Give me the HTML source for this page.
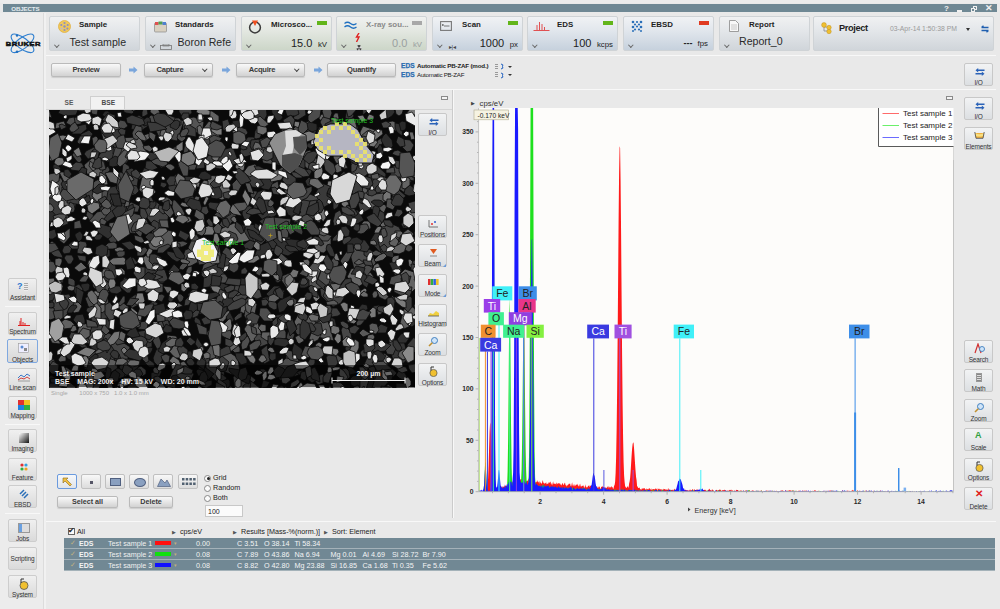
<!DOCTYPE html><html><head><meta charset="utf-8"><style>
*{margin:0;padding:0;box-sizing:border-box}
html,body{width:1000px;height:609px;overflow:hidden;background:#e9e9e9;font-family:"Liberation Sans",sans-serif;color:#222}
.a{position:absolute}
.t{position:absolute;white-space:nowrap;line-height:1}
.w{position:absolute;top:16px;height:35px;width:91px;border:1px solid #cfd3d6;border-radius:2px}
.wg{background:linear-gradient(#f0f1f2,#e4e7ea 40%,#d0d5da)}
.wgr{background:linear-gradient(#f0f1f0,#e4e8e2 40%,#ccd6c8)}
.wbl{background:linear-gradient(#f0f2f4,#e2e7ed 40%,#c6d1dd)}
.wl{position:absolute;left:35px;top:5px;font-size:9px;font-weight:bold;color:#1a1a1a}
.wv{position:absolute;right:6px;top:19px;font-size:12.5px;color:#222}
.wu{font-size:9px;color:#333}
.chev{position:absolute;left:4.5px;top:25.5px;width:3.6px;height:3.6px;border-right:1.3px solid #6a6a6a;border-bottom:1.3px solid #6a6a6a;transform:rotate(45deg)}
.btn{position:absolute;height:14px;border:1px solid #bababa;border-radius:2px;background:linear-gradient(#f9f9f9,#e6e6e6 50%,#d2d2d2);box-shadow:0 1px 1px rgba(0,0,0,0.12);font-size:8.5px;font-weight:bold;color:#3a3a3a;text-align:center;line-height:12px}
.sb{position:absolute;left:8px;width:29px;height:23px;border:1px solid #cdcdcd;border-radius:2px;background:linear-gradient(#f0f0f0,#dadada);font-size:6.5px;color:#333;text-align:center}
.sb span{position:absolute;left:-3px;right:-3px;bottom:-1px;white-space:nowrap;letter-spacing:-0.15px}
.tb{position:absolute;width:29px;height:23px;border:1px solid #c8c8c8;border-radius:2px;background:linear-gradient(#f2f3f4,#dcdfe2);font-size:6.5px;color:#333;text-align:center}
.tb span{position:absolute;left:-3px;right:-3px;bottom:-0.5px;white-space:nowrap;letter-spacing:-0.15px}
.hl{position:absolute;height:1px;background:#c4c4c4;border-bottom:1px solid #f8f8f8}
</style></head><body>
<div class="a" style="left:0;top:0;width:1000px;height:3px;background:#ececec"></div>
<div class="a" style="left:3px;top:3.8px;width:994px;height:8.6px;background:#6f8894"></div>
<div class="t" style="left:11.3px;top:5.9px;font-size:6.2px;font-weight:bold;color:#e4ecef;letter-spacing:-0.15px">OBJECTS</div>
<div class="t" style="left:944px;top:4.5px;font-size:8px;font-weight:bold;color:#f0f0f0">?</div>
<div class="a" style="left:957px;top:10px;width:5px;height:1.5px;background:#f0f0f0"></div>
<div class="a" style="left:972.5px;top:6px;width:4px;height:4px;border:1px solid #f0f0f0;border-top-width:1.5px"></div><div class="a" style="left:971px;top:7.5px;width:4px;height:4px;border:1px solid #f0f0f0;background:#6f8894"></div>
<div class="t" style="left:985px;top:4px;font-size:9px;font-weight:bold;color:#f0f0f0">&#x2715;</div>
<div class="a" style="left:0;top:13px;width:43px;height:596px;background:#ececec"></div>
<div class="a" style="left:43px;top:13px;width:3px;height:596px;background:#f1f1f1;border-left:1px solid #dcdcdc"></div>
<div class="hl" style="left:46px;top:55px;width:950px"></div>
<div class="w wg" style="left:49px;width:91px"><div class="chev"></div><svg class="a" style="left:8px;top:3px" width="13" height="13" viewBox="0 0 13 13"><circle cx="6.5" cy="6.5" r="6" fill="#f0c85a" stroke="#e0b040" stroke-width="0.8"/><circle cx="6.5" cy="6.5" r="1.2" fill="#8d8fc0"/><circle cx="6.5" cy="3" r="1.1" fill="#8d8fc0"/><circle cx="6.5" cy="10" r="1.1" fill="#8d8fc0"/><circle cx="3.3" cy="5" r="1.1" fill="#8d8fc0"/><circle cx="9.7" cy="5" r="1.1" fill="#8d8fc0"/><circle cx="3.6" cy="8.6" r="1.1" fill="#b8b8d0"/><circle cx="9.4" cy="8.6" r="1.1" fill="#8d8fc0"/></svg><div class="t" style="left:29px;top:4.3px;font-size:7.9px;font-weight:bold;color:#1e1e1e">Sample</div><div class="t" style="left:19.5px;top:20px;font-size:10.6px;color:#2a2a2a">Test sample</div></div>
<div class="w wg" style="left:145px;width:91px"><div class="chev"></div><svg class="a" style="left:8px;top:4px" width="13" height="12" viewBox="0 0 13 12"><rect x="0.5" y="2" width="12" height="9" rx="1" fill="#d8d0c0" stroke="#8a8a8a" stroke-width="0.7"/><rect x="1" y="1" width="3.5" height="3" fill="#e05050"/><rect x="4.5" y="0.5" width="4" height="3" fill="#50a050"/><rect x="8.5" y="1" width="3.5" height="3" fill="#5080d0"/></svg><svg class="a" style="left:13.5px;top:26.5px" width="12" height="6" viewBox="0 0 12 6"><rect x="0.5" y="1.5" width="11" height="4" fill="none" stroke="#777" stroke-width="0.8"/><rect x="3" y="0" width="6" height="2" fill="none" stroke="#777" stroke-width="0.7"/></svg><div class="t" style="left:29px;top:4.3px;font-size:7.9px;font-weight:bold;color:#1e1e1e">Standards</div><div class="t" style="left:31.5px;top:20px;font-size:10.6px;color:#2a2a2a;width:56px;overflow:hidden">Boron Refe</div></div>
<div class="w wgr" style="left:241px;width:91px"><div class="chev"></div><svg class="a" style="left:5.5px;top:1.5px" width="14" height="15" viewBox="0 0 14 15"><circle cx="7" cy="8.5" r="5.4" fill="none" stroke="#3a3a3a" stroke-width="1.5"/><path d="M4 1.5 L10 1.5 L7 7 Z" fill="#f05020"/></svg><div class="t" style="left:29px;top:4.3px;font-size:7.9px;font-weight:bold;color:#1e1e1e">Microsco...</div><div class="a" style="left:75px;top:4px;width:9.5px;height:3.6px;background:#62b51a"></div><div class="t" style="right:4px;top:20.5px;font-size:11px;color:#222">15.0 <span style="font-size:7.8px;margin-left:2.5px">kV</span></div></div>
<div class="w wgr" style="left:336px;width:91px"><div class="chev"></div><svg class="a" style="left:7px;top:4px" width="13" height="8" viewBox="0 0 13 8"><path d="M0.5 2.5 Q3.5 0 6.5 2.5 T12.5 2.5" fill="none" stroke="#2070c0" stroke-width="1.3"/><path d="M0.5 6 Q3.5 3.5 6.5 6 T12.5 6" fill="none" stroke="#2070c0" stroke-width="1.3"/></svg><svg class="a" style="left:18px;top:16px" width="6" height="9" viewBox="0 0 6 9"><path d="M4 0 L1.5 4 L4 4 L1.5 9" fill="none" stroke="#e02020" stroke-width="1.4"/></svg><svg class="a" style="left:19px;top:28px" width="6" height="6" viewBox="0 0 6 6"><circle cx="3" cy="3" r="2.6" fill="#ddd"/><path d="M3 3 L1.2 0.8 A2.6 2.6 0 0 1 4.8 0.8Z M3 3 L0.4 3.6 A2.6 2.6 0 0 0 2 5.6Z M3 3 L4 5.6 A2.6 2.6 0 0 0 5.6 3.6Z" fill="#444"/></svg><div class="t" style="left:29px;top:4.3px;font-size:7.9px;font-weight:bold;color:#8a8a8a">X-ray sou...</div><div class="a" style="left:75px;top:4px;width:9.5px;height:3.6px;background:#a8a8a8"></div><div class="t" style="right:4px;top:20.5px;font-size:11px;color:#9aa0a0">0.0 <span style="font-size:7.8px;margin-left:2.5px">kV</span></div></div>
<div class="w wbl" style="left:432px;width:91px"><div class="chev"></div><svg class="a" style="left:7px;top:4px" width="12" height="10" viewBox="0 0 12 10"><rect x="0.6" y="0.6" width="10.8" height="8.8" fill="none" stroke="#777" stroke-width="1.1"/><path d="M2.5 4 L4 4 M3 3 L2.3 4 L3 5 M4 5 L9.5 5" stroke="#555" stroke-width="0.8" fill="none"/></svg><div class="t" style="left:16px;top:27px;font-size:6px;color:#444;letter-spacing:-0.5px">&#9656;|&#9666;</div><div class="t" style="left:29px;top:4.3px;font-size:7.9px;font-weight:bold;color:#1e1e1e">Scan</div><div class="a" style="left:75px;top:4px;width:9.5px;height:3.6px;background:#62b51a"></div><div class="t" style="right:4px;top:20.5px;font-size:11px;color:#222">1000 <span style="font-size:7.8px;margin-left:2.5px">px</span></div></div>
<div class="w wbl" style="left:527px;width:91px"><div class="chev"></div><svg class="a" style="left:5px;top:3px" width="17" height="11" viewBox="0 0 17 11"><path d="M0.5 10.5 L16.5 10.5 M4 10 L4 5 M6.5 10 L6.5 2 M9 10 L9 4 M11.5 10 L11.5 7" stroke="#e02a2a" stroke-width="0.8" fill="none"/></svg><div class="t" style="left:29px;top:4.3px;font-size:7.9px;font-weight:bold;color:#1e1e1e">EDS</div><div class="a" style="left:75px;top:4px;width:9.5px;height:3.6px;background:#62b51a"></div><div class="t" style="right:4px;top:20.5px;font-size:11px;color:#222">100 <span style="font-size:7.8px;margin-left:2.5px">kcps</span></div></div>
<div class="w wbl" style="left:623px;width:91px"><div class="chev"></div><svg class="a" style="left:7px;top:3px" width="12" height="12" viewBox="0 0 12 12"><g fill="#2a6fb8"><circle cx="2" cy="2" r="1.3"/><circle cx="6" cy="2" r="1.1"/><circle cx="10" cy="2" r="1.3"/><circle cx="4" cy="4.5" r="1.1"/><circle cx="8" cy="4.5" r="1.1"/><circle cx="2" cy="7" r="1.3"/><circle cx="6" cy="6.5" r="1.1"/><circle cx="10" cy="7" r="1.3"/><circle cx="4" cy="9.5" r="1.1"/><circle cx="8" cy="9.5" r="1.1"/><circle cx="2" cy="11" r="1"/><circle cx="10" cy="11" r="1"/></g></svg><div class="t" style="left:27px;top:4.3px;font-size:7.9px;font-weight:bold;color:#1e1e1e">EBSD</div><div class="a" style="left:75px;top:4px;width:9.5px;height:3.6px;background:#e03a20"></div><div class="t" style="right:5px;top:22px;font-size:9px;color:#222"><b>---</b> <span style="font-size:7.8px;margin-left:2.5px">fps</span></div></div>
<div class="w wg" style="left:719px;width:91px"><div class="chev"></div><svg class="a" style="left:9px;top:3px" width="10" height="12" viewBox="0 0 10 12"><path d="M0.5 0.5 L6.5 0.5 L9.5 3.5 L9.5 11.5 L0.5 11.5 Z" fill="#f8f8f8" stroke="#888" stroke-width="0.8"/><path d="M2 5 L8 5 M2 7 L8 7 M2 9 L8 9" stroke="#aaa" stroke-width="0.6"/></svg><div class="t" style="left:29px;top:4.3px;font-size:7.9px;font-weight:bold;color:#1e1e1e">Report</div><div class="t" style="left:19px;top:19px;font-size:10.6px;color:#2a2a2a">Report_0</div></div>
<div class="w wg" style="left:813px;width:181px"><svg class="a" style="left:7px;top:5px" width="11" height="13" viewBox="0 0 11 13"><path d="M3 3 L3 9 L8 9 M3 5 L8 5" stroke="#888" stroke-width="0.8" fill="none"/><circle cx="3" cy="3" r="2.4" fill="#f0c030" stroke="#c09020" stroke-width="0.5"/><circle cx="8" cy="5.5" r="2.2" fill="#f0c030" stroke="#c09020" stroke-width="0.5"/><circle cx="8" cy="9.5" r="2.2" fill="#f0c030" stroke="#c09020" stroke-width="0.5"/></svg><div class="t" style="left:25px;top:6.5px;font-size:9.2px;font-weight:bold;color:#1e1e1e;letter-spacing:-0.35px">Project</div><div class="t" style="left:76px;top:9px;font-size:6.8px;color:#9a9a9a">03-Apr-14 1:50:38 PM</div><div class="a" style="left:152px;top:11px;width:0;height:0;border-left:2.5px solid transparent;border-right:2.5px solid transparent;border-top:3px solid #333"></div><svg class="a" style="left:167px;top:8px" width="8" height="8" viewBox="0 0 8 8"><path d="M0.5 2.5 L7.5 2.5 M0.5 2.5 L2.5 0.8 M7.5 5.5 L0.5 5.5 M7.5 5.5 L5.5 7.2" stroke="#2060b0" stroke-width="1.3" fill="none"/></svg></div>
<div class="btn" style="left:51px;top:63px;width:70px;height:14px;line-height:12.5px;font-size:7.6px;letter-spacing:-0.25px;">Preview</div>
<div class="btn" style="left:144px;top:63px;width:69px;height:14px;line-height:12.5px;font-size:7.6px;letter-spacing:-0.25px;padding-right:17px;">Capture<div class="a" style="right:6px;top:3px;width:3.5px;height:3.5px;border-right:1.3px solid #444;border-bottom:1.3px solid #444;transform:rotate(45deg)"></div></div>
<div class="btn" style="left:236px;top:63px;width:69px;height:14px;line-height:12.5px;font-size:7.6px;letter-spacing:-0.25px;padding-right:17px;">Acquire<div class="a" style="right:6px;top:3px;width:3.5px;height:3.5px;border-right:1.3px solid #444;border-bottom:1.3px solid #444;transform:rotate(45deg)"></div></div>
<div class="btn" style="left:327px;top:63px;width:69px;height:14px;line-height:12.5px;font-size:7.6px;letter-spacing:-0.25px;">Quantify</div>
<svg class="a" style="left:129px;top:66px" width="9" height="8" viewBox="0 0 9 8"><path d="M0 2.5 L4.5 2.5 L4.5 0.5 L8.5 4 L4.5 7.5 L4.5 5.5 L0 5.5 Z" fill="#7aa6dc"/></svg>
<svg class="a" style="left:221.5px;top:66px" width="9" height="8" viewBox="0 0 9 8"><path d="M0 2.5 L4.5 2.5 L4.5 0.5 L8.5 4 L4.5 7.5 L4.5 5.5 L0 5.5 Z" fill="#7aa6dc"/></svg>
<svg class="a" style="left:313.5px;top:66px" width="9" height="8" viewBox="0 0 9 8"><path d="M0 2.5 L4.5 2.5 L4.5 0.5 L8.5 4 L4.5 7.5 L4.5 5.5 L0 5.5 Z" fill="#7aa6dc"/></svg>
<div class="t" style="left:401px;top:63px;font-size:6.6px;font-weight:bold;color:#2a6cb0;-webkit-text-stroke:0.25px #2a6cb0">EDS</div>
<div class="t" style="left:417px;top:63px;font-size:6.2px;font-weight:bold;color:#222;letter-spacing:-0.17px">Automatic PB-ZAF (mod.)</div>
<div class="t" style="left:401px;top:71.5px;font-size:6.6px;font-weight:bold;color:#2a6cb0;-webkit-text-stroke:0.25px #2a6cb0">EDS</div>
<div class="t" style="left:417px;top:71.5px;font-size:6.2px;color:#222;letter-spacing:-0.25px">Automatic PB-ZAF</div>
<div class="a" style="left:495px;top:63.5px;width:3px;height:5px;background:repeating-linear-gradient(#999 0 1px,transparent 1px 2px)"></div>
<svg class="a" style="left:500px;top:63px" width="5" height="7" viewBox="0 0 5 7"><path d="M1 1 Q4 1.5 2.5 3.5 Q4 5.5 1 6" stroke="#2060c0" stroke-width="1" fill="none"/></svg>
<div class="a" style="left:508px;top:65.5px;width:0;height:0;border-left:2px solid transparent;border-right:2px solid transparent;border-top:2.5px solid #333"></div>
<div class="a" style="left:495px;top:72.0px;width:3px;height:5px;background:repeating-linear-gradient(#999 0 1px,transparent 1px 2px)"></div>
<svg class="a" style="left:500px;top:71.5px" width="5" height="7" viewBox="0 0 5 7"><path d="M1 1 Q4 1.5 2.5 3.5 Q4 5.5 1 6" stroke="#2060c0" stroke-width="1" fill="none"/></svg>
<div class="a" style="left:508px;top:74.0px;width:0;height:0;border-left:2px solid transparent;border-right:2px solid transparent;border-top:2.5px solid #333"></div>
<div class="tb" style="left:964px;top:63px;height:23px"><svg class="a" style="left:9.5px;top:4px" width="10" height="8" viewBox="0 0 10 8"><path d="M0.5 2.2 L3.2 0 L3.2 1.4 L9.5 1.4 L9.5 3 L3.2 3 L3.2 4.4 Z M9.5 5.8 L6.8 3.6 L6.8 5 L0.5 5 L0.5 6.6 L6.8 6.6 L6.8 8 Z" fill="#2a62b8"/></svg><span>I/O</span></div>
<div class="hl" style="left:46px;top:89px;width:950px"></div>
<svg class="a" style="left:4px;top:31px" width="38" height="25" viewBox="0 0 38 25"><ellipse cx="18.5" cy="12.3" rx="13.6" ry="5.4" transform="rotate(37 18.5 12.3)" fill="none" stroke="#2f7fcf" stroke-width="1.15"/><ellipse cx="18.5" cy="12.3" rx="13.6" ry="5.4" transform="rotate(-37 18.5 12.3)" fill="none" stroke="#2f7fcf" stroke-width="1.15"/><circle cx="13" cy="4.6" r="1.2" fill="#1f6fc0"/><circle cx="13" cy="20.8" r="1.2" fill="#1f6fc0"/><text x="0" y="0" transform="translate(19.4 15) scale(1.36 1)" text-anchor="middle" font-family="Liberation Sans" font-weight="bold" font-size="5.6" fill="#111" letter-spacing="0.35" stroke="#111" stroke-width="0.45">BRUKER</text></svg>
<div class="sb" style="top:278px;"><div class="t" style="left:8px;top:3px;font-size:9px;font-weight:bold;color:#2878d0">?</div><div class="a" style="left:15px;top:4px;width:4px;height:8px;background:repeating-linear-gradient(#aaa 0 1px,#eee 1px 2px)"></div><span>Assistant</span></div>
<div class="hl" style="left:5px;top:306px;width:35px"></div>
<div class="sb" style="top:312px;"><svg class="a" style="left:8px;top:3px" width="14" height="10" viewBox="0 0 14 10"><path d="M1 9.5 L13 9.5 M3 9 L3 5 M4 9 L4 2 M6 9 L6 6 M8 9 L8 7" stroke="#e02020" stroke-width="1" fill="none"/></svg><span>Spectrum</span></div>
<div class="sb" style="top:339px;border:1.5px solid #7fa8e0;background:linear-gradient(#ececec,#d8d8d8);left:7px;width:31px;height:24px"><svg class="a" style="left:10px;top:3px" width="11" height="10" viewBox="0 0 11 10"><rect x="0.5" y="0.5" width="10" height="9" fill="#eef" stroke="#999" stroke-width="0.6"/><circle cx="4" cy="4" r="1.5" fill="#5a8ad0"/><rect x="6" y="5" width="3" height="3" fill="#888"/></svg><span>Objects</span></div>
<div class="sb" style="top:368px;"><svg class="a" style="left:8px;top:3px" width="14" height="10" viewBox="0 0 14 10"><path d="M1 9 L13 9" stroke="#888" stroke-width="0.8"/><path d="M1 6 L4 3 L7 5 L10 2 L13 4" stroke="#3a78c8" stroke-width="1" fill="none"/><path d="M1 8 L4 6 L7 7 L10 5 L13 7" stroke="#d04040" stroke-width="1" fill="none"/></svg><span>Line scan</span></div>
<div class="sb" style="top:396px;"><svg class="a" style="left:9px;top:3px" width="12" height="10" viewBox="0 0 12 10"><rect x="0" y="0" width="6" height="5" fill="#e03030"/><rect x="6" y="0" width="6" height="5" fill="#f0c020"/><rect x="0" y="5" width="6" height="5" fill="#2080e0"/><rect x="6" y="5" width="6" height="5" fill="#30b040"/></svg><span>Mapping</span></div>
<div class="hl" style="left:5px;top:424px;width:35px"></div>
<div class="sb" style="top:429px;"><div class="a" style="left:10px;top:3px;width:10px;height:10px;background:linear-gradient(135deg,#fff,#111)"></div><span>Imaging</span></div>
<div class="sb" style="top:458px;"><svg class="a" style="left:10px;top:3px" width="10" height="10" viewBox="0 0 10 10"><circle cx="3" cy="3" r="1.6" fill="#e03030"/><circle cx="7" cy="3" r="1.6" fill="#30a0e0"/><circle cx="3" cy="7" r="1.6" fill="#30b040"/><circle cx="7" cy="7" r="1.6" fill="#f0a020"/></svg><span>Feature</span></div>
<div class="sb" style="top:485px;"><svg class="a" style="left:10px;top:3px" width="10" height="10" viewBox="0 0 10 10"><path d="M1 5 L5 1 M3 7 L7 3 M5 9 L9 5" stroke="#2a6fb8" stroke-width="1.5"/></svg><span>EBSD</span></div>
<div class="hl" style="left:5px;top:513px;width:35px"></div>
<div class="sb" style="top:519px;"><div class="a" style="left:9px;top:3px;width:12px;height:10px;border:1px solid #999;background:linear-gradient(90deg,#6aa0e0 0 3px,#ddd 3px)"></div><span>Jobs</span></div>
<div class="sb" style="top:547px"><span style="bottom:7.5px">Scripting</span></div>
<div class="sb" style="top:575px;"><svg class="a" style="left:9px;top:2px" width="12" height="12" viewBox="0 0 12 12"><circle cx="6" cy="7.5" r="4" fill="#f0c030" stroke="#555" stroke-width="0.8"/><path d="M3 1 L3 5 M3 1 L6 1" stroke="#333" stroke-width="1"/></svg><span>System</span></div>
<div class="t" style="left:64.5px;top:100px;font-size:6.6px;font-weight:bold;color:#5a5a5a">SE</div>
<div class="a" style="left:90px;top:96px;width:35px;height:15px;border:1px solid #cfcfcf;border-bottom:none;background:#f2f2f2"></div>
<div class="t" style="left:101.5px;top:100px;font-size:6.6px;font-weight:bold;color:#4a4a4a">BSE</div>
<div class="a" style="left:441px;top:95.5px;width:6.5px;height:4.5px;border:1px solid #8a8a8a;border-top:1.6px solid #8a8a8a;background:#f4f4f4"></div>
<div class="a" style="left:946px;top:95.5px;width:6.5px;height:4.5px;border:1px solid #8a8a8a;border-top:1.6px solid #8a8a8a;background:#f4f4f4"></div>
<div class="a" style="left:46px;top:109px;width:406px;height:1px;background:#d4d4d4"></div>
<svg class="a" style="left:49px;top:110px" width="366" height="278" viewBox="0 0 366 278"><rect width="366" height="278" fill="#0a0a0a"/><g stroke="#0a0a0a" stroke-width="0.8" stroke-linejoin="round"><polygon points="272,99 265,86 272,73 287,78 289,89" fill="#3a3a3a"/><polygon points="6,194 -5,189 -5,182 0,174 9,175 13,180 11,191" fill="#313131"/><polygon points="239,180 230,167 243,162 248,175" fill="#4e4e4e"/><polygon points="66,96 70,90 83,96 90,111 78,119 69,111" fill="#393939"/><polygon points="187,143 187,157 178,161 168,156 176,140" fill="#3e3e3e"/><polygon points="363,70 356,83 339,72 344,56 359,56" fill="#474747"/><polygon points="28,269 45,272 38,290 27,284" fill="#3c3c3c"/><polygon points="1,191 16,187 25,195 18,204 8,204 0,200" fill="#303030"/><polygon points="189,170 196,168 207,175 201,187 191,187 184,180" fill="#393939"/><polygon points="98,157 106,169 102,177 89,169 92,159" fill="#5f5f5f"/><polygon points="325,167 309,177 298,167 302,159 315,154" fill="#666666"/><polygon points="338,80 335,91 312,104 308,90 314,79" fill="#414141"/><polygon points="363,182 350,175 346,169 356,159 365,162 369,176" fill="#636363"/><polygon points="324,59 313,69 302,64 302,52 328,45" fill="#474747"/><polygon points="36,248 46,239 67,248 69,262 41,263" fill="#5c5c5c"/><polygon points="188,104 178,120 170,115 181,98" fill="#424242"/><polygon points="308,28 314,16 326,20 328,32 318,38" fill="#696969"/><polygon points="75,30 66,41 56,37 51,18 57,8 70,14" fill="#5d5d5d"/><polygon points="76,74 78,90 67,106 55,114 51,102 51,88 62,77" fill="#363636"/><polygon points="173,192 182,203 173,213 162,202" fill="#676767"/><polygon points="153,42 153,53 144,53 134,44 136,33 149,34" fill="#424242"/><polygon points="86,168 98,156 110,155 116,172 107,178 95,176" fill="#353535"/><polygon points="46,228 60,223 81,237 78,254 59,248" fill="#454545"/><polygon points="186,281 184,267 191,261 204,274 203,288 198,292" fill="#686868"/><polygon points="167,177 167,170 183,177 186,189 180,191 168,184" fill="#2e2e2e"/><polygon points="53,185 44,177 43,169 57,167 63,173 62,181" fill="#4b4b4b"/><polygon points="213,226 202,232 195,219 206,203" fill="#606060"/><polygon points="19,80 11,92 4,93 -10,82 -9,72 3,68 12,68" fill="#4c4c4c"/><polygon points="40,201 50,194 63,198 65,211 58,223 43,212" fill="#3b3b3b"/><polygon points="277,167 283,173 285,188 279,193 272,186 270,173" fill="#3e3e3e"/><polygon points="228,104 217,114 204,99 206,83 216,79" fill="#343434"/><polygon points="86,241 86,222 103,219 103,237" fill="#383838"/><polygon points="105,90 120,102 118,117 107,119 98,108 93,94" fill="#424242"/><polygon points="341,241 343,229 355,230 359,249 350,257 346,256" fill="#363636"/><polygon points="262,180 255,164 267,149 277,159 275,178" fill="#525252"/><polygon points="160,32 152,21 160,11 168,17 172,32" fill="#5a5a5a"/><polygon points="219,140 217,132 230,124 241,127 246,142 239,146" fill="#313131"/><polygon points="69,85 70,62 90,64 87,85" fill="#3f3f3f"/><polygon points="66,152 68,166 64,174 55,170 54,161 56,152" fill="#373737"/><polygon points="105,116 114,119 123,121 125,133 116,140 101,140 99,134" fill="#585858"/><polygon points="274,101 263,106 245,102 235,80 249,79 268,87" fill="#4a4a4a"/><polygon points="96,106 101,117 91,124 72,122 63,114 73,105 79,102" fill="#494949"/><polygon points="316,33 316,40 303,39 294,34 294,29 305,24" fill="#636363"/><polygon points="342,122 345,148 333,145 321,131 330,116" fill="#313131"/><polygon points="203,130 180,135 167,121 185,113 203,117" fill="#676767"/><polygon points="326,265 312,261 318,248 331,240 339,248 339,262" fill="#3f3f3f"/><polygon points="239,128 223,127 223,107 242,109" fill="#4a4a4a"/><polygon points="232,220 224,214 227,205 240,203 243,211 241,218" fill="#2f2f2f"/><polygon points="303,117 293,113 288,107 298,100 309,100 315,110" fill="#2d2d2d"/><polygon points="301,144 307,135 323,144 327,153 316,165 305,159" fill="#4c4c4c"/><polygon points="-5,113 -8,102 -5,98 9,100 13,106 7,113" fill="#4f4f4f"/><polygon points="152,163 157,145 170,134 175,161 162,179" fill="#4d4d4d"/><polygon points="43,48 55,50 57,58 56,65 46,67 38,64 35,55" fill="#595959"/><polygon points="50,69 59,81 57,92 51,91 40,77 46,71" fill="#4d4d4d"/><polygon points="282,186 267,173 272,160 284,158 293,175" fill="#393939"/><polygon points="254,213 263,202 279,210 285,231 265,226" fill="#565656"/><polygon points="37,249 42,238 57,228 65,240 56,261 42,267" fill="#363636"/><polygon points="329,73 338,90 325,101 313,91 316,74" fill="#585858"/><polygon points="319,85 314,79 319,73 331,73 330,81" fill="#4f4f4f"/><polygon points="95,84 90,80 94,62 102,61 105,66 103,80" fill="#686868"/><polygon points="126,255 135,251 145,264 141,273 130,274 120,269" fill="#5b5b5b"/><polygon points="82,19 84,9 90,5 102,14 92,21" fill="#353535"/><polygon points="263,10 268,26 251,34 240,23 248,15" fill="#4d4d4d"/><polygon points="5,203 2,194 6,186 20,184 26,194 15,208" fill="#424242"/><polygon points="29,86 26,98 12,95 13,77" fill="#5b5b5b"/><polygon points="127,226 134,237 132,248 126,248 118,239 118,225" fill="#606060"/><polygon points="362,196 372,203 370,212 355,219 351,213 355,199" fill="#5e5e5e"/><polygon points="172,238 173,243 165,256 154,254 154,247 163,233" fill="#535353"/><polygon points="247,247 250,258 246,264 240,264 236,259 237,246 240,242" fill="#434343"/><polygon points="307,67 314,72 319,81 309,89 300,87 296,78" fill="#5d5d5d"/><polygon points="31,84 17,84 12,74 18,64 32,73" fill="#333333"/><polygon points="-5,105 -9,97 -1,88 7,88 15,99 15,105 4,111" fill="#3b3b3b"/><polygon points="236,37 216,48 198,41 202,32 230,23" fill="#434343"/><polygon points="200,187 208,194 206,204 191,203 192,194" fill="#606060"/><polygon points="60,193 58,197 43,202 39,196 36,188 47,182 57,182" fill="#464646"/><polygon points="134,22 134,9 145,7 155,12 153,23" fill="#545454"/><polygon points="314,71 313,87 298,94 291,72 301,65" fill="#3e3e3e"/><polygon points="268,105 258,116 248,114 239,104 233,93 255,90 266,92" fill="#3f3f3f"/><polygon points="203,134 195,121 198,114 207,115 214,127 213,134" fill="#353535"/><polygon points="126,214 115,209 115,199 126,198 131,210" fill="#4f4f4f"/><polygon points="167,271 157,262 157,253 162,249 170,247 176,257 175,269" fill="#535353"/><polygon points="279,177 269,169 275,153 285,166" fill="#4e4e4e"/><polygon points="265,135 266,130 275,125 282,128 282,135 275,143 268,142" fill="#5c5c5c"/><polygon points="170,260 168,248 177,240 189,248 191,263 184,265" fill="#5e5e5e"/><polygon points="92,250 88,261 75,267 70,257 76,249" fill="#434343"/><polygon points="37,215 53,215 59,219 52,233 44,235 33,232 30,228" fill="#3a3a3a"/><polygon points="188,186 187,195 179,201 169,201 168,191 173,180 183,181" fill="#313131"/><polygon points="224,260 237,248 252,251 250,265 232,271" fill="#4d4d4d"/><polygon points="207,36 205,44 196,47 191,42 193,34 199,27 206,27" fill="#373737"/><polygon points="334,110 350,117 354,125 351,138 332,142 329,131" fill="#464646"/><polygon points="103,11 117,4 135,11 132,20 128,31 110,27 105,17" fill="#464646"/><polygon points="75,56 48,49 55,37 71,28 88,40" fill="#3c3c3c"/><polygon points="211,61 218,70 215,78 206,77 201,70" fill="#454545"/><polygon points="322,50 337,64 335,83 318,71" fill="#383838"/><polygon points="260,60 243,46 261,40 274,57" fill="#525252"/><polygon points="342,70 343,82 326,84 322,73 329,64" fill="#404040"/><polygon points="322,261 337,253 348,263 332,280 323,279" fill="#474747"/><polygon points="87,31 88,44 76,47 62,36 71,28" fill="#2f2f2f"/><polygon points="293,176 295,188 292,193 284,197 274,186 277,180 282,169" fill="#444444"/><polygon points="108,161 98,159 93,148 99,144 106,145 111,157" fill="#666666"/><polygon points="209,35 222,30 235,40 236,54 228,55 214,53" fill="#505050"/><polygon points="139,202 142,189 152,188 158,196 150,204" fill="#2e2e2e"/><polygon points="154,178 155,159 168,154 176,164 171,175" fill="#363636"/><polygon points="18,93 20,74 43,75 53,97" fill="#3d3d3d"/><polygon points="32,230 28,227 28,223 31,213 40,214 43,216 39,228" fill="#595959"/><polygon points="91,27 98,43 84,48 64,44 65,28" fill="#5f5f5f"/><polygon points="91,175 103,170 113,179 97,183" fill="#494949"/><polygon points="161,43 184,37 190,53 171,59 153,55" fill="#393939"/><polygon points="157,84 159,65 176,67 183,85 173,90" fill="#626262"/><polygon points="98,236 86,242 80,229 88,223" fill="#626262"/><polygon points="360,112 358,118 354,118 352,114 356,109" fill="#3b3b3b"/><polygon points="80,102 77,97 82,92 91,96 89,102" fill="#464646"/><polygon points="-3,6 -4,-3 -0,-1 3,8" fill="#595959"/><polygon points="269,230 265,232 260,229 263,220 267,218 272,225" fill="#5a5a5a"/><polygon points="100,138 104,140 101,147 98,147 97,143" fill="#727272"/><polygon points="143,264 136,264 132,263 133,257 136,256 144,260" fill="#616161"/><polygon points="34,8 32,14 26,15 23,9 27,7" fill="#454545"/><polygon points="279,174 285,178 282,182 277,182 275,177" fill="#323232"/><polygon points="194,228 199,226 201,231 198,238 193,240 192,235" fill="#4e4e4e"/><polygon points="108,215 113,208 123,206 126,211 120,216 112,218" fill="#434343"/><polygon points="173,187 168,184 163,180 161,175 163,173 171,177 174,182" fill="#7a7a7a"/><polygon points="242,113 246,122 241,125 237,118" fill="#4b4b4b"/><polygon points="53,88 48,92 43,86 44,82 50,79 53,80" fill="#767676"/><polygon points="31,131 37,132 38,135 36,143 32,144 28,143 29,133" fill="#454545"/><polygon points="132,44 142,41 145,48 138,55 131,53" fill="#2b2b2b"/><polygon points="147,59 147,51 155,48 156,58" fill="#383838"/><polygon points="375,274 369,271 367,268 372,266 377,271" fill="#4a4a4a"/><polygon points="8,47 3,47 1,37 6,31 11,33 12,41" fill="#313131"/><polygon points="300,233 302,237 301,241 299,244 296,239 297,234" fill="#333333"/><polygon points="61,60 55,68 52,64 54,60 59,56" fill="#404040"/><polygon points="201,182 197,189 187,194 183,189 189,183" fill="#464646"/><polygon points="285,79 282,75 285,71 286,70 289,71 289,76 287,78" fill="#474747"/><polygon points="152,5 155,7 154,11 150,13 148,10 148,6" fill="#797979"/><polygon points="64,5 62,9 58,8 53,5 56,1 59,1" fill="#2a2a2a"/><polygon points="102,13 99,8 102,5 109,7 108,13" fill="#494949"/><polygon points="92,256 97,260 97,264 94,266 93,266 89,262 88,258" fill="#6e6e6e"/><polygon points="282,198 288,198 292,204 289,206 283,207 279,205" fill="#404040"/><polygon points="42,283 43,277 50,268 53,271 49,281" fill="#444444"/><polygon points="194,40 191,38 192,34 197,34 198,39" fill="#383838"/><polygon points="125,93 123,95 117,95 112,91 113,88 118,87 121,89" fill="#4b4b4b"/><polygon points="253,289 254,284 262,281 265,287 258,291" fill="#444444"/><polygon points="351,234 350,239 341,239 340,229 345,229" fill="#6c6c6c"/><polygon points="246,96 252,102 247,108 239,105 236,98 239,92" fill="#2e2e2e"/><polygon points="240,288 235,287 231,281 236,277 243,280 243,284" fill="#727272"/><polygon points="127,36 130,41 129,46 120,50 115,49 117,43" fill="#444444"/><polygon points="260,176 256,178 251,178 250,172 251,170 256,167 260,170" fill="#2c2c2c"/><polygon points="327,240 324,246 313,247 311,243 312,241 318,237 326,239" fill="#393939"/><polygon points="358,235 365,227 369,233 369,241 362,244" fill="#3b3b3b"/><polygon points="146,67 148,73 135,74 136,66" fill="#303030"/><polygon points="22,200 25,193 29,192 33,196 30,202 25,203" fill="#636363"/><polygon points="207,270 201,276 195,268 201,265" fill="#747474"/><polygon points="19,214 14,222 10,226 6,221 12,212" fill="#6b6b6b"/><polygon points="47,228 43,232 39,229 43,222 49,220" fill="#4a4a4a"/><polygon points="233,170 229,173 227,172 226,170 228,167 232,166 233,167" fill="#393939"/><polygon points="105,43 109,45 112,54 110,55 103,52 98,47 100,42" fill="#333333"/><polygon points="226,139 220,138 216,130 222,128 228,134" fill="#333333"/><polygon points="182,285 180,282 179,279 181,275 185,279 185,283" fill="#323232"/><polygon points="327,108 330,106 335,107 336,111 337,116 333,117 328,112" fill="#656565"/><polygon points="338,244 335,236 344,231 348,236 344,245" fill="#434343"/><polygon points="151,87 149,92 144,90 147,86" fill="#5c5c5c"/><polygon points="137,106 141,107 143,111 138,113 134,108" fill="#6b6b6b"/><polygon points="17,13 20,8 25,7 26,12 23,16" fill="#4f4f4f"/><polygon points="109,260 113,261 109,270 103,272 102,270 102,263" fill="#434343"/><polygon points="253,168 256,168 258,170 259,172 256,175 252,175 251,173" fill="#454545"/><polygon points="271,188 267,192 264,188 265,180 268,181" fill="#7c7c7c"/><polygon points="219,234 211,237 205,229 209,224 218,225" fill="#454545"/><polygon points="30,223 34,218 41,220 41,226 35,230 32,228" fill="#5d5d5d"/><polygon points="24,251 19,249 16,245 21,243 25,248" fill="#2b2b2b"/><polygon points="329,223 326,220 332,214 339,217 337,223" fill="#353535"/><polygon points="5,198 7,208 1,210 -4,206 -5,197" fill="#4b4b4b"/><polygon points="173,87 168,89 162,88 162,81 164,77 169,75 173,82" fill="#313131"/><polygon points="250,279 256,283 256,290 250,289 245,281" fill="#2b2b2b"/><polygon points="54,60 51,60 49,55 49,52 52,50 55,52 57,59" fill="#4a4a4a"/><polygon points="155,245 157,244 161,248 160,251 160,253 155,253 153,249" fill="#3a3a3a"/><polygon points="191,100 191,92 197,94 195,105" fill="#4a4a4a"/><polygon points="122,82 119,78 121,69 127,64 130,70 125,82" fill="#3a3a3a"/><polygon points="196,288 192,287 188,285 188,281 191,281 195,284" fill="#777777"/><polygon points="151,134 146,135 142,134 142,127 147,124 150,128" fill="#464646"/><polygon points="100,131 96,127 100,123 105,123 107,123 110,128 104,131" fill="#353535"/><polygon points="30,150 28,145 37,146 37,152" fill="#444444"/><polygon points="271,203 273,207 271,211 267,213 265,210 266,203" fill="#404040"/><polygon points="92,29 95,25 101,23 104,26 95,32" fill="#636363"/><polygon points="174,130 180,121 187,124 189,129 185,135 177,133" fill="#454545"/><polygon points="239,221 246,224 243,232 237,228" fill="#3e3e3e"/><polygon points="286,209 288,218 283,219 279,212 282,207" fill="#2b2b2b"/><polygon points="114,104 109,100 110,95 116,97 119,102" fill="#444444"/><polygon points="96,245 95,243 96,239 101,237 104,238 103,241 101,244" fill="#2d2d2d"/><polygon points="62,25 66,20 70,19 72,26 72,34 68,40 64,36" fill="#353535"/><polygon points="210,102 208,98 214,96 216,102 214,105" fill="#363636"/><polygon points="254,211 250,222 245,212 250,203" fill="#636363"/><polygon points="-3,180 -5,176 -3,173 1,172 3,174 4,179 1,181" fill="#5e5e5e"/><polygon points="181,202 185,210 181,215 177,207" fill="#2d2d2d"/><polygon points="147,214 145,211 146,207 147,207 151,210 153,216 152,217" fill="#363636"/><polygon points="119,134 122,136 114,143 108,143 109,138" fill="#434343"/><polygon points="278,86 278,83 285,81 287,85 283,89" fill="#2b2b2b"/><polygon points="341,110 344,114 344,117 341,117 336,115 334,110" fill="#3b3b3b"/><polygon points="249,246 250,252 241,250 236,244 237,240 243,241" fill="#494949"/><polygon points="66,251 64,244 70,244 72,249" fill="#2e2e2e"/><polygon points="173,264 178,268 175,272 168,270 168,265" fill="#4e4e4e"/><polygon points="207,122 209,127 208,131 206,132 203,128 203,123 205,123" fill="#595959"/><polygon points="155,21 155,27 149,24 148,17 151,15" fill="#6c6c6c"/><polygon points="356,64 359,62 361,61 365,66 365,71 360,70" fill="#474747"/><polygon points="269,275 265,270 268,266 274,264 276,268 274,273" fill="#717171"/><polygon points="350,131 347,137 341,135 340,132 346,127" fill="#606060"/><polygon points="177,261 169,262 166,253 173,246 180,252" fill="#3d3d3d"/><polygon points="320,79 312,77 310,73 315,66 322,68 324,74" fill="#3d3d3d"/><polygon points="157,224 159,220 166,224 168,228 162,229" fill="#565656"/><polygon points="7,175 -4,176 -6,169 5,168" fill="#6f6f6f"/><polygon points="274,223 269,226 262,223 262,217 267,213 272,213" fill="#3c3c3c"/><polygon points="325,199 324,196 330,195 334,198 334,202" fill="#333333"/><polygon points="81,188 87,184 89,195 82,199" fill="#3e3e3e"/><polygon points="355,117 355,108 359,106 360,113" fill="#575757"/><polygon points="365,195 373,191 373,200 367,204" fill="#7c7c7c"/><polygon points="300,94 297,100 292,94 296,87" fill="#747474"/><polygon points="337,12 344,11 356,19 347,21 338,17" fill="#636363"/><polygon points="341,191 343,185 348,190 345,195" fill="#383838"/><polygon points="364,152 364,155 363,159 360,156 359,150 361,149" fill="#6d6d6d"/><polygon points="114,153 112,156 106,157 100,151 101,144 106,144 112,147" fill="#3a3a3a"/><polygon points="269,54 267,63 259,59 261,51" fill="#424242"/><polygon points="367,280 357,284 347,280 347,273 360,274" fill="#2f2f2f"/><polygon points="178,278 172,274 173,271 179,269 181,271 181,276" fill="#333333"/><polygon points="197,267 189,269 180,261 180,258 191,260" fill="#323232"/><polygon points="315,145 315,136 325,142 323,150" fill="#3c3c3c"/><polygon points="42,91 38,93 34,89 40,85" fill="#303030"/><polygon points="150,263 149,257 156,257 165,264 159,270" fill="#2c2c2c"/><polygon points="95,39 94,36 100,35 104,39 101,42" fill="#585858"/><polygon points="37,201 38,198 44,196 48,197 47,201 41,204" fill="#3c3c3c"/><polygon points="47,187 44,186 41,185 43,182 49,180 53,182 51,186" fill="#767676"/><polygon points="92,212 82,204 82,197 93,206" fill="#797979"/><polygon points="261,159 258,167 250,164 255,158" fill="#4b4b4b"/><polygon points="218,5 212,17 205,8 210,-6 217,-5" fill="#343434"/><polygon points="130,8 132,10 132,15 128,16 125,12 126,8" fill="#474747"/><polygon points="279,284 274,288 272,285 275,277 278,278" fill="#6e6e6e"/><polygon points="183,85 180,89 175,88 174,83 181,81" fill="#454545"/><polygon points="152,209 160,205 164,213 155,215" fill="#3c3c3c"/><polygon points="118,141 128,143 133,149 128,152 123,149 118,144" fill="#343434"/><polygon points="223,212 228,207 229,213 224,218" fill="#3c3c3c"/><polygon points="24,17 37,14 38,19 32,24 23,24" fill="#363636"/><polygon points="372,216 379,219 381,223 375,226 369,221 370,218" fill="#6e6e6e"/><polygon points="95,-3 98,-2 99,4 96,6 93,7 93,2" fill="#3e3e3e"/><polygon points="335,243 340,247 337,256 332,253" fill="#777777"/><polygon points="324,110 326,103 329,100 335,102 336,108 333,113 327,113" fill="#3a3a3a"/><polygon points="379,7 379,12 370,13 369,6" fill="#797979"/><polygon points="290,8 289,10 287,11 285,10 284,6 286,3 289,3" fill="#5c5c5c"/><polygon points="377,15 378,20 377,25 373,21 372,16 373,14" fill="#7a7a7a"/><polygon points="311,181 316,178 318,180 316,185 312,185" fill="#757575"/><polygon points="103,120 102,113 105,110 110,113 110,119 106,123" fill="#3c3c3c"/><polygon points="51,195 56,194 57,200 53,203 50,200" fill="#5f5f5f"/><polygon points="10,165 15,168 14,173 11,173 6,168 6,165" fill="#2f2f2f"/><polygon points="240,81 244,89 241,94 237,86" fill="#6e6e6e"/><polygon points="139,288 136,291 130,288 130,281 134,278 141,281" fill="#484848"/><polygon points="71,123 68,130 62,125 60,122 63,114 69,117" fill="#5c5c5c"/><polygon points="129,126 131,120 141,125 137,131" fill="#363636"/><polygon points="180,201 178,197 184,192 193,188 197,190 197,194 189,199" fill="#424242"/><polygon points="44,104 45,109 41,111 37,105 38,101" fill="#424242"/><polygon points="71,115 69,121 64,122 60,120 60,113 66,112" fill="#5e5e5e"/><polygon points="359,59 352,59 351,53 354,44 361,47 364,52" fill="#404040"/><polygon points="329,91 338,96 335,103 327,97" fill="#5e5e5e"/><polygon points="211,35 208,39 203,40 201,36 202,30 210,29" fill="#373737"/><polygon points="346,2 343,6 338,9 334,4 338,-4 344,-3" fill="#2e2e2e"/><polygon points="251,131 258,131 259,138 256,141 248,141 246,135" fill="#373737"/><polygon points="44,92 50,93 51,98 43,104 39,101 38,96" fill="#777777"/><polygon points="317,29 320,25 328,19 333,20 334,24 325,31" fill="#767676"/><polygon points="237,111 240,112 239,116 231,121 230,117 230,115" fill="#434343"/><polygon points="304,91 296,91 295,84 303,81" fill="#353535"/><polygon points="314,187 311,185 315,181 319,184 319,187" fill="#6c6c6c"/><polygon points="44,202 46,191 52,198 52,209 46,208" fill="#707070"/><polygon points="217,221 213,222 209,218 212,214 217,215" fill="#666666"/><polygon points="49,28 49,36 47,39 44,35 43,28 47,26" fill="#555555"/><polygon points="14,103 17,102 21,110 18,114 15,111" fill="#404040"/><polygon points="98,220 89,219 90,212 98,211 99,214" fill="#414141"/><polygon points="49,217 38,217 37,209 47,212" fill="#4c4c4c"/><polygon points="348,150 353,161 346,166 340,153" fill="#313131"/><polygon points="264,37 262,39 258,37 257,36 259,33 265,33 266,34" fill="#323232"/><polygon points="316,130 321,137 318,142 307,140 306,135 307,130" fill="#363636"/><polygon points="133,280 139,275 142,278 136,282" fill="#383838"/><polygon points="28,15 30,18 25,22 22,22 20,19 22,15 26,12" fill="#4e4e4e"/><polygon points="283,204 281,211 274,213 269,208 270,200 278,200" fill="#333333"/><polygon points="253,260 257,262 259,266 253,267 247,262" fill="#404040"/><polygon points="21,103 19,97 21,92 25,94 26,99 25,102" fill="#4a4a4a"/><polygon points="299,129 308,127 314,131 312,134 308,138 298,135 296,131" fill="#2b2b2b"/><polygon points="142,73 147,69 151,73 150,77 143,77" fill="#646464"/><polygon points="233,273 232,268 237,264 239,267 242,270 237,274" fill="#7d7d7d"/><polygon points="19,286 21,280 24,281 28,285 29,292 23,294" fill="#2e2e2e"/><polygon points="324,256 326,257 327,262 326,269 321,268 320,263 319,258" fill="#464646"/><polygon points="186,243 183,240 184,236 189,235 191,238 191,242" fill="#4e4e4e"/><polygon points="13,235 17,232 22,232 26,237 20,238" fill="#737373"/><polygon points="363,62 369,61 371,66 368,68 363,67" fill="#4c4c4c"/><polygon points="227,154 231,154 234,164 232,170 226,167 223,160" fill="#2d2d2d"/><polygon points="144,137 143,142 135,152 133,150 136,140" fill="#444444"/><polygon points="327,140 331,142 334,145 327,146 323,145 322,143" fill="#4a4a4a"/><polygon points="158,266 149,266 147,261 149,259 156,261" fill="#353535"/><polygon points="48,102 57,100 58,105 55,109 46,115 43,113 40,111" fill="#4f4f4f"/><polygon points="332,125 332,120 333,119 336,118 338,123 338,126 334,128" fill="#4e4e4e"/><polygon points="205,28 206,21 209,16 213,18 214,21 211,28 207,29" fill="#3f3f3f"/><polygon points="321,276 326,278 323,282 319,283 317,278" fill="#333333"/><polygon points="251,134 259,128 263,126 263,131 257,140 252,140 249,141" fill="#5b5b5b"/><polygon points="346,63 337,63 337,59 345,57" fill="#4d4d4d"/><polygon points="124,218 120,212 124,208 126,208 137,212 136,218 130,219" fill="#434343"/><polygon points="356,263 358,267 354,270 350,268 347,265 350,260" fill="#434343"/><polygon points="148,227 156,239 152,242 146,234" fill="#343434"/><polygon points="69,73 74,78 72,82 67,78" fill="#373737"/><polygon points="106,222 108,221 112,232 112,237 109,241 104,232 103,226" fill="#414141"/><polygon points="162,1 161,5 152,5 147,2 149,-2 154,-2" fill="#7d7d7d"/><polygon points="353,238 351,241 348,241 344,235 344,230 348,230" fill="#363636"/><polygon points="40,-4 43,-4 49,0 48,5 43,4" fill="#4a4a4a"/><polygon points="282,162 280,153 287,145 290,153 286,164" fill="#4e4e4e"/><polygon points="215,259 220,263 218,265 212,263 211,259" fill="#4c4c4c"/><polygon points="137,251 133,241 142,241 146,249" fill="#2a2a2a"/><polygon points="115,51 116,45 121,46 120,53" fill="#3c3c3c"/><polygon points="49,249 43,253 40,249 46,244 49,245" fill="#2b2b2b"/><polygon points="189,236 180,243 179,236 186,229 190,230" fill="#616161"/><polygon points="238,33 241,26 254,32 250,38" fill="#444444"/><polygon points="0,64 11,62 10,71 5,74 -2,70" fill="#585858"/><polygon points="127,132 134,131 139,133 137,135 133,137 130,137 124,134" fill="#4c4c4c"/><polygon points="39,31 31,29 32,24 40,20 44,24" fill="#343434"/><polygon points="231,176 230,182 221,188 217,184 225,176" fill="#333333"/><polygon points="256,-4 257,5 249,10 244,9 248,-2" fill="#3e3e3e"/><polygon points="26,49 23,45 25,42 31,45 33,50 30,54" fill="#444444"/><polygon points="18,203 20,198 23,195 27,195 28,197 23,203" fill="#2a2a2a"/><polygon points="71,137 75,139 75,140 73,142 70,143 66,141 65,138" fill="#676767"/><polygon points="59,74 56,76 50,71 51,62 57,66" fill="#727272"/><polygon points="330,145 335,143 338,146 334,150 327,152 325,150" fill="#676767"/><polygon points="149,204 148,193 157,194 161,204" fill="#343434"/><polygon points="49,90 56,86 59,91 52,94" fill="#3f3f3f"/><polygon points="345,50 357,52 355,59 347,58" fill="#3e3e3e"/><polygon points="315,82 315,86 314,89 307,87 306,83 310,81" fill="#464646"/><polygon points="302,10 296,8 298,-2 302,-2 305,6" fill="#373737"/><polygon points="240,136 236,130 242,129 250,130 254,139 248,142" fill="#2c2c2c"/><polygon points="311,207 314,204 318,206 317,209 312,215 308,216 307,213" fill="#444444"/><polygon points="190,33 186,28 183,21 187,20 193,26 194,30" fill="#6a6a6a"/><polygon points="357,182 363,188 363,197 359,202 354,197 353,188" fill="#3c3c3c"/><polygon points="223,139 213,149 205,147 209,136 219,132" fill="#2e2e2e"/><polygon points="376,287 369,288 369,280 374,276 377,280" fill="#6e6e6e"/><polygon points="231,210 229,208 233,205 239,204 241,209 239,212 235,213" fill="#434343"/><polygon points="166,249 168,241 180,235 182,243" fill="#3b3b3b"/><polygon points="74,255 66,255 68,249 74,248 79,251" fill="#676767"/><polygon points="310,268 317,267 313,278 307,277" fill="#7a7a7a"/><polygon points="51,243 47,244 45,241 46,237 53,235 55,241" fill="#5f5f5f"/><polygon points="16,209 22,211 26,215 23,218 15,219 11,213" fill="#616161"/><polygon points="227,289 225,282 229,277 233,275 239,282 236,289" fill="#2f2f2f"/><polygon points="107,162 111,158 116,160 119,169 115,172 111,172 105,167" fill="#3e3e3e"/><polygon points="338,137 339,141 335,142 334,142 331,137 334,135 335,134" fill="#414141"/><polygon points="170,11 169,12 161,10 161,7 161,1 163,1 170,6" fill="#606060"/><polygon points="268,240 271,246 270,249 265,248 262,240 265,237" fill="#4a4a4a"/><polygon points="137,28 136,29 133,32 130,30 128,28 129,24 134,24" fill="#4c4c4c"/><polygon points="336,29 331,37 326,39 324,34 332,28" fill="#4c4c4c"/><polygon points="115,11 111,9 110,5 114,3 117,4 118,8" fill="#464646"/><polygon points="93,146 88,146 88,142 91,139 96,137 99,140 95,145" fill="#434343"/><polygon points="195,60 190,62 186,57 188,53 196,54" fill="#707070"/><polygon points="379,219 381,228 374,237 368,231 369,222" fill="#343434"/><polygon points="195,206 196,200 201,198 201,205 198,210" fill="#4e4e4e"/><polygon points="262,15 269,17 265,26 257,22" fill="#3e3e3e"/><polygon points="-2,182 3,180 5,182 1,185" fill="#747474"/><polygon points="296,102 298,95 305,98 309,104 305,107" fill="#3f3f3f"/><polygon points="161,244 161,248 156,249 155,248 154,244 158,242" fill="#6c6c6c"/><polygon points="283,264 280,273 278,273 274,272 274,267 278,262 283,259" fill="#6b6b6b"/><polygon points="131,137 129,140 125,142 122,137 122,135 125,131 131,134" fill="#454545"/><polygon points="346,125 346,121 352,121 354,123 354,127 352,129 348,127" fill="#646464"/><polygon points="273,234 273,235 271,239 268,239 265,239 267,234 270,232" fill="#6e6e6e"/><polygon points="14,106 20,109 19,114 11,117 5,115 7,109" fill="#3f3f3f"/><polygon points="301,131 295,135 293,132 295,128 300,126 303,128" fill="#3c3c3c"/><polygon points="310,265 315,267 313,276 306,277 302,275 301,269 304,266" fill="#353535"/><polygon points="260,67 263,70 263,76 258,76 256,71" fill="#313131"/><polygon points="245,16 245,11 251,12 250,18" fill="#7b7b7b"/><polygon points="313,160 318,154 324,158 318,166" fill="#4a4a4a"/><polygon points="142,-3 143,3 139,6 133,6 130,2 130,-6 135,-8" fill="#3c3c3c"/><polygon points="325,123 326,120 329,116 333,117 330,123" fill="#797979"/><polygon points="133,270 136,275 131,275 124,272 122,269 123,266 127,265" fill="#363636"/><polygon points="172,226 171,238 166,239 164,230" fill="#3c3c3c"/><polygon points="55,105 52,101 55,98 58,97 61,98 62,101 58,105" fill="#565656"/><polygon points="147,19 147,27 137,25 135,16 139,14" fill="#3e3e3e"/><polygon points="336,190 330,187 327,179 330,178 334,180 340,187 338,189" fill="#575757"/><polygon points="160,88 156,96 154,93 157,86" fill="#7a7a7a"/><polygon points="200,240 203,238 205,242 202,245 199,244" fill="#737373"/><polygon points="57,233 61,237 58,243 55,237" fill="#444444"/><polygon points="163,234 169,232 171,237 171,247 165,245" fill="#737373"/><polygon points="353,26 348,22 346,18 346,13 352,14 354,19" fill="#313131"/><polygon points="163,143 160,133 169,136 170,142" fill="#4e4e4e"/><polygon points="143,180 146,178 149,181 148,192 147,194 141,191 139,185" fill="#404040"/><polygon points="258,78 248,84 244,81 253,73" fill="#2a2a2a"/><polygon points="144,208 141,206 147,200 151,201 149,206" fill="#3d3d3d"/><polygon points="305,49 296,47 297,38 306,40 308,45" fill="#2c2c2c"/><polygon points="191,17 197,19 199,23 196,26 191,25 189,22 187,18" fill="#424242"/><polygon points="76,167 80,170 78,173 75,176 72,174 74,169" fill="#4a4a4a"/><polygon points="142,131 150,131 146,145 139,138" fill="#505050"/><polygon points="198,250 198,253 192,255 187,248 186,243 194,243" fill="#2c2c2c"/><polygon points="203,147 209,145 211,149 205,153 199,153 198,149" fill="#737373"/><polygon points="269,124 275,123 283,126 279,131 274,131 270,129" fill="#505050"/><polygon points="108,-4 111,3 109,5 106,6 101,2 102,-3 104,-7" fill="#5f5f5f"/><polygon points="250,112 245,113 244,105 247,105" fill="#2c2c2c"/><polygon points="84,28 83,23 87,15 93,17 93,23 88,30" fill="#505050"/><polygon points="261,152 260,156 255,154 254,150 259,149" fill="#626262"/><polygon points="61,146 55,150 52,145 58,138 61,140" fill="#303030"/><polygon points="176,164 179,168 178,173 172,173 170,167 173,164" fill="#4e4e4e"/><polygon points="91,217 81,219 78,213 92,210" fill="#505050"/><polygon points="80,56 84,70 79,71 73,62 74,52" fill="#444444"/><polygon points="208,133 202,140 197,140 194,135 201,130" fill="#353535"/><polygon points="187,282 193,283 191,289 186,287" fill="#555555"/><polygon points="57,220 52,215 54,209 58,208 61,213 61,218" fill="#323232"/><polygon points="57,269 56,265 58,257 62,259 62,270" fill="#343434"/><polygon points="91,105 91,98 96,99 99,106 97,109 94,110" fill="#404040"/><polygon points="75,155 64,155 60,151 64,148 74,147 76,148 78,153" fill="#6e6e6e"/><polygon points="1,156 -0,157 -4,154 -4,149 -1,147 2,150" fill="#404040"/><polygon points="77,225 82,218 86,216 91,226 86,229" fill="#2b2b2b"/><polygon points="368,161 362,160 362,154 368,154" fill="#3f3f3f"/><polygon points="56,204 56,195 61,192 66,200 65,209 61,211" fill="#474747"/><polygon points="116,30 112,29 111,24 112,20 116,19 118,24" fill="#646464"/><polygon points="173,142 177,137 183,141 187,146 182,150 175,146" fill="#434343"/><polygon points="117,278 118,281 117,285 110,283 105,275 108,271 114,274" fill="#6e6e6e"/><polygon points="368,-6 374,-2 377,4 372,5 368,-1" fill="#2b2b2b"/><polygon points="71,10 76,11 79,16 75,19 70,18 68,15" fill="#494949"/><polygon points="118,75 115,78 111,76 112,72 117,73" fill="#373737"/><polygon points="152,153 150,154 147,152 147,150 150,148 153,151" fill="#656565"/><polygon points="67,108 63,101 72,93 78,94 76,104" fill="#333333"/><polygon points="65,230 64,228 71,226 74,228 76,233 68,235" fill="#444444"/><polygon points="248,190 247,195 241,194 239,193 240,188 243,187" fill="#3d3d3d"/><polygon points="350,144 344,143 343,138 347,136 354,132 359,135 355,142" fill="#636363"/><polygon points="351,67 353,74 349,76 343,74 347,67" fill="#373737"/><polygon points="134,204 137,200 143,201 144,205 142,209 136,210" fill="#2e2e2e"/><polygon points="310,223 314,219 322,224 314,227" fill="#5a5a5a"/><polygon points="241,46 241,51 236,53 233,52 232,45 236,42" fill="#595959"/><polygon points="14,208 7,212 4,201 14,200" fill="#4d4d4d"/><polygon points="136,104 133,109 126,106 123,97 124,90 126,90 133,98" fill="#4c4c4c"/><polygon points="319,85 319,80 322,79 329,81 327,84 323,86" fill="#404040"/><polygon points="342,90 338,92 334,90 334,85 338,81 342,80 342,85" fill="#747474"/><polygon points="283,18 282,14 282,8 288,8 288,17" fill="#7b7b7b"/><polygon points="64,179 55,182 52,175 57,170" fill="#4c4c4c"/><polygon points="292,294 286,296 284,293 285,289 287,287 291,290" fill="#797979"/><polygon points="210,76 210,69 219,67 225,70 224,74 220,80 214,79" fill="#2f2f2f"/><polygon points="3,233 -0,227 6,227 11,228 11,234" fill="#5f5f5f"/><polygon points="71,200 68,194 73,192 80,197 78,201" fill="#4a4a4a"/><polygon points="121,283 119,281 118,276 120,272 123,272 123,278" fill="#5c5c5c"/><polygon points="295,177 285,181 281,174 291,173" fill="#6c6c6c"/><polygon points="107,198 98,201 95,198 104,191 109,193" fill="#3a3a3a"/><polygon points="213,38 211,31 218,27 222,30 218,37" fill="#4c4c4c"/><polygon points="140,110 134,114 126,110 130,104 137,106" fill="#6f6f6f"/><polygon points="369,104 366,109 359,104 361,98 366,98" fill="#7d7d7d"/><polygon points="165,197 158,198 160,188 169,189" fill="#777777"/><polygon points="210,121 205,117 206,113 210,115 212,120" fill="#2f2f2f"/><polygon points="77,224 75,232 67,227 72,221" fill="#646464"/><polygon points="227,135 231,137 234,140 232,146 228,146 225,143 225,140" fill="#414141"/><polygon points="260,59 263,61 261,65 259,67 255,66 255,62 256,60" fill="#363636"/><polygon points="353,263 348,260 350,256 357,257 359,261" fill="#787878"/><polygon points="230,166 230,170 229,171 225,168 223,164 224,163 226,162" fill="#797979"/><polygon points="123,138 126,133 136,146 134,150 127,147" fill="#2e2e2e"/><polygon points="173,11 179,9 181,15 178,21 174,20" fill="#3b3b3b"/><polygon points="290,27 293,23 298,27 297,32 295,32 292,31" fill="#474747"/><polygon points="224,183 226,179 230,178 236,181 234,183 227,186" fill="#383838"/><polygon points="127,272 126,278 116,276 117,270" fill="#414141"/><polygon points="301,239 306,229 310,232 310,238 306,247 300,245" fill="#747474"/><polygon points="72,240 75,237 78,240 79,245 76,246" fill="#787878"/><polygon points="159,77 155,78 152,74 155,70 159,71" fill="#666666"/><polygon points="81,283 78,277 84,272 89,275 86,284" fill="#2b2b2b"/><polygon points="69,48 65,49 63,49 66,38 71,35 73,40" fill="#4b4b4b"/><polygon points="357,177 363,177 362,182 356,184 351,184 353,180" fill="#555555"/><polygon points="331,156 330,160 328,162 323,160 324,158 325,155 329,153" fill="#686868"/><polygon points="49,40 43,48 39,49 35,44 37,41 45,37" fill="#3c3c3c"/><polygon points="212,240 218,235 221,251 215,254" fill="#3c3c3c"/><polygon points="320,215 323,213 328,214 330,220 327,224 321,223" fill="#595959"/><polygon points="149,67 152,62 156,61 162,65 162,69 154,70" fill="#2a2a2a"/><polygon points="105,252 104,248 107,240 110,238 115,242 113,251 109,256" fill="#343434"/><polygon points="296,261 301,256 309,263 301,265" fill="#2a2a2a"/><polygon points="71,218 74,214 82,211 85,213 83,219 78,221" fill="#4e4e4e"/><polygon points="162,21 163,14 169,15 173,19 173,25 168,25" fill="#7a7a7a"/><polygon points="191,218 186,222 183,218 188,212" fill="#3e3e3e"/><polygon points="268,262 270,269 263,273 258,269 260,261" fill="#454545"/><polygon points="326,233 335,232 342,235 336,241 328,242 324,242 323,236" fill="#363636"/><polygon points="260,74 261,69 268,68 275,76 269,79" fill="#6a6a6a"/><polygon points="266,118 277,118 279,124 275,126 264,122" fill="#595959"/><polygon points="119,162 125,154 131,160 125,167" fill="#323232"/><polygon points="248,62 254,64 253,68 247,68 244,66 242,62" fill="#424242"/><polygon points="360,86 355,84 356,79 361,75 366,79 368,82 365,85" fill="#343434"/><polygon points="282,223 282,217 283,215 290,217 291,221 288,225" fill="#707070"/><polygon points="85,114 94,121 92,128 84,120" fill="#4a4a4a"/><polygon points="142,156 136,157 138,147 145,144 148,147 149,152" fill="#585858"/><polygon points="216,124 217,130 212,135 206,130 210,124" fill="#383838"/><polygon points="148,55 146,60 137,60 129,57 130,54 137,52" fill="#4d4d4d"/><polygon points="7,225 8,221 11,222 13,226 14,230 11,232 9,230" fill="#3f3f3f"/><polygon points="349,40 354,43 352,46 348,46 343,44 345,41" fill="#464646"/><polygon points="33,53 35,57 30,61 22,60 21,57 27,52" fill="#404040"/><polygon points="228,165 222,164 217,160 218,157 223,158 227,161" fill="#434343"/><polygon points="93,22 97,28 97,31 92,30 86,24 89,21" fill="#6a6a6a"/><polygon points="173,143 177,145 175,159 168,157" fill="#323232"/><polygon points="186,175 191,172 195,177 195,183 188,186 184,181" fill="#434343"/><polygon points="195,115 196,120 192,122 188,119 191,115" fill="#2b2b2b"/><polygon points="38,59 36,69 30,72 27,66 33,57" fill="#2e2e2e"/><polygon points="372,256 370,248 373,247 379,251 381,259 377,261" fill="#474747"/><polygon points="249,225 247,223 246,218 249,214 251,214 252,219 252,225" fill="#424242"/><polygon points="63,176 71,176 73,181 68,184 62,183 59,179" fill="#323232"/><polygon points="306,84 314,91 314,94 305,90 303,85" fill="#2a2a2a"/><polygon points="248,167 243,168 240,165 244,159 250,161" fill="#727272"/><polygon points="163,19 161,16 163,11 167,13 173,16 173,18 168,20" fill="#474747"/><polygon points="26,176 27,179 23,181 19,180 18,177 21,175" fill="#666666"/><polygon points="319,259 324,263 325,272 323,278 318,278 316,270" fill="#2b2b2b"/><polygon points="40,235 46,230 52,237 46,242" fill="#2a2a2a"/><polygon points="345,146 350,145 350,149 345,153 343,152 343,148" fill="#666666"/><polygon points="211,134 211,140 208,140 204,136 207,131" fill="#7a7a7a"/><polygon points="95,252 98,248 105,253 106,257 100,257" fill="#2e2e2e"/><polygon points="193,116 195,122 192,124 186,117 187,111" fill="#393939"/><polygon points="363,181 361,186 358,188 356,186 357,182 359,180" fill="#434343"/><polygon points="115,130 113,134 107,137 104,136 101,132 107,124 110,124" fill="#7a7a7a"/><polygon points="59,129 65,122 70,128 64,136" fill="#3f3f3f"/><polygon points="106,29 105,32 103,30 100,27 100,22 102,22 107,25" fill="#585858"/><polygon points="201,270 204,276 199,284 194,280 194,276" fill="#4d4d4d"/><polygon points="32,152 38,158 30,162 25,158" fill="#676767"/><polygon points="6,161 2,163 -1,161 -3,155 1,151 5,152 8,159" fill="#4c4c4c"/><polygon points="81,250 86,250 91,251 90,255 88,256 83,257 78,254" fill="#6a6a6a"/><polygon points="104,85 100,86 101,83 103,79 105,79 107,82" fill="#707070"/><polygon points="303,230 294,230 292,220 295,214 302,222" fill="#464646"/><polygon points="164,125 154,125 156,117 162,115 167,119" fill="#737373"/><polygon points="259,178 262,175 267,178 269,185 269,188 262,185" fill="#3b3b3b"/><polygon points="114,174 114,178 114,182 109,183 105,179 105,175 107,172" fill="#494949"/><polygon points="275,98 276,102 277,108 274,112 270,105 271,102" fill="#707070"/><polygon points="221,69 221,64 229,59 234,60 234,67 232,70 222,72" fill="#747474"/><polygon points="226,227 218,231 212,227 213,222 223,222" fill="#616161"/><polygon points="207,164 207,161 210,157 213,157 214,160 211,166" fill="#494949"/><polygon points="142,179 142,174 146,173 150,177 148,180" fill="#313131"/><polygon points="84,147 89,153 83,157 80,150" fill="#363636"/><polygon points="363,263 360,259 359,255 368,254 370,257 368,262" fill="#6c6c6c"/><polygon points="278,246 281,240 293,248 293,254 280,252" fill="#4b4b4b"/><polygon points="357,18 356,20 352,21 350,13 353,11 357,12" fill="#2a2a2a"/><polygon points="91,292 93,287 101,287 105,291 103,297 95,296" fill="#464646"/><polygon points="250,61 246,60 245,50 248,45 251,44 256,48 256,58" fill="#363636"/><polygon points="95,16 92,12 98,7 101,8 102,14" fill="#2e2e2e"/><polygon points="30,37 33,45 28,47 24,41" fill="#797979"/><polygon points="189,82 184,81 183,74 191,66 195,71" fill="#4c4c4c"/><polygon points="51,130 47,130 45,128 47,125 53,123 54,126" fill="#2e2e2e"/><polygon points="52,220 55,214 61,221 57,225" fill="#4e4e4e"/><polygon points="177,182 172,195 165,195 171,179" fill="#454545"/><polygon points="255,33 246,29 251,24 260,21 268,24 266,29" fill="#7c7c7c"/><polygon points="250,234 248,232 246,227 250,225 254,225 255,231" fill="#5f5f5f"/><polygon points="5,146 1,142 3,139 10,140 13,145 14,148 8,147" fill="#3e3e3e"/><polygon points="203,282 205,286 200,290 196,287 199,282" fill="#575757"/><polygon points="233,57 238,58 237,63 231,64 229,60" fill="#464646"/><polygon points="161,74 168,67 172,69 172,76 165,78" fill="#3d3d3d"/><polygon points="189,174 192,168 200,169 202,176 195,176" fill="#2d2d2d"/><polygon points="101,175 96,181 88,182 88,172 98,170" fill="#4f4f4f"/><polygon points="224,261 229,256 234,258 239,263 232,267 227,268" fill="#373737"/><polygon points="123,287 127,285 130,289 125,291" fill="#383838"/><polygon points="365,155 363,152 370,147 373,150" fill="#3b3b3b"/><polygon points="210,33 213,38 212,42 209,44 205,42 204,37 206,32" fill="#656565"/><polygon points="186,176 185,180 178,183 176,180 175,178 182,175" fill="#424242"/><polygon points="278,164 276,163 275,159 279,156 283,158 283,162" fill="#4c4c4c"/><polygon points="6,219 4,221 1,218 -0,215 2,211 4,211 6,215" fill="#2b2b2b"/><polygon points="305,153 310,149 315,153 309,155" fill="#5a5a5a"/><polygon points="199,110 195,109 193,104 194,98 199,95 203,97 204,102" fill="#373737"/><polygon points="99,271 99,281 93,284 90,276" fill="#5c5c5c"/><polygon points="223,226 226,230 222,236 219,233 219,226" fill="#3a3a3a"/><polygon points="263,269 259,260 266,257 270,265 271,272" fill="#474747"/><polygon points="243,240 245,233 253,239 255,246 251,250 244,247" fill="#2b2b2b"/><polygon points="213,103 203,105 197,103 201,99 205,98 212,100" fill="#404040"/><polygon points="56,63 60,62 67,62 71,67 72,74 68,74 61,72" fill="#656565"/><polygon points="293,61 288,63 286,61 284,57 289,53 292,54" fill="#5c5c5c"/><polygon points="244,267 231,268 238,257 249,253 250,260" fill="#333333"/><polygon points="342,89 347,95 344,100 337,97 338,89" fill="#505050"/><polygon points="35,-8 44,-2 41,1 36,2 28,1 26,-3 29,-6" fill="#353535"/><polygon points="120,118 112,117 110,110 119,110" fill="#5a5a5a"/><polygon points="164,117 160,116 157,111 160,108 164,113" fill="#3f3f3f"/><polygon points="337,23 343,30 344,36 340,40 335,36 332,30 334,26" fill="#2e2e2e"/><polygon points="99,246 100,251 97,253 93,249 93,244" fill="#404040"/><polygon points="43,254 45,258 41,261 35,259 36,252" fill="#2b2b2b"/><polygon points="291,151 300,138 304,142 300,151 294,155" fill="#4a4a4a"/><polygon points="236,138 237,135 246,137 250,141 241,142" fill="#333333"/><polygon points="190,10 192,16 185,20 183,11" fill="#2a2a2a"/><polygon points="232,143 240,150 237,157 228,150" fill="#4d4d4d"/><polygon points="70,228 65,234 59,236 58,231 65,222 71,221" fill="#757575"/><polygon points="226,242 223,243 218,240 221,237 224,238" fill="#6f6f6f"/><polygon points="230,17 232,14 236,15 240,21 235,21" fill="#717171"/><polygon points="119,210 123,222 117,222 113,211" fill="#3c3c3c"/><polygon points="256,118 252,107 258,104 264,109 264,117" fill="#4a4a4a"/><polygon points="232,10 228,11 223,3 222,-3 227,-2 234,7" fill="#2d2d2d"/><polygon points="125,103 121,108 115,102 115,93 121,94" fill="#4e4e4e"/><polygon points="48,84 43,81 50,74 58,75 57,80" fill="#2d2d2d"/><polygon points="79,104 78,100 80,96 84,94 85,103 83,105" fill="#333333"/><polygon points="101,189 99,186 100,182 103,184 105,188 105,191" fill="#636363"/><polygon points="286,150 284,145 288,143 291,151" fill="#767676"/><polygon points="15,148 17,145 23,145 25,149 22,154 19,154" fill="#3f3f3f"/><polygon points="3,131 7,134 6,137 1,139 -2,135" fill="#5b5b5b"/><polygon points="67,143 70,141 76,141 76,145 73,147 69,147" fill="#464646"/><polygon points="275,134 272,136 267,133 263,128 266,126 270,127 273,131" fill="#363636"/><polygon points="371,65 369,66 366,60 366,54 369,48 374,53 374,58" fill="#3e3e3e"/><polygon points="110,283 115,280 118,280 119,286 116,292 114,294 110,293" fill="#353535"/><polygon points="8,26 14,25 18,26 14,31 9,29" fill="#737373"/><polygon points="103,90 107,92 107,95 104,99 100,98 100,94" fill="#363636"/><polygon points="151,290 147,287 147,280 150,275 156,280 154,286" fill="#646464"/><polygon points="59,174 61,167 65,168 67,173 66,177 61,179" fill="#7d7d7d"/><polygon points="83,58 86,61 85,66 81,66 79,63 77,60" fill="#373737"/><polygon points="314,175 310,165 312,162 317,165 320,173 318,178" fill="#343434"/><polygon points="328,95 331,99 328,110 323,108 324,97" fill="#333333"/><polygon points="5,300 -1,296 -1,289 -2,283 4,286 7,294" fill="#676767"/><polygon points="307,60 304,62 302,62 302,55 305,51 307,51 309,54" fill="#484848"/><polygon points="312,139 311,140 307,140 305,137 306,134 311,134 312,136" fill="#5a5a5a"/><polygon points="353,197 347,192 345,187 350,187 357,192 357,198" fill="#7c7c7c"/><polygon points="277,247 280,245 287,246 289,253 284,260 279,257" fill="#393939"/><polygon points="283,131 284,128 289,123 292,123 294,128 291,130 287,131" fill="#3d3d3d"/><polygon points="333,46 331,49 329,46 328,39 331,34 333,37 335,42" fill="#2a2a2a"/><polygon points="122,177 124,184 118,183 114,176" fill="#666666"/><polygon points="228,36 229,31 235,30 235,34" fill="#696969"/><polygon points="230,203 228,194 231,190 242,185 242,191 235,201" fill="#2b2b2b"/><polygon points="206,39 210,38 215,41 216,45 212,46 208,45 205,41" fill="#6a6a6a"/><polygon points="255,213 263,213 267,219 265,222 256,219" fill="#3b3b3b"/><polygon points="206,231 211,230 212,234 208,239 201,241 200,235" fill="#4e4e4e"/><polygon points="199,161 197,164 192,164 192,160 196,157" fill="#404040"/><polygon points="128,10 131,12 130,17 127,20 121,17 122,12" fill="#323232"/><polygon points="323,232 319,232 318,228 319,225 324,224 326,227" fill="#646464"/><polygon points="200,206 204,209 205,216 202,216 196,213 198,208" fill="#3b3b3b"/><polygon points="134,153 137,153 139,155 134,160 130,159 131,156" fill="#4f4f4f"/><polygon points="36,214 28,214 24,210 27,205 34,204 36,210" fill="#2f2f2f"/><polygon points="158,225 150,224 147,213 158,218" fill="#4b4b4b"/><polygon points="325,37 320,36 322,30 326,30 329,32" fill="#777777"/><polygon points="20,282 20,285 12,290 10,287 11,281 16,278" fill="#4c4c4c"/><polygon points="150,246 157,251 155,260 147,254" fill="#2f2f2f"/><polygon points="369,29 371,21 375,18 381,21 380,27 374,32" fill="#313131"/><polygon points="18,198 15,200 11,195 9,189 12,188 16,187 20,193" fill="#3c3c3c"/><polygon points="258,182 263,183 263,187 261,190 257,190 255,186" fill="#3b3b3b"/><polygon points="67,259 69,258 77,262 75,267 69,269 64,267 62,263" fill="#3e3e3e"/><polygon points="206,93 210,87 215,90 218,101 213,104" fill="#333333"/><polygon points="54,159 60,159 61,166 51,167" fill="#6a6a6a"/><polygon points="64,139 58,139 56,136 59,133 65,132 68,134 68,138" fill="#4b4b4b"/><polygon points="363,10 358,11 357,4 364,-5 369,-1" fill="#797979"/><polygon points="351,164 354,168 349,176 340,174 342,167" fill="#4f4f4f"/><polygon points="26,246 30,241 36,242 31,248" fill="#404040"/><polygon points="189,204 193,202 193,207 186,211 185,208" fill="#414141"/><polygon points="290,167 291,169 292,172 289,174 281,172 281,169 282,167" fill="#696969"/><polygon points="7,254 4,257 -0,253 1,250 5,249" fill="#414141"/><polygon points="260,54 254,49 258,43 265,41 269,43 265,51" fill="#3a3a3a"/><polygon points="221,272 218,277 212,278 214,270" fill="#3f3f3f"/><polygon points="159,34 157,30 165,25 173,28 170,32" fill="#494949"/><polygon points="266,249 266,253 265,255 261,257 258,255 259,252 261,249" fill="#383838"/><polygon points="227,249 223,251 220,248 221,243 227,243" fill="#313131"/><polygon points="294,217 292,215 291,212 294,211 299,214 300,217 298,219" fill="#464646"/><polygon points="296,52 299,58 295,59 290,54 293,50" fill="#4e4e4e"/><polygon points="368,87 375,84 382,85 376,92 371,91" fill="#575757"/><polygon points="61,91 66,85 71,88 68,96 64,95" fill="#3f3f3f"/><polygon points="321,111 322,118 317,121 312,119 313,113 315,111" fill="#656565"/><polygon points="353,29 361,30 365,35 362,41 358,42 353,37" fill="#454545"/><polygon points="296,169 302,168 303,175 295,181 290,178" fill="#393939"/><polygon points="316,282 311,280 311,271 316,264 320,270" fill="#626262"/><polygon points="157,276 152,274 150,268 152,263 156,261 159,267" fill="#363636"/><polygon points="249,269 251,272 247,276 241,278 242,273" fill="#777777"/><polygon points="231,121 228,122 220,117 219,113 223,113 228,116" fill="#444444"/><polygon points="258,19 257,14 261,12 268,14 268,20 263,22" fill="#2a2a2a"/><polygon points="251,78 256,76 261,82 258,87 253,85 252,83" fill="#2b2b2b"/><polygon points="183,224 181,230 173,226 170,217 172,211 179,215" fill="#4d4d4d"/><polygon points="245,46 239,51 234,47 237,42 243,42" fill="#3b3b3b"/><polygon points="8,53 12,59 9,61 4,59 4,55" fill="#2e2e2e"/><polygon points="159,163 158,167 155,168 152,165 154,160" fill="#3c3c3c"/><polygon points="263,204 270,206 269,211 262,211 259,206" fill="#6c6c6c"/><polygon points="105,92 98,91 93,80 100,82" fill="#444444"/><polygon points="221,193 214,194 213,188 220,186" fill="#2e2e2e"/><polygon points="201,279 202,271 212,279 208,283" fill="#616161"/><polygon points="68,73 69,68 77,77 80,82 76,87 73,85 68,80" fill="#494949"/><polygon points="91,66 95,58 105,57 103,64" fill="#363636"/><polygon points="323,252 334,251 343,259 328,261" fill="#4d4d4d"/><polygon points="116,211 108,212 107,202 116,200" fill="#505050"/><polygon points="3,101 10,109 10,113 0,112 -5,106 -3,102" fill="#2c2c2c"/><polygon points="134,3 140,3 140,9 135,11 132,7" fill="#383838"/><polygon points="226,220 235,219 237,222 237,228 230,232 224,225" fill="#4a4a4a"/><polygon points="301,237 294,236 293,231 298,226 304,230" fill="#7b7b7b"/><polygon points="281,29 279,35 276,36 273,34 277,28" fill="#595959"/><polygon points="92,133 86,130 85,125 93,127 96,132" fill="#505050"/><polygon points="152,102 152,97 158,96 160,102 157,105" fill="#404040"/><polygon points="229,71 230,77 227,80 222,77 223,74" fill="#4d4d4d"/><polygon points="359,221 361,227 357,233 350,233 348,229 352,224" fill="#2f2f2f"/><polygon points="37,273 36,268 40,265 44,266 49,270 47,274 43,275" fill="#7c7c7c"/><polygon points="120,76 117,71 121,66 132,66 135,69 132,74" fill="#393939"/><polygon points="231,43 227,38 228,34 234,33 236,42" fill="#404040"/><polygon points="236,237 225,235 225,230 229,228 238,229 241,233" fill="#2e2e2e"/><polygon points="105,263 104,261 104,259 106,257 108,258 110,261 109,264" fill="#717171"/><polygon points="243,208 248,219 241,226 237,213" fill="#2f2f2f"/><polygon points="329,63 331,69 323,69 322,65" fill="#585858"/><polygon points="139,38 145,38 151,41 145,44 140,42" fill="#2e2e2e"/><polygon points="182,110 182,108 185,106 187,108 188,111 186,113" fill="#656565"/><polygon points="-5,96 -3,94 2,94 5,98 4,101 1,102 -3,99" fill="#6f6f6f"/><polygon points="210,205 211,198 218,198 223,204 224,211 215,211" fill="#4e4e4e"/><polygon points="139,178 135,182 132,180 132,173 137,175" fill="#767676"/><polygon points="282,203 277,205 273,203 274,196 281,195 283,199" fill="#434343"/><polygon points="336,199 336,201 332,204 329,205 328,201 330,198 334,198" fill="#4d4d4d"/><polygon points="284,98 284,91 287,87 291,85 291,91 289,97 285,100" fill="#393939"/><polygon points="228,283 231,283 237,290 235,292 228,287" fill="#474747"/><polygon points="38,258 35,257 33,247 37,245 40,250" fill="#777777"/><polygon points="105,267 109,266 114,270 112,273 109,273 105,269" fill="#5f5f5f"/><polygon points="345,176 350,176 357,183 353,186 345,182" fill="#4c4c4c"/><polygon points="176,235 176,228 182,230 185,234 181,237" fill="#414141"/><polygon points="352,241 357,239 365,244 359,247" fill="#717171"/><polygon points="287,35 290,32 294,32 298,36 298,41 293,44 289,41" fill="#5c5c5c"/><polygon points="311,279 315,276 319,283 318,287 316,291 312,286" fill="#3e3e3e"/><polygon points="90,70 86,66 87,62 93,63 95,66" fill="#2e2e2e"/><polygon points="300,69 306,70 305,75 299,74" fill="#6f6f6f"/><polygon points="116,57 112,58 110,56 112,52 116,51 118,51 118,55" fill="#343434"/><polygon points="297,271 293,265 293,259 297,258 300,261 301,267" fill="#555555"/><polygon points="90,96 91,89 94,87 100,89 101,95 98,99 92,98" fill="#3b3b3b"/><polygon points="208,64 215,75 209,78 203,77 194,64 200,61" fill="#3c3c3c"/><polygon points="171,130 168,135 164,130 165,124 168,122" fill="#777777"/><polygon points="36,270 39,270 45,275 43,280 42,283 34,280 33,276" fill="#757575"/><polygon points="180,160 180,154 187,151 190,156 189,160 185,163" fill="#464646"/><polygon points="126,233 122,240 114,244 109,241 113,233 121,227" fill="#2c2c2c"/><polygon points="15,11 17,16 6,19 7,13" fill="#616161"/><polygon points="278,75 279,71 283,71 285,75 283,77" fill="#7d7d7d"/><polygon points="270,17 275,17 277,23 273,30 268,29 268,22" fill="#3f3f3f"/><polygon points="196,92 200,94 196,100 185,103 183,103 183,95 187,93" fill="#585858"/><polygon points="83,5 94,9 96,14 90,16 78,13 77,8" fill="#3b3b3b"/><polygon points="225,200 220,197 218,192 218,187 222,187 228,194 228,199" fill="#404040"/><polygon points="207,168 212,169 214,176 211,180 207,177 205,173" fill="#5e5e5e"/><polygon points="179,168 192,169 191,176 176,174" fill="#414141"/><polygon points="134,74 134,77 130,77 126,75 126,71 130,72" fill="#747474"/><polygon points="330,196 336,196 339,200 335,203 329,201 328,198" fill="#3f3f3f"/><polygon points="325,130 327,132 328,135 324,135 321,134 321,131" fill="#727272"/><polygon points="97,291 95,284 103,281 108,289 106,292" fill="#7b7b7b"/><polygon points="274,51 276,47 285,54 287,61 283,66 276,60" fill="#434343"/><polygon points="135,91 136,84 141,83 145,87 145,94 137,94" fill="#2d2d2d"/><polygon points="137,252 139,249 142,248 144,250 146,253 144,256 140,256" fill="#2d2d2d"/><polygon points="219,279 223,277 227,288 224,295 218,292 216,289" fill="#313131"/><polygon points="125,194 130,193 134,196 127,198" fill="#666666"/><polygon points="302,99 300,92 302,85 309,82 311,90 307,98" fill="#424242"/><polygon points="277,9 272,11 269,7 273,4 277,5" fill="#696969"/><polygon points="357,279 360,284 355,288 351,287 350,284 354,280" fill="#393939"/><polygon points="168,101 160,98 159,94 161,92 170,93 174,97" fill="#353535"/><polygon points="82,119 85,113 90,110 92,112 91,118 89,121 83,122" fill="#454545"/><polygon points="276,11 273,1 276,-3 281,-4 283,3 281,9" fill="#4d4d4d"/><polygon points="335,288 330,289 329,287 330,283 332,282 336,284 336,286" fill="#373737"/><polygon points="64,57 60,56 60,50 66,46 71,48 74,52 72,55" fill="#2b2b2b"/><polygon points="354,250 349,246 350,242 355,239 357,240 358,248" fill="#606060"/><polygon points="6,119 7,123 8,126 4,129 1,129 -2,126 -0,121" fill="#323232"/><polygon points="260,290 259,280 268,277 272,281 270,290" fill="#323232"/><polygon points="241,14 241,19 240,22 234,24 232,20 235,16 240,13" fill="#353535"/><polygon points="-2,259 4,251 10,255 9,264 3,264" fill="#434343"/><polygon points="291,258 295,261 299,267 297,270 293,270 290,264" fill="#757575"/><polygon points="333,91 335,94 331,97 327,96 322,92 325,90 330,90" fill="#2b2b2b"/><polygon points="271,12 274,7 281,9 282,13 282,20 274,18" fill="#4b4b4b"/><polygon points="17,104 17,107 12,114 7,114 4,106 10,104" fill="#555555"/><polygon points="284,10 285,22 277,23 276,14" fill="#3b3b3b"/><polygon points="236,0 241,-5 248,-4 250,4 246,6 238,6" fill="#373737"/><polygon points="40,56 41,51 46,55 47,59 44,61" fill="#616161"/><polygon points="321,10 318,10 318,8 320,4 323,5 325,6 325,9" fill="#757575"/><polygon points="140,94 140,97 135,97 131,95 133,92" fill="#737373"/><polygon points="76,192 71,196 69,194 74,186 76,186" fill="#494949"/><polygon points="299,201 296,202 294,200 291,194 295,192 299,194" fill="#7a7a7a"/><polygon points="194,63 199,56 206,54 209,57 207,62 201,67" fill="#5f5f5f"/><polygon points="202,266 200,274 193,271 197,263" fill="#2f2f2f"/><polygon points="251,91 248,85 253,80 263,76 263,81 258,88" fill="#434343"/><polygon points="347,4 346,-1 349,-4 354,-4 354,1 353,4 350,6" fill="#5f5f5f"/><polygon points="214,15 218,18 218,22 214,25 208,23 208,16" fill="#6b6b6b"/><polygon points="52,147 46,144 47,137 53,134 59,137 58,145" fill="#313131"/><polygon points="235,67 232,64 236,55 241,56 242,65" fill="#2c2c2c"/><polygon points="237,72 243,72 244,78 242,79 238,79 236,75" fill="#4c4c4c"/><polygon points="134,40 127,44 127,36 134,31" fill="#797979"/><polygon points="279,21 282,19 292,22 292,28 284,28" fill="#575757"/><polygon points="252,26 249,19 252,10 258,13 259,19" fill="#4c4c4c"/><polygon points="96,191 91,196 85,193 88,183 94,183" fill="#7a7a7a"/><polygon points="164,286 167,283 176,286 178,290 176,293 165,291" fill="#585858"/><polygon points="159,228 161,223 171,221 171,226" fill="#676767"/><polygon points="261,91 268,90 267,100 258,102" fill="#404040"/><polygon points="77,265 73,261 75,255 78,255 84,259 80,265" fill="#555555"/><polygon points="172,279 168,271 170,269 177,274 178,280" fill="#616161"/><polygon points="341,67 346,68 347,72 344,75 341,74 340,69" fill="#434343"/><polygon points="249,207 251,203 254,201 259,206 258,210 254,211" fill="#393939"/><polygon points="49,151 49,156 47,160 44,160 38,155 39,151 41,149" fill="#434343"/><polygon points="337,284 337,277 339,274 345,279 347,283 345,290 342,288" fill="#6c6c6c"/><polygon points="210,111 219,106 224,108 224,115 215,116" fill="#373737"/><polygon points="327,47 323,51 319,48 320,41 324,42" fill="#313131"/><polygon points="60,269 63,273 64,278 63,279 60,280 58,276 59,271" fill="#5d5d5d"/><polygon points="23,137 21,143 15,144 13,141 15,136 20,135" fill="#3a3a3a"/><polygon points="366,147 368,138 375,135 372,149" fill="#313131"/><polygon points="215,130 212,132 201,127 198,119 205,121" fill="#303030"/><polygon points="325,233 326,238 322,242 315,243 315,238 314,235 321,230" fill="#3a3a3a"/><polygon points="81,188 90,189 83,196 77,195" fill="#404040"/><polygon points="69,249 64,248 61,244 64,240 68,241 70,244" fill="#353535"/><polygon points="297,162 298,165 295,168 291,167 290,163 295,159" fill="#313131"/><polygon points="32,231 39,237 33,238 27,233" fill="#353535"/><polygon points="39,26 36,33 30,34 28,32 31,26" fill="#484848"/><polygon points="305,185 299,180 296,175 302,172 309,175 312,181 309,184" fill="#464646"/><polygon points="76,39 68,38 66,32 69,27 75,24 77,32" fill="#4c4c4c"/><polygon points="234,189 229,188 226,180 231,177 235,183" fill="#383838"/><polygon points="97,235 89,237 84,233 83,228 92,226 100,229" fill="#3c3c3c"/><polygon points="342,201 343,202 344,204 342,207 339,206 339,204 339,202" fill="#7a7a7a"/><polygon points="156,123 153,126 148,124 147,120 149,117 154,117 157,118" fill="#595959"/><polygon points="157,44 153,40 154,28 158,24 161,31 160,42" fill="#414141"/><polygon points="63,290 55,289 54,285 57,281 64,279 68,284" fill="#5d5d5d"/><polygon points="141,227 147,232 142,236 137,231" fill="#383838"/><polygon points="162,146 156,154 150,155 148,148 158,142" fill="#4c4c4c"/><polygon points="341,277 344,287 332,288 332,276" fill="#3b3b3b"/><polygon points="173,167 171,176 162,176 163,165" fill="#323232"/><polygon points="114,167 107,170 100,167 104,163" fill="#474747"/><polygon points="12,20 10,15 13,14 18,17" fill="#454545"/><polygon points="326,24 323,29 316,29 312,26 318,21 321,20" fill="#5a5a5a"/><polygon points="10,139 1,143 -7,141 -6,134 6,133" fill="#484848"/><polygon points="108,190 108,185 113,184 116,186 113,192" fill="#3f3f3f"/><polygon points="269,58 273,57 274,61 273,66 268,69 265,68 265,62" fill="#7b7b7b"/><polygon points="133,20 138,18 140,21 137,26 132,27 131,24" fill="#4c4c4c"/><polygon points="102,61 96,58 97,51 103,51 109,58" fill="#373737"/><polygon points="187,60 190,58 197,64 202,71 195,74 192,75 186,67" fill="#3a3a3a"/><polygon points="269,-5 272,-0 271,7 262,13 259,10 259,6 264,-1" fill="#4c4c4c"/><polygon points="321,31 317,34 311,35 310,28 314,26 318,27" fill="#4f4f4f"/><polygon points="272,103 269,102 267,97 268,91 270,89 273,92 275,98" fill="#343434"/><polygon points="18,281 17,275 21,272 23,274 27,277 23,281" fill="#404040"/><polygon points="201,85 204,81 208,81 208,83 205,88 203,88" fill="#434343"/><polygon points="278,159 274,150 278,144 284,153 284,161" fill="#3a3a3a"/><polygon points="285,229 288,223 292,225 292,231 289,234" fill="#7d7d7d"/><polygon points="106,204 104,196 115,193 118,205" fill="#2a2a2a"/><polygon points="26,126 26,124 31,121 34,125 33,129 30,132 28,130" fill="#2b2b2b"/><polygon points="256,236 263,237 265,243 259,248 252,245" fill="#4f4f4f"/><polygon points="306,15 309,17 308,21 306,22 301,16 299,13" fill="#636363"/><polygon points="105,229 101,233 98,231 97,228 102,223 106,224" fill="#434343"/><polygon points="28,80 28,73 36,70 39,76 35,80" fill="#2b2b2b"/><polygon points="38,185 39,182 43,180 48,186 49,192 45,195 41,191" fill="#696969"/><polygon points="350,80 357,86 351,91 342,90 344,82" fill="#3c3c3c"/><polygon points="371,102 371,97 374,97 378,105 375,107" fill="#474747"/><polygon points="-0,25 2,32 -2,36 -5,29" fill="#626262"/><polygon points="-1,268 2,265 7,268 8,271 5,275 -1,274" fill="#2b2b2b"/><polygon points="32,174 39,173 41,175 40,180 36,182 32,179" fill="#2a2a2a"/><polygon points="29,139 23,139 19,135 24,131 30,134" fill="#3c3c3c"/><polygon points="353,175 352,168 362,166 360,173" fill="#4a4a4a"/><polygon points="175,219 175,214 180,209 182,209 183,216 182,220 178,221" fill="#747474"/><polygon points="30,280 32,282 26,291 23,292 23,288 26,282" fill="#3c3c3c"/><polygon points="56,181 53,183 48,182 45,174 49,170 52,169 56,173" fill="#4c4c4c"/><polygon points="245,61 249,56 256,59 261,66 254,67" fill="#464646"/><polygon points="324,197 327,199 327,207 322,208 319,202" fill="#7a7a7a"/><polygon points="-2,197 -1,195 -1,193 3,192 5,193 5,197 2,198" fill="#373737"/><polygon points="143,99 137,94 141,88 151,91 153,98 151,102" fill="#313131"/><polygon points="270,125 262,125 257,119 257,112 262,110 266,113 271,121" fill="#484848"/><polygon points="112,13 118,19 101,22 98,12" fill="#3b3b3b"/><polygon points="226,56 220,46 221,37 228,41 232,52" fill="#2a2a2a"/><polygon points="163,154 157,149 161,145 170,145 171,153" fill="#757575"/><polygon points="318,114 320,118 315,123 312,124 308,123 311,115 315,114" fill="#4e4e4e"/><polygon points="84,268 81,264 87,259 91,259 94,264 89,269" fill="#4a4a4a"/><polygon points="238,62 247,68 247,72 244,75 238,75 233,70 236,64" fill="#3a3a3a"/><polygon points="236,18 234,10 242,5 246,10 243,21" fill="#424242"/><polygon points="320,36 320,40 318,42 312,43 308,41 312,37 315,36" fill="#3e3e3e"/><polygon points="379,244 377,248 373,250 371,246 372,239 376,238" fill="#3f3f3f"/><polygon points="314,257 321,265 316,270 311,266 310,257" fill="#707070"/><polygon points="76,161 76,165 71,164 69,162 70,158 73,158" fill="#6c6c6c"/><polygon points="71,57 68,54 69,47 75,40 79,40 80,48 75,54" fill="#5a5a5a"/><polygon points="155,188 156,184 167,182 171,185 161,190" fill="#2e2e2e"/><polygon points="32,168 37,164 40,167 37,172 32,172 30,171" fill="#4f4f4f"/><polygon points="375,252 381,259 373,262 366,254" fill="#454545"/><polygon points="332,297 324,295 322,289 325,287 333,291 335,295" fill="#4d4d4d"/><polygon points="205,84 199,82 196,73 201,73" fill="#555555"/><polygon points="29,88 17,91 10,85 14,79 26,82" fill="#4b4b4b"/><polygon points="137,168 132,172 126,172 126,164 130,162" fill="#797979"/><polygon points="105,153 113,154 115,159 113,160 109,160 103,155" fill="#3e3e3e"/><polygon points="298,143 298,134 304,134 305,142" fill="#363636"/><polygon points="218,51 212,49 215,39 222,37 224,40 224,48" fill="#484848"/><polygon points="289,239 290,242 287,246 281,242 283,238" fill="#797979"/><polygon points="177,197 179,200 177,202 174,202 172,197 174,197" fill="#555555"/><polygon points="281,275 288,288 281,290 277,282" fill="#464646"/><polygon points="5,53 7,47 14,48 16,54 9,56" fill="#757575"/><polygon points="327,77 330,74 333,78 332,82 328,83 326,80" fill="#3e3e3e"/><polygon points="118,58 116,56 119,54 122,54 125,56 126,58 122,61" fill="#5b5b5b"/><polygon points="368,130 366,131 361,132 359,130 361,127 363,127 368,127" fill="#636363"/><polygon points="164,118 169,113 173,117 171,124 166,123" fill="#4f4f4f"/><polygon points="81,-4 90,-6 89,-1 80,4" fill="#353535"/><polygon points="245,193 243,196 240,196 237,193 240,190 244,189" fill="#777777"/><polygon points="236,168 241,164 245,169 240,178 236,173" fill="#727272"/><polygon points="34,179 32,184 26,184 25,181 26,176 30,174" fill="#393939"/><polygon points="309,199 313,194 318,195 319,199 313,203" fill="#2e2e2e"/><polygon points="378,188 376,193 371,192 370,187 373,185" fill="#2a2a2a"/><polygon points="107,118 97,125 88,119 98,113" fill="#474747"/><polygon points="306,215 311,218 306,224 301,223 300,218" fill="#3c3c3c"/><polygon points="329,170 324,175 315,171 320,165" fill="#3d3d3d"/><polygon points="366,29 362,30 360,22 364,22" fill="#696969"/><polygon points="305,214 299,212 298,210 302,208 308,211" fill="#777777"/><polygon points="251,216 254,209 260,214 262,222 256,230 251,227" fill="#343434"/><polygon points="357,137 358,134 363,136 364,139 360,142 356,140" fill="#4d4d4d"/><polygon points="75,97 77,91 81,90 80,96" fill="#5e5e5e"/><polygon points="136,149 141,152 139,154 133,153 131,151 132,149" fill="#636363"/><polygon points="155,239 154,241 150,244 147,243 150,238 153,236" fill="#787878"/><polygon points="299,9 305,8 307,14 308,18 299,19 298,13" fill="#6a6a6a"/><polygon points="34,232 25,233 20,227 22,222 29,223 32,225" fill="#3f3f3f"/><polygon points="293,281 286,281 284,279 283,273 287,272 292,273 297,278" fill="#6f6f6f"/><polygon points="110,118 117,118 119,121 113,126 106,127 104,123" fill="#707070"/><polygon points="81,131 88,138 80,140 72,133" fill="#343434"/><polygon points="362,128 354,128 354,123 359,119 365,124" fill="#5e5e5e"/><polygon points="343,269 342,271 339,272 337,269 338,265 342,263 344,266" fill="#2d2d2d"/><polygon points="193,86 196,79 202,89 199,97" fill="#7b7b7b"/><polygon points="12,245 17,247 17,251 11,252 9,250" fill="#5c5c5c"/><polygon points="332,13 337,11 342,14 339,18 334,18" fill="#454545"/><polygon points="136,190 140,186 142,191 140,195 135,196" fill="#404040"/><polygon points="306,105 299,105 293,102 292,97 298,97 305,102" fill="#464646"/><polygon points="191,259 197,257 199,263 197,269 191,271 189,266" fill="#3f3f3f"/><polygon points="76,25 72,25 69,21 72,18 77,20" fill="#3c3c3c"/><polygon points="210,56 218,60 216,63 208,61 205,56" fill="#393939"/><polygon points="53,116 51,114 51,110 53,108 56,110 58,111 56,115" fill="#505050"/><polygon points="317,210 309,210 307,208 306,204 314,199 318,201 322,202" fill="#454545"/><polygon points="96,207 88,205 91,197 101,194 105,194 101,203" fill="#4d4d4d"/><polygon points="128,235 122,237 117,236 116,233 123,228 130,229" fill="#656565"/><polygon points="310,121 307,121 304,119 306,114 310,114 311,117" fill="#363636"/><polygon points="229,130 228,120 232,121 233,127 233,133" fill="#6e6e6e"/><polygon points="77,168 82,171 83,179 81,183 78,183 71,177 71,172" fill="#383838"/><polygon points="88,290 82,290 81,286 85,282 89,284" fill="#787878"/><polygon points="307,156 316,158 314,165 302,164" fill="#323232"/><polygon points="96,223 97,221 102,223 103,228 100,230 96,228" fill="#353535"/><polygon points="147,99 155,104 156,114 145,106" fill="#595959"/><polygon points="47,47 52,48 53,57 48,59 43,57" fill="#3e3e3e"/><polygon points="38,86 31,91 21,78 31,75" fill="#2e2e2e"/><polygon points="24,222 21,221 22,219 24,215 27,216 28,220" fill="#616161"/><polygon points="126,68 129,63 136,68 136,75 128,76" fill="#6d6d6d"/><polygon points="358,62 354,54 358,52 365,54 366,61 362,64" fill="#333333"/><polygon points="168,197 169,204 159,209 155,203" fill="#393939"/><polygon points="270,107 272,110 271,113 268,112 266,107" fill="#454545"/><polygon points="197,206 203,202 211,206 208,214 201,214" fill="#434343"/><polygon points="43,41 48,37 51,39 49,48 46,50 43,44" fill="#373737"/><polygon points="178,108 181,114 179,118 174,115 173,109" fill="#3a3a3a"/><polygon points="25,119 25,112 31,110 33,118" fill="#4e4e4e"/><polygon points="363,217 358,214 360,210 366,204 372,208 370,212" fill="#2e2e2e"/><polygon points="24,169 26,171 26,176 23,176 19,174 19,168 21,168" fill="#434343"/><polygon points="209,282 217,286 213,290 205,286" fill="#2d2d2d"/><polygon points="135,187 134,190 132,192 130,192 128,188 129,184 132,184" fill="#404040"/><polygon points="56,167 55,163 57,160 63,161 66,167 66,169 59,169" fill="#4e4e4e"/><polygon points="34,78 30,72 33,69 38,71 39,77" fill="#404040"/><polygon points="296,127 292,122 292,117 297,116 301,121 300,126" fill="#333333"/><polygon points="253,93 250,105 244,102 250,90" fill="#2b2b2b"/><polygon points="59,13 53,10 59,3 66,5 66,9" fill="#3f3f3f"/><polygon points="362,103 359,93 369,90 374,92 371,102" fill="#454545"/><polygon points="247,114 252,116 254,122 253,125 249,123 244,120 243,114" fill="#3c3c3c"/><polygon points="130,250 132,255 124,254 120,251 124,246" fill="#6d6d6d"/><polygon points="32,266 39,268 37,274 28,275 26,270" fill="#303030"/><polygon points="231,188 226,192 219,191 220,186 225,184" fill="#626262"/><polygon points="288,195 278,195 277,192 285,190 289,193" fill="#5b5b5b"/><polygon points="258,268 256,271 251,268 252,262 257,261" fill="#4c4c4c"/><polygon points="87,59 90,62 92,65 89,69 83,66 82,62" fill="#404040"/><polygon points="212,190 217,189 220,192 217,196 213,196" fill="#404040"/><polygon points="327,188 324,188 323,184 325,181 328,181 329,185" fill="#595959"/><polygon points="360,166 360,173 357,175 354,173 352,165 357,162" fill="#464646"/><polygon points="22,70 15,72 10,62 18,62" fill="#636363"/><polygon points="85,42 85,46 79,49 76,47 79,41" fill="#4a4a4a"/><polygon points="346,191 345,198 343,203 338,198 338,188 343,187" fill="#373737"/><polygon points="173,208 167,209 164,207 170,200 178,196 178,201" fill="#313131"/><polygon points="200,243 205,246 207,250 205,254 201,252 197,246" fill="#777777"/><polygon points="225,129 221,121 220,115 223,111 228,120 227,128" fill="#434343"/><polygon points="196,195 200,189 203,197 201,204 197,201" fill="#5b5b5b"/><polygon points="219,92 221,89 225,92 225,94 222,97 219,96" fill="#565656"/><polygon points="75,80 80,82 80,85 74,86 70,85 69,84" fill="#313131"/><polygon points="93,170 92,173 90,175 86,172 86,169 90,167" fill="#4c4c4c"/><polygon points="1,269 8,268 12,272 14,278 7,277 2,273" fill="#3a3a3a"/><polygon points="27,190 27,177 35,182 32,195" fill="#2d2d2d"/><polygon points="74,-2 76,-4 83,-0 85,2 83,4 77,3 75,2" fill="#383838"/><polygon points="362,128 357,133 349,131 352,125 361,123" fill="#2e2e2e"/><polygon points="172,98 181,97 182,104 174,109 165,105" fill="#424242"/><polygon points="60,279 73,281 77,290 64,290" fill="#3a3a3a"/><polygon points="180,183 186,180 190,182 184,188 179,188" fill="#3c3c3c"/><polygon points="193,106 184,104 180,100 184,94 189,100" fill="#6e6e6e"/><polygon points="66,260 71,264 69,271 63,273 60,269 63,262" fill="#333333"/><polygon points="108,48 117,50 119,54 114,57 105,54 102,51" fill="#4b4b4b"/><polygon points="62,117 63,126 59,129 47,121 52,114" fill="#303030"/><polygon points="196,184 195,181 200,177 211,180 213,187 208,189" fill="#484848"/><polygon points="213,46 212,49 206,51 201,50 201,46 204,44 210,44" fill="#6e6e6e"/><polygon points="314,5 313,-4 319,-8 321,-1" fill="#393939"/><polygon points="54,97 52,94 57,89 60,91 63,96 59,99" fill="#585858"/><polygon points="20,68 15,65 15,60 19,59 23,64" fill="#333333"/><polygon points="198,185 193,185 189,181 191,175 197,175 199,177" fill="#3c3c3c"/><polygon points="278,83 280,78 290,79 295,81 295,87 286,88" fill="#2c2c2c"/><polygon points="137,164 137,161 139,157 143,156 143,161 141,164" fill="#4f4f4f"/><polygon points="6,155 6,149 10,148 13,149 13,152 11,157 8,156" fill="#616161"/><polygon points="211,16 207,9 211,6 213,8 220,14 216,17" fill="#5d5d5d"/><polygon points="259,254 262,257 263,265 258,268 257,265 256,259" fill="#717171"/><polygon points="17,257 26,263 21,267 12,261" fill="#7b7b7b"/><polygon points="112,246 117,244 121,246 120,252 116,253 113,249" fill="#484848"/><polygon points="113,99 115,92 120,90 121,98 118,101" fill="#363636"/><polygon points="14,277 5,281 -1,277 1,273 12,273" fill="#3c3c3c"/><polygon points="350,86 352,90 349,93 346,92 342,89 343,87" fill="#3f3f3f"/><polygon points="355,89 354,93 352,96 345,96 342,93 346,85 350,84" fill="#383838"/><polygon points="314,150 322,150 324,156 316,155" fill="#444444"/><polygon points="326,251 320,245 329,240 337,246 334,251" fill="#2b2b2b"/><polygon points="30,-2 27,5 16,6 9,3 13,-4 18,-7" fill="#333333"/><polygon points="53,192 49,189 51,182 54,179 58,180 60,184 57,192" fill="#4c4c4c"/><polygon points="166,195 171,191 175,194 172,198 165,199" fill="#2e2e2e"/><polygon points="289,38 286,36 285,31 292,28 298,26 298,30 294,36" fill="#424242"/><polygon points="255,129 259,135 256,139 248,136 248,132" fill="#343434"/><polygon points="76,151 82,146 87,158 78,160" fill="#2c2c2c"/><polygon points="202,141 202,143 199,146 195,144 194,141 198,138" fill="#353535"/><polygon points="361,75 356,79 353,78 353,71 357,66 361,69" fill="#646464"/><polygon points="286,103 291,100 294,107 291,114 285,116 284,111" fill="#474747"/><polygon points="151,289 153,283 155,283 159,286 159,291 154,291" fill="#313131"/><polygon points="122,14 116,17 106,12 104,6 109,3 116,4 125,11" fill="#3c3c3c"/><polygon points="88,157 96,157 96,166 89,170 84,163" fill="#474747"/><polygon points="99,162 107,166 100,175 91,176 90,171" fill="#2b2b2b"/><polygon points="158,271 163,270 163,275 157,278 151,276" fill="#3f3f3f"/><polygon points="129,80 130,75 134,76 140,83 135,87" fill="#494949"/><polygon points="209,250 212,245 215,245 218,250 213,253" fill="#6a6a6a"/><polygon points="119,190 120,182 123,180 127,185 125,189 122,193" fill="#2f2f2f"/><polygon points="129,54 131,50 140,57 139,66 134,66" fill="#4d4d4d"/><polygon points="138,249 132,248 128,238 133,235 139,240" fill="#3f3f3f"/><polygon points="163,41 170,38 173,42 168,52 163,49" fill="#737373"/><polygon points="60,18 65,26 61,29 56,27 51,20 53,17" fill="#303030"/><polygon points="303,288 302,280 305,277 309,275 311,278 311,283 305,290" fill="#4f4f4f"/><polygon points="285,147 281,146 277,139 278,135 281,134 284,139 286,145" fill="#343434"/><polygon points="372,130 366,130 365,122 371,118 375,119 378,126" fill="#3c3c3c"/><polygon points="193,231 190,230 191,226 197,222 198,226 195,230" fill="#393939"/><polygon points="123,217 123,222 118,223 113,221 117,214" fill="#2b2b2b"/><polygon points="351,37 347,32 349,26 355,29 356,36" fill="#3c3c3c"/><polygon points="291,69 291,65 295,61 298,65 296,70" fill="#333333"/><polygon points="297,-1 300,-5 306,-11 309,-8 308,-1 302,6 299,7" fill="#484848"/><polygon points="85,70 80,72 76,70 78,67 81,65 84,68" fill="#626262"/><polygon points="287,39 291,43 292,54 287,53 284,47" fill="#5e5e5e"/><polygon points="65,96 61,84 70,84 73,96" fill="#2b2b2b"/><polygon points="48,233 55,230 59,232 62,237 60,240 54,241 48,238" fill="#434343"/><polygon points="203,223 202,216 207,218 208,225" fill="#4c4c4c"/><polygon points="21,127 15,134 10,130 13,124 21,118" fill="#5a5a5a"/><polygon points="301,51 302,39 307,39 312,50 307,55" fill="#333333"/><polygon points="320,112 317,107 325,103 333,113 329,117" fill="#3d3d3d"/><polygon points="269,92 270,100 264,106 257,104 259,97" fill="#343434"/><polygon points="345,106 348,99 353,100 354,103 350,107" fill="#454545"/><polygon points="78,76 83,75 88,76 90,81 86,85 80,80" fill="#3c3c3c"/><polygon points="230,85 224,84 222,78 226,77 230,81" fill="#404040"/><polygon points="174,284 166,279 167,272 176,277" fill="#4f4f4f"/><polygon points="47,240 40,247 27,243 37,237" fill="#7b7b7b"/><polygon points="80,248 75,244 80,239 90,241 96,245 91,251" fill="#333333"/><polygon points="313,12 308,6 314,5 317,10" fill="#7c7c7c"/><polygon points="74,113 71,108 76,102 86,97 84,105" fill="#4e4e4e"/><polygon points="127,230 132,227 135,233 133,237 126,236" fill="#3b3b3b"/><polygon points="217,146 216,148 212,149 211,147 212,145 216,144" fill="#e4e4e4"/><polygon points="350,248 353,250 354,257 349,259 346,257 342,255 345,248" fill="#d3d3d3"/><polygon points="246,283 248,277 252,272 254,275 253,282 250,286" fill="#e8e8e8"/><polygon points="75,293 72,291 70,288 72,286 76,288 76,291" fill="#dfdfdf"/><polygon points="358,190 351,190 347,187 356,184 359,185" fill="#cecece"/><polygon points="310,104 310,102 313,99 314,99 315,101 314,104 312,105" fill="#efefef"/><polygon points="219,180 213,180 211,175 217,172 221,175" fill="#d7d7d7"/><polygon points="358,279 357,276 355,270 356,268 359,267 362,271 362,275" fill="#ebebeb"/><polygon points="290,187 286,187 284,184 284,182 287,182 291,183 292,185" fill="#f1f1f1"/><polygon points="63,40 60,41 55,40 53,36 58,33 62,35" fill="#f0f0f0"/><polygon points="37,100 36,103 33,103 32,101 33,98 35,98" fill="#d0d0d0"/><polygon points="262,170 267,163 268,170 263,173" fill="#dadada"/><polygon points="148,75 146,81 143,80 140,73 143,72" fill="#d3d3d3"/><polygon points="137,279 134,281 132,277 135,276" fill="#eaeaea"/><polygon points="128,39 132,43 132,50 130,53 126,47 125,44" fill="#f0f0f0"/><polygon points="107,98 111,100 105,106 100,106 103,99" fill="#d9d9d9"/><polygon points="153,121 148,122 145,118 147,111 154,109 156,116" fill="#cdcdcd"/><polygon points="194,111 199,108 203,112 201,116 196,116" fill="#f2f2f2"/><polygon points="322,41 325,41 327,42 326,45 324,45 322,45 321,43" fill="#d8d8d8"/><polygon points="331,20 331,21 330,23 328,22 327,20 330,19" fill="#f5f5f5"/><polygon points="284,65 285,64 289,65 289,69 287,71 284,69" fill="#f0f0f0"/><polygon points="49,261 49,263 44,262 42,261 43,258 47,259" fill="#d1d1d1"/><polygon points="283,245 271,243 275,236 284,236" fill="#cdcdcd"/><polygon points="174,78 173,73 177,69 182,75 180,78" fill="#cecece"/><polygon points="19,24 26,28 23,32 16,29" fill="#e6e6e6"/><polygon points="41,150 46,152 47,157 41,158 39,153" fill="#efefef"/><polygon points="104,274 107,271 110,273 111,275 108,278 104,276" fill="#eeeeee"/><polygon points="245,230 245,233 242,235 240,234 239,231 242,228" fill="#d3d3d3"/><polygon points="-1,89 -5,87 -3,82 3,84" fill="#d3d3d3"/><polygon points="46,228 48,233 44,236 40,236 41,230 43,227" fill="#d2d2d2"/><polygon points="188,17 189,23 182,18 183,13" fill="#ebebeb"/><polygon points="292,14 293,12 295,11 296,13 297,14 296,16 292,16" fill="#e3e3e3"/><polygon points="371,180 369,177 372,175 374,180" fill="#d4d4d4"/><polygon points="198,140 206,140 204,149 195,153 188,149" fill="#f0f0f0"/><polygon points="323,97 320,98 313,92 315,88 319,90" fill="#e6e6e6"/><polygon points="141,105 139,105 136,101 137,99 141,98 143,100" fill="#d7d7d7"/><polygon points="168,163 161,164 158,163 160,160 164,158 168,161" fill="#cecece"/><polygon points="91,163 86,162 85,158 87,156 92,158 92,162" fill="#ebebeb"/><polygon points="42,94 41,91 43,88 45,90 44,93" fill="#ebebeb"/><polygon points="361,250 361,251 360,253 358,252 356,250 357,248 359,248" fill="#d9d9d9"/><polygon points="69,68 64,63 64,57 70,63" fill="#e1e1e1"/><polygon points="283,262 279,263 278,261 279,257 282,257 283,259" fill="#eeeeee"/><polygon points="331,67 334,67 335,69 335,71 332,72 328,70 328,69" fill="#cdcdcd"/><polygon points="282,109 281,115 277,117 274,116 278,110" fill="#dfdfdf"/><polygon points="363,207 363,213 360,216 358,211 360,205" fill="#e0e0e0"/><polygon points="312,76 307,71 304,65 310,63 315,66 320,72 319,76" fill="#ececec"/><polygon points="186,272 189,268 192,270 192,276 189,278 186,276" fill="#d9d9d9"/><polygon points="257,155 255,157 253,156 251,155 250,152 253,152 255,152" fill="#ebebeb"/><polygon points="15,97 11,100 9,96 11,90 15,91" fill="#dbdbdb"/><polygon points="218,263 221,257 224,257 225,261 221,265" fill="#e8e8e8"/><polygon points="91,174 99,169 108,171 112,177 105,179 99,179" fill="#e2e2e2"/><polygon points="348,83 343,85 341,81 342,75 348,78" fill="#dbdbdb"/><polygon points="224,274 230,275 227,279 222,279" fill="#d3d3d3"/><polygon points="213,66 215,67 214,69 212,69 210,69 209,67 210,66" fill="#e4e4e4"/><polygon points="249,199 246,200 245,195 248,193 253,193 256,195 254,199" fill="#d7d7d7"/><polygon points="334,186 331,183 327,179 329,176 333,177 338,182 338,184" fill="#d0d0d0"/><polygon points="75,268 82,268 82,271 81,274 76,276 68,276 70,272" fill="#ebebeb"/><polygon points="203,244 202,246 200,246 195,246 195,242 195,240 201,241" fill="#dcdcdc"/><polygon points="75,276 74,279 72,279 70,275 70,273 74,274" fill="#dedede"/><polygon points="360,22 360,25 357,27 354,24 357,21" fill="#eeeeee"/><polygon points="89,92 86,90 88,87 91,87 92,91" fill="#e7e7e7"/><polygon points="120,163 123,160 127,164 124,167 121,167" fill="#e9e9e9"/><polygon points="139,7 143,10 143,14 137,16 134,10" fill="#d2d2d2"/><polygon points="12,62 7,65 5,62 5,58 10,59" fill="#cecece"/><polygon points="315,283 314,287 309,289 307,283 310,279 312,279" fill="#e8e8e8"/><polygon points="13,244 8,245 8,241 12,238 16,240" fill="#d0d0d0"/><polygon points="22,106 27,109 24,111 18,112 17,109" fill="#e3e3e3"/><polygon points="372,127 371,132 367,135 364,133 367,127" fill="#cdcdcd"/><polygon points="173,51 181,49 184,56 179,62 173,56" fill="#f1f1f1"/><polygon points="116,87 116,89 114,90 110,91 109,89 111,87" fill="#d9d9d9"/><polygon points="280,214 281,211 284,211 284,212 284,216 281,217" fill="#cdcdcd"/><polygon points="143,130 141,129 140,122 143,118 146,121 146,126" fill="#ebebeb"/><polygon points="82,36 81,40 79,42 74,38 75,35 76,32 80,32" fill="#e6e6e6"/><polygon points="159,29 156,29 155,27 158,25 161,27" fill="#f1f1f1"/><polygon points="347,53 344,55 340,51 339,46 344,47" fill="#dddddd"/><polygon points="78,228 81,227 85,231 83,233 80,234 77,231" fill="#e4e4e4"/><polygon points="229,255 229,251 234,248 234,253" fill="#cdcdcd"/><polygon points="127,123 127,126 125,127 122,124 124,121" fill="#f5f5f5"/><polygon points="116,70 113,70 112,67 114,66 116,68" fill="#d0d0d0"/><polygon points="347,127 341,132 342,125 348,122" fill="#d9d9d9"/><polygon points="156,43 154,45 151,44 152,41 155,40" fill="#dcdcdc"/><polygon points="43,8 49,6 53,9 51,16 43,14" fill="#dadada"/><polygon points="29,261 22,261 24,256 28,254 30,255" fill="#d4d4d4"/><polygon points="249,33 253,37 252,39 249,39 245,38 242,34 245,32" fill="#d2d2d2"/><polygon points="258,3 259,0 261,-0 263,1 263,2 261,4 259,4" fill="#e7e7e7"/><polygon points="355,150 353,155 349,157 347,154 347,150 352,148" fill="#f4f4f4"/><polygon points="179,64 184,67 181,71 176,69" fill="#dadada"/><polygon points="280,122 279,124 275,123 272,121 273,118 277,117 279,118" fill="#d6d6d6"/><polygon points="350,214 353,214 355,218 350,220 347,221 346,219" fill="#cdcdcd"/><polygon points="52,118 47,118 43,112 46,110 51,113" fill="#f3f3f3"/><polygon points="372,208 373,213 366,215 366,210" fill="#d5d5d5"/><polygon points="18,8 16,9 14,7 16,5 18,5" fill="#efefef"/><polygon points="322,151 320,151 318,151 318,147 320,143 323,142 324,145" fill="#d2d2d2"/><polygon points="281,66 280,69 274,70 272,67 274,63 276,63" fill="#efefef"/><polygon points="237,100 237,106 230,107 227,101 231,96" fill="#e6e6e6"/><polygon points="121,26 121,22 124,20 125,23 124,26" fill="#e2e2e2"/><polygon points="193,51 196,52 194,56 192,57 189,56 188,54 189,51" fill="#e2e2e2"/><polygon points="275,103 277,100 279,101 280,104 277,107" fill="#e6e6e6"/><polygon points="231,96 231,91 233,88 239,86 240,88 237,93" fill="#cdcdcd"/><polygon points="1,79 3,70 10,75 11,84 9,89 4,88" fill="#f4f4f4"/><polygon points="141,177 139,178 137,178 135,176 135,174 137,172 140,173" fill="#d6d6d6"/><polygon points="64,268 65,271 62,274 58,272 60,268" fill="#e3e3e3"/><polygon points="362,208 363,206 370,204 373,205 372,209 368,210" fill="#dadada"/><polygon points="9,276 12,272 19,274 18,277" fill="#f2f2f2"/><polygon points="307,68 300,72 297,70 300,64 306,63" fill="#e5e5e5"/><polygon points="227,81 230,78 238,84 232,85" fill="#dadada"/><polygon points="306,167 307,162 311,160 314,164 312,169" fill="#d8d8d8"/><polygon points="44,130 43,131 37,130 36,125 41,126" fill="#d5d5d5"/><polygon points="139,219 136,217 135,213 136,211 139,211 140,215" fill="#f5f5f5"/><polygon points="59,81 52,80 51,77 57,76 62,77" fill="#f2f2f2"/><polygon points="95,108 97,110 94,117 87,120 87,116 89,109" fill="#d7d7d7"/><polygon points="51,255 54,250 58,249 60,253 58,256 53,257" fill="#d6d6d6"/><polygon points="284,169 278,169 278,165 285,161" fill="#e3e3e3"/><polygon points="233,5 228,3 232,-3 235,0" fill="#f5f5f5"/><polygon points="216,118 217,121 216,125 211,123 209,118 211,114" fill="#efefef"/><polygon points="150,189 143,189 139,184 146,183 151,186" fill="#d7d7d7"/><polygon points="21,243 15,247 11,243 14,237 22,231 27,233" fill="#dddddd"/><polygon points="300,288 296,287 297,283 301,283" fill="#e9e9e9"/><polygon points="197,214 199,211 201,210 203,211 202,213 199,215" fill="#e5e5e5"/><polygon points="18,46 16,47 13,44 13,38 15,39 18,42" fill="#dcdcdc"/><polygon points="282,36 285,36 292,37 295,39 292,41 285,42 283,39" fill="#dbdbdb"/><polygon points="301,198 302,195 305,196 306,199 305,200" fill="#f2f2f2"/><polygon points="268,165 265,167 260,166 260,163 263,161 269,161" fill="#e4e4e4"/><polygon points="209,8 209,11 206,14 202,13 199,10 201,8 205,7" fill="#e5e5e5"/><polygon points="330,5 337,-1 338,8 332,10" fill="#d0d0d0"/><polygon points="1,117 1,115 2,112 6,112 6,114 4,116" fill="#dedede"/><polygon points="225,5 225,8 221,13 218,13 218,9 219,6" fill="#dddddd"/><polygon points="291,257 291,259 289,260 284,261 283,258 286,257" fill="#dfdfdf"/><polygon points="237,293 240,290 242,291 242,293 237,295" fill="#d9d9d9"/><polygon points="77,117 74,115 71,109 74,105 80,104 82,109 84,111" fill="#e9e9e9"/><polygon points="207,76 206,74 208,72 210,73 211,75 209,78" fill="#d5d5d5"/><polygon points="333,259 337,261 339,270 336,270 333,267" fill="#dfdfdf"/><polygon points="179,43 181,41 183,45 181,46" fill="#f1f1f1"/><polygon points="135,257 134,262 128,265 128,260" fill="#f1f1f1"/><polygon points="311,199 307,209 298,207 300,198" fill="#d2d2d2"/><polygon points="39,292 36,290 37,287 40,286 41,289" fill="#f3f3f3"/><polygon points="377,115 374,116 372,115 371,111 371,109 376,109 378,110" fill="#dbdbdb"/><polygon points="40,122 38,126 34,126 37,121" fill="#d0d0d0"/><polygon points="248,249 244,249 244,245 247,245" fill="#dadada"/><polygon points="216,144 218,140 221,139 223,142 224,145 220,151 218,151" fill="#dddddd"/><polygon points="142,165 139,170 134,169 133,166 138,163" fill="#ebebeb"/><polygon points="187,17 181,22 177,22 176,18 179,15 185,14" fill="#cdcdcd"/><polygon points="258,247 257,249 254,250 251,248 255,245" fill="#efefef"/><polygon points="342,261 344,265 337,266 335,262" fill="#e8e8e8"/><polygon points="243,186 237,179 243,172 250,173 248,182" fill="#cdcdcd"/><polygon points="208,260 212,261 214,263 210,265 207,265 205,263" fill="#d5d5d5"/><polygon points="144,74 140,70 145,67 152,69 149,73" fill="#d3d3d3"/><polygon points="290,56 289,49 295,45 297,51 295,58" fill="#e2e2e2"/><polygon points="174,93 177,96 174,101 170,99" fill="#e1e1e1"/><polygon points="87,33 82,34 81,31 85,29" fill="#d0d0d0"/><polygon points="339,253 337,251 337,248 340,247 343,249 341,252" fill="#dcdcdc"/><polygon points="12,256 15,256 18,262 16,265 13,262" fill="#ebebeb"/><polygon points="183,-0 187,1 188,5 187,8 183,9 180,6 180,3" fill="#e1e1e1"/><polygon points="109,27 111,26 114,26 115,27 114,30 112,31" fill="#dadada"/><polygon points="256,112 255,117 249,115 251,110" fill="#dfdfdf"/><polygon points="48,64 46,68 40,66 40,63 44,61" fill="#cecece"/><polygon points="295,277 297,279 296,281 292,279 292,276" fill="#dfdfdf"/><polygon points="116,31 114,26 116,22 123,24 123,28 119,32" fill="#d8d8d8"/><polygon points="87,168 87,176 78,179 73,176 80,168" fill="#f2f2f2"/><polygon points="347,294 342,295 341,291 346,289 351,291" fill="#e8e8e8"/><polygon points="203,87 208,91 205,96 201,93" fill="#d9d9d9"/><polygon points="373,43 371,39 372,38 377,36 377,40 376,43" fill="#e5e5e5"/><polygon points="40,34 31,33 35,26 42,26" fill="#f3f3f3"/><polygon points="299,154 297,159 293,156 296,151" fill="#ececec"/><polygon points="69,31 58,39 53,34 55,29 64,25" fill="#d1d1d1"/><polygon points="175,101 172,104 169,103 167,101 169,98 172,95 174,96" fill="#f2f2f2"/><polygon points="154,144 155,141 159,142 159,144 156,146" fill="#cdcdcd"/><polygon points="268,279 263,283 256,283 250,278 258,273 266,274" fill="#d9d9d9"/><polygon points="149,165 145,163 144,161 148,161 151,163" fill="#f3f3f3"/><polygon points="209,174 206,176 201,175 200,172 202,167 207,169" fill="#f3f3f3"/><polygon points="275,220 277,219 277,223 276,225 273,223" fill="#e6e6e6"/><polygon points="85,52 86,44 91,41 98,42 101,44 96,50 89,51" fill="#f2f2f2"/><polygon points="25,136 22,135 25,131 29,132 29,136" fill="#f1f1f1"/><polygon points="49,121 49,123 46,127 43,127 41,122 45,120" fill="#e5e5e5"/><polygon points="317,60 318,56 323,53 328,56 328,61 323,64 319,64" fill="#d7d7d7"/><polygon points="13,87 12,91 8,92 4,89 3,87 6,84 11,84" fill="#f3f3f3"/><polygon points="69,189 66,194 63,192 67,185" fill="#e9e9e9"/><polygon points="237,210 235,207 236,204 239,204 242,206 242,211" fill="#f1f1f1"/><polygon points="250,30 250,34 246,35 244,35 244,30 247,28" fill="#e6e6e6"/><polygon points="100,215 96,212 101,201 106,199 106,207" fill="#f5f5f5"/><polygon points="287,273 288,266 295,267 293,271" fill="#e6e6e6"/><polygon points="321,80 322,76 324,76 325,79 324,80" fill="#f2f2f2"/><polygon points="220,167 213,167 212,164 219,163 222,164" fill="#d6d6d6"/><polygon points="179,27 179,30 178,32 176,30 176,27" fill="#f5f5f5"/><polygon points="369,50 362,51 364,46 369,44 372,46" fill="#d8d8d8"/><polygon points="35,-0 39,-4 42,-3 42,2 37,4" fill="#d8d8d8"/><polygon points="308,186 307,183 308,180 311,180 312,183 310,188" fill="#efefef"/><polygon points="49,20 45,20 44,16 46,14 49,15 50,19" fill="#cecece"/><polygon points="187,253 185,256 182,255 182,251 184,250" fill="#dadada"/><polygon points="22,40 19,42 16,38 18,35 20,35 23,38" fill="#f5f5f5"/><polygon points="161,162 160,165 158,167 155,164 154,161 158,160" fill="#e2e2e2"/><polygon points="278,232 275,231 273,229 278,227 281,227 281,230" fill="#f2f2f2"/><polygon points="66,159 72,159 74,163 70,166 67,165" fill="#eeeeee"/><polygon points="298,26 294,24 293,22 296,19 303,19 306,23 303,25" fill="#d6d6d6"/><polygon points="353,205 351,203 350,201 351,199 353,200 355,201 355,204" fill="#dbdbdb"/><polygon points="161,11 158,8 160,7 163,7 164,10" fill="#d2d2d2"/><polygon points="229,33 225,35 224,33 227,31" fill="#eaeaea"/><polygon points="189,142 192,143 189,153 183,154 179,152" fill="#f5f5f5"/><polygon points="174,162 175,157 177,156 180,156 179,159 177,161" fill="#dcdcdc"/><polygon points="66,209 65,220 60,218 61,210" fill="#e5e5e5"/><polygon points="87,276 84,269 89,266 94,269 99,278 96,282" fill="#d8d8d8"/><polygon points="255,161 253,156 253,154 257,154 263,160 263,165" fill="#f0f0f0"/><polygon points="357,11 356,4 363,2 370,13 368,17" fill="#ececec"/><polygon points="90,63 101,60 110,62 105,68 97,69" fill="#e2e2e2"/><polygon points="38,166 34,165 34,163 35,162 37,162 39,164" fill="#d8d8d8"/><polygon points="157,232 159,233 160,235 157,237 154,235 155,233" fill="#e7e7e7"/><polygon points="37,275 40,282 33,287 29,277 31,272" fill="#e9e9e9"/><polygon points="119,80 126,82 125,86 119,86 115,83" fill="#ebebeb"/><polygon points="18,53 17,48 23,45 23,49" fill="#e6e6e6"/><polygon points="81,267 79,264 83,261 87,263 88,269" fill="#e5e5e5"/><polygon points="44,143 39,145 33,141 35,137 42,138" fill="#d2d2d2"/><polygon points="199,1 201,5 194,5 192,4 191,0 195,-1" fill="#eaeaea"/><polygon points="304,230 306,234 305,236 301,236 297,231 299,227" fill="#f3f3f3"/><polygon points="-8,21 3,17 7,22 -5,29" fill="#eaeaea"/><polygon points="230,76 232,72 236,73 240,78 238,80 232,78" fill="#d7d7d7"/><polygon points="199,189 203,188 207,192 204,197 199,195" fill="#dbdbdb"/><polygon points="170,74 166,72 166,69 167,66 172,65 177,66 175,71" fill="#e2e2e2"/><polygon points="134,226 133,224 132,221 136,218 140,221 140,223 139,226" fill="#e9e9e9"/><polygon points="366,277 369,283 365,287 358,284 359,277" fill="#d4d4d4"/><polygon points="184,145 183,144 181,140 183,138 185,138 188,141 187,142" fill="#dbdbdb"/><polygon points="225,204 227,206 226,208 221,209 218,207 220,204" fill="#e6e6e6"/><polygon points="356,45 358,48 355,49 353,48 353,46" fill="#f3f3f3"/><polygon points="271,85 266,87 265,85 270,82" fill="#dfdfdf"/><polygon points="291,250 294,249 295,252 294,255 291,255 289,253" fill="#dedede"/><polygon points="88,152 90,147 94,147 95,152 93,155" fill="#f3f3f3"/><polygon points="17,209 15,209 15,207 18,205 22,206 22,208" fill="#dadada"/><polygon points="137,267 138,266 141,267 141,269 139,270 137,270 136,268" fill="#e8e8e8"/><polygon points="42,42 48,42 46,47 41,48" fill="#cecece"/><polygon points="183,221 185,214 190,217 190,223 188,229 183,224" fill="#d9d9d9"/><polygon points="172,254 168,257 160,257 160,251 166,248 170,249" fill="#dcdcdc"/><polygon points="49,166 55,168 58,174 54,178 48,172" fill="#dadada"/><polygon points="275,275 279,284 274,284 269,275" fill="#d5d5d5"/><polygon points="35,88 38,93 38,94 33,97 30,94 30,91 33,88" fill="#e5e5e5"/><polygon points="243,157 239,157 235,155 235,152 237,150 242,150 243,153" fill="#dbdbdb"/><polygon points="229,155 222,152 223,149 230,148 234,152" fill="#f4f4f4"/><polygon points="355,222 361,222 360,228 357,228 354,224" fill="#e3e3e3"/><polygon points="89,193 92,193 96,193 96,196 95,199 91,199 90,197" fill="#d6d6d6"/><polygon points="253,106 253,108 247,111 243,110 243,107 246,105" fill="#cecece"/><polygon points="1,48 2,46 4,45 5,48 3,51 1,50" fill="#ebebeb"/><polygon points="182,80 187,80 189,81 187,85 182,86 179,84" fill="#d2d2d2"/><polygon points="175,258 172,260 170,257 172,255 174,252 176,255" fill="#e7e7e7"/><polygon points="207,-2 209,0 210,4 206,6 201,2 202,-0" fill="#e3e3e3"/><polygon points="-0,224 3,223 7,224 4,227 1,229 -2,228" fill="#e4e4e4"/><polygon points="291,114 288,115 287,112 288,109 292,110" fill="#d0d0d0"/><polygon points="311,22 312,28 308,32 306,24" fill="#efefef"/><polygon points="289,132 288,130 289,121 292,119 295,125 294,130" fill="#d2d2d2"/><polygon points="229,60 237,62 239,69 229,64" fill="#f3f3f3"/><polygon points="21,234 16,234 9,229 11,227 18,227" fill="#e3e3e3"/><polygon points="123,198 129,204 118,208 109,204" fill="#e5e5e5"/><polygon points="194,53 188,54 184,50 190,48 195,49 198,52" fill="#e0e0e0"/><polygon points="184,285 183,288 179,289 175,288 175,285 179,283" fill="#ececec"/><polygon points="345,19 345,23 341,24 339,17 343,16" fill="#f3f3f3"/><polygon points="176,134 178,132 181,128 185,128 184,132 182,135 178,137" fill="#ebebeb"/><polygon points="40,154 44,147 50,145 51,153 45,160 40,160" fill="#e8e8e8"/><polygon points="190,45 193,43 195,48 194,51 192,53 191,51" fill="#dedede"/><polygon points="16,125 16,128 13,128 10,128 8,126 11,123 15,122" fill="#cecece"/><polygon points="267,177 269,180 267,182 265,180 264,177" fill="#e7e7e7"/><polygon points="167,57 161,61 158,61 157,60 157,55 161,53 166,53" fill="#cdcdcd"/><polygon points="299,110 298,114 293,113 289,107 293,105 297,106" fill="#d9d9d9"/><polygon points="175,54 170,55 173,49 177,46 179,47 179,51" fill="#f1f1f1"/><polygon points="14,158 14,164 7,166 6,160 8,156" fill="#d0d0d0"/><polygon points="50,284 53,283 54,290 51,288" fill="#dadada"/><polygon points="313,59 310,58 310,55 313,53 315,56" fill="#e7e7e7"/><polygon points="331,49 327,48 327,44 332,42 334,46" fill="#f5f5f5"/><polygon points="325,244 328,245 329,249 328,253 325,253 323,248" fill="#ebebeb"/><polygon points="284,189 279,188 276,183 277,177 279,175 284,180 284,184" fill="#cecece"/><polygon points="342,219 347,222 345,229 342,231 338,223" fill="#dfdfdf"/><polygon points="114,134 112,135 110,133 112,130 114,131" fill="#dddddd"/><polygon points="215,271 214,270 213,265 216,261 218,262 218,267" fill="#e5e5e5"/><polygon points="180,7 180,0 185,-1 183,5" fill="#dcdcdc"/><polygon points="116,-0 114,-4 115,-7 123,-3 125,1 123,5 119,5" fill="#e0e0e0"/><polygon points="47,208 57,209 57,215 50,215" fill="#eaeaea"/><polygon points="192,35 195,31 201,32 198,37" fill="#f2f2f2"/><polygon points="238,243 234,244 231,244 230,242 234,238 237,237 240,238" fill="#e2e2e2"/><polygon points="336,107 338,103 343,102 344,106 337,109" fill="#e5e5e5"/><polygon points="360,97 363,99 361,101 358,102 356,99 358,96" fill="#d5d5d5"/><polygon points="39,164 43,163 44,164 41,166" fill="#d3d3d3"/><polygon points="331,57 333,53 340,51 342,55 340,59 333,59" fill="#f5f5f5"/><polygon points="172,262 172,269 170,270 166,264 168,258" fill="#d3d3d3"/><polygon points="13,181 12,182 9,179 8,174 9,171 11,171 14,176" fill="#d2d2d2"/><polygon points="320,255 320,258 316,257 314,255 317,254" fill="#dddddd"/><polygon points="223,86 221,90 215,90 211,84 214,81 223,82" fill="#e0e0e0"/><polygon points="244,19 231,19 228,13 241,12" fill="#e2e2e2"/><polygon points="164,113 164,106 168,106 171,111 167,115" fill="#d8d8d8"/><polygon points="153,291 149,291 149,288 151,286 154,286 155,288" fill="#f2f2f2"/><polygon points="121,108 124,107 126,111 124,113 122,112" fill="#eeeeee"/><polygon points="331,157 336,164 333,168 328,166 326,158" fill="#dbdbdb"/><polygon points="228,39 221,43 217,41 218,37 227,36" fill="#cecece"/><polygon points="235,220 231,221 229,217 232,211 236,213" fill="#ededed"/><polygon points="266,148 273,145 277,146 274,151 269,154 264,153" fill="#e1e1e1"/><polygon points="274,42 276,52 271,59 267,54 269,44" fill="#cdcdcd"/><polygon points="10,81 8,85 6,84 6,78 9,76" fill="#d1d1d1"/><polygon points="85,239 83,234 87,230 94,231 95,241 90,243" fill="#d5d5d5"/><polygon points="70,208 64,205 66,199 73,202" fill="#dfdfdf"/><polygon points="225,265 227,268 222,270 218,269 220,264" fill="#f2f2f2"/><polygon points="35,106 39,107 37,110 35,110 33,109" fill="#dcdcdc"/><polygon points="171,44 169,44 168,41 167,36 170,35 172,36 173,40" fill="#e2e2e2"/><polygon points="50,71 50,67 53,65 57,70 56,73 53,74" fill="#f4f4f4"/><polygon points="94,245 91,244 90,242 91,241 93,241 96,244 95,245" fill="#e2e2e2"/><polygon points="155,29 152,26 154,18 161,18 163,25" fill="#ececec"/><polygon points="162,131 161,134 158,136 157,134 159,129" fill="#dddddd"/><polygon points="70,123 72,122 75,123 74,126 73,127 70,126" fill="#e2e2e2"/><polygon points="259,235 261,231 264,229 264,233 260,237" fill="#cecece"/><polygon points="128,208 124,207 123,202 129,200 133,202 134,207" fill="#f5f5f5"/><polygon points="49,270 44,269 45,263 52,261 56,266" fill="#d5d5d5"/><polygon points="182,124 181,127 175,128 170,124 176,121" fill="#d8d8d8"/><polygon points="21,165 20,168 16,167 15,165 14,158 18,157 20,159" fill="#e7e7e7"/><polygon points="126,192 129,195 125,199 121,199 118,196 120,192" fill="#d8d8d8"/><polygon points="122,255 125,252 127,254 125,259 123,259" fill="#d0d0d0"/><polygon points="119,155 115,157 110,154 107,148 108,147 117,151" fill="#ededed"/><polygon points="304,250 305,246 307,243 311,244 311,249 308,252 306,254" fill="#e8e8e8"/><polygon points="150,26 155,25 155,30 151,34 149,30" fill="#dddddd"/><polygon points="77,35 80,32 87,35 88,38 82,39" fill="#dcdcdc"/><polygon points="322,241 323,244 322,249 319,249 318,246 318,242" fill="#d3d3d3"/><polygon points="-1,243 2,241 4,244 3,250 -2,253 -3,249" fill="#cecece"/><polygon points="330,210 332,208 335,208 338,211 336,213 332,212" fill="#eaeaea"/><polygon points="314,49 314,52 313,56 310,56 309,54 310,51 312,48" fill="#e0e0e0"/><polygon points="37,253 34,255 29,256 23,253 22,246 26,243 33,246" fill="#e5e5e5"/><polygon points="21,58 13,55 16,51 22,53 24,57" fill="#f2f2f2"/><polygon points="178,187 177,189 175,189 173,186 173,183 175,182 177,185" fill="#eeeeee"/><polygon points="110,254 114,253 117,255 116,258 110,261 108,259" fill="#cecece"/><polygon points="238,32 240,35 238,38 234,35" fill="#dddddd"/><polygon points="190,34 190,37 189,39 183,39 182,36 183,33" fill="#dcdcdc"/><polygon points="275,38 281,41 281,47 278,50 272,43" fill="#e7e7e7"/><polygon points="154,52 156,48 161,52 159,55" fill="#e6e6e6"/><polygon points="299,209 299,206 302,205 304,208 304,210 301,212" fill="#e1e1e1"/><polygon points="117,43 111,44 110,42 113,40 118,39 120,40" fill="#dddddd"/><polygon points="118,236 122,238 120,242 115,242 114,238" fill="#d8d8d8"/><polygon points="271,154 275,154 278,158 275,162 272,161 269,158" fill="#f5f5f5"/><polygon points="133,243 136,243 139,245 139,248 136,251 132,250 130,248" fill="#cfcfcf"/><polygon points="257,142 262,140 266,143 263,147 260,149 254,146 254,143" fill="#dbdbdb"/><polygon points="338,179 341,177 343,179 341,183 339,182" fill="#f2f2f2"/><polygon points="69,192 70,194 70,198 65,200 62,200 63,196" fill="#d5d5d5"/><polygon points="270,54 270,59 265,59 263,56" fill="#f4f4f4"/><polygon points="210,159 207,162 203,161 203,160 206,156 209,157" fill="#f0f0f0"/><polygon points="154,50 150,56 146,53 147,47" fill="#f0f0f0"/><polygon points="69,12 70,18 60,16 56,10 59,4 63,6" fill="#cfcfcf"/><polygon points="270,36 277,45 276,50 268,44 266,39" fill="#eeeeee"/><polygon points="133,105 129,106 127,104 129,101 132,103" fill="#e9e9e9"/><polygon points="51,193 48,189 52,189 57,193 54,194" fill="#e1e1e1"/><polygon points="294,187 286,186 288,179 296,177 301,182" fill="#d8d8d8"/><polygon points="109,220 105,218 104,212 108,212 110,216" fill="#eaeaea"/><polygon points="40,15 35,11 38,5 43,10" fill="#ebebeb"/><polygon points="325,221 324,223 321,223 320,221 322,220" fill="#cdcdcd"/><polygon points="290,142 292,141 293,141 293,145 291,145" fill="#cfcfcf"/><polygon points="165,211 173,212 179,217 177,222 171,223 161,215" fill="#eeeeee"/><polygon points="21,270 17,269 13,266 14,264 20,263 22,265" fill="#ededed"/><polygon points="65,281 66,278 69,277 71,281 68,283" fill="#d4d4d4"/><polygon points="40,209 39,204 46,196 48,199 46,206" fill="#dcdcdc"/><polygon points="373,174 368,175 365,169 371,167 374,168" fill="#e6e6e6"/><polygon points="258,196 262,198 264,202 262,204 257,202 256,197" fill="#ebebeb"/><polygon points="155,178 158,180 156,184 153,182 152,180" fill="#eeeeee"/><polygon points="108,45 105,44 103,38 106,36 109,38 109,40" fill="#dfdfdf"/><polygon points="113,218 108,224 105,221 106,217 111,215" fill="#f1f1f1"/><polygon points="244,98 236,96 240,88 248,85 253,91" fill="#e3e3e3"/><polygon points="266,148 265,144 268,141 271,141 271,146 269,149" fill="#d3d3d3"/><polygon points="334,131 332,133 330,132 329,128 330,125 333,125 334,128" fill="#dedede"/><polygon points="18,77 16,74 21,73 25,75 26,77 22,79" fill="#dadada"/><polygon points="267,30 269,32 266,34 262,35 262,31 265,29" fill="#e1e1e1"/><polygon points="142,226 139,226 136,222 134,218 135,217 139,219 142,224" fill="#f1f1f1"/><polygon points="219,104 218,101 223,100 226,103" fill="#e1e1e1"/><polygon points="157,275 152,275 150,273 148,269 155,272" fill="#d6d6d6"/><polygon points="93,79 92,77 95,75 97,77 96,79" fill="#f5f5f5"/><polygon points="227,52 227,61 223,59 223,52" fill="#f0f0f0"/><polygon points="370,288 375,283 379,284 378,287 372,290" fill="#e5e5e5"/><polygon points="12,123 17,128 15,131 9,128 8,123" fill="#f5f5f5"/><polygon points="278,93 278,92 279,89 281,90 283,92 281,94 280,94" fill="#dbdbdb"/><polygon points="144,43 137,37 136,33 139,27 141,27 145,34 146,39" fill="#e6e6e6"/><polygon points="85,137 86,135 89,136 92,137 93,140 92,143 88,141" fill="#d5d5d5"/><polygon points="347,215 343,215 341,209 341,207 343,204 347,208 349,210" fill="#dddddd"/><polygon points="32,217 29,217 28,214 29,211 32,212 34,215" fill="#d5d5d5"/><polygon points="69,7 68,3 72,2 73,7" fill="#eaeaea"/><polygon points="269,250 272,247 275,252 272,253" fill="#ededed"/><polygon points="138,144 144,141 153,140 154,144 146,149 139,148" fill="#e6e6e6"/><polygon points="53,157 53,147 57,145 61,152 58,158" fill="#d3d3d3"/><polygon points="331,175 329,177 326,177 326,173 329,172" fill="#eeeeee"/><polygon points="218,26 218,22 225,21 228,24 226,27 220,28" fill="#ececec"/><polygon points="7,193 5,183 15,185 16,190" fill="#dddddd"/><polygon points="76,198 79,198 79,203 75,204 73,202" fill="#e2e2e2"/><polygon points="331,173 330,165 335,168 335,173" fill="#eeeeee"/><polygon points="-0,11 5,13 6,19 1,19 -3,15" fill="#d8d8d8"/><polygon points="143,166 144,162 148,163 147,167" fill="#f2f2f2"/><polygon points="123,132 128,131 128,137 123,138" fill="#e2e2e2"/><polygon points="174,54 173,56 168,56 163,53 165,51 170,51" fill="#f3f3f3"/><polygon points="101,133 96,134 94,132 99,130" fill="#d5d5d5"/><polygon points="317,1 318,-4 320,-7 323,-5 323,-0 320,4" fill="#e4e4e4"/><polygon points="303,108 306,108 308,109 307,113 305,116 302,117 301,116" fill="#eaeaea"/><polygon points="373,156 376,168 370,170 366,170 364,159 367,155" fill="#e7e7e7"/><polygon points="273,33 278,34 278,38 274,40 271,40 269,36" fill="#d4d4d4"/><polygon points="144,284 142,286 140,285 138,283 139,282 141,280 143,282" fill="#dadada"/><polygon points="338,138 342,136 346,138 343,141 337,142" fill="#cecece"/><polygon points="274,196 272,199 263,200 261,194 267,192" fill="#dddddd"/><polygon points="334,38 340,37 344,39 339,42 334,41" fill="#f0f0f0"/><polygon points="53,50 53,48 56,47 60,49 58,51" fill="#f0f0f0"/><polygon points="25,186 28,189 27,193 23,192 19,188" fill="#eaeaea"/><polygon points="183,61 188,61 189,63 185,64" fill="#f4f4f4"/><polygon points="233,128 236,128 237,131 234,131" fill="#ededed"/><polygon points="298,70 299,72 299,74 297,75 294,73 293,71" fill="#f2f2f2"/><polygon points="110,157 107,160 103,159 103,157 106,155 110,155" fill="#dddddd"/><polygon points="343,161 346,159 350,159 352,161 350,164 348,164" fill="#efefef"/><polygon points="160,79 161,79 164,81 166,85 164,86 162,84 160,82" fill="#f1f1f1"/><polygon points="227,227 222,229 221,225 221,218 224,215 229,217 230,223" fill="#e8e8e8"/><polygon points="358,67 357,71 354,72 352,70 352,65 354,63 357,64" fill="#e8e8e8"/><polygon points="195,4 195,8 194,16 191,18 190,10 191,4" fill="#f2f2f2"/><polygon points="101,71 103,69 105,71 105,75 103,76 101,75" fill="#e4e4e4"/><polygon points="363,280 365,282 367,287 364,290 362,287 361,283" fill="#e4e4e4"/><polygon points="154,10 149,10 149,4 153,4" fill="#e2e2e2"/><polygon points="65,18 66,20 66,22 63,23 61,21 61,18 62,16" fill="#f4f4f4"/><polygon points="372,78 371,84 367,84 364,81 365,74 368,73" fill="#cdcdcd"/><polygon points="251,188 257,187 255,193 248,192" fill="#d9d9d9"/></g><g stroke="#0a0a0a" stroke-width="0.8"><polygon points="32,62 45,69 44,79 27,90 18,81 18,70" fill="#6a6a6a"/><polygon points="69,75 77,61 85,78 80,92 71,88" fill="#555555"/><polygon points="130,41 120,52 111,51 105,42 120,37" fill="#b8b8b8"/><polygon points="147,48 145,54 139,56 132,51 133,44 142,41" fill="#7a7a7a"/><polygon points="125,81 131,70 141,71 146,79 144,86 132,89" fill="#585858"/><polygon points="61,122 68,107 77,105 81,124 69,132" fill="#707070"/><polygon points="57,42 51,43 46,39 45,35 50,29 56,30 58,34" fill="#606060"/><polygon points="9,23 13,33 10,47 3,51 -1,43 1,28" fill="#5e5e5e"/><polygon points="172,47 164,47 158,44 159,35 167,30 173,32 177,37" fill="#4e4e4e"/><polygon points="167,99 171,92 177,90 182,96 180,104 174,108" fill="#666666"/><polygon points="147,30 153,27 160,37 158,47 149,50 144,41" fill="#e8e8e8"/><polygon points="93,80 97,77 105,79 104,85 99,89 94,86" fill="#e0e0e0"/><polygon points="52,18 55,14 60,13 64,18 62,23 55,23" fill="#e0e0e0"/><polygon points="78,45 82,40 88,41 91,47 88,50 79,50" fill="#e4e4e4"/><polygon points="7,118 4,115 4,110 9,107 13,109 15,113 11,117" fill="#e0e0e0"/><polygon points="21,104 16,105 12,102 13,98 19,95 23,98" fill="#dcdcdc"/><polygon points="41,4 43,9 40,11 32,12 28,10 28,6 34,3" fill="#e6e6e6"/><polygon points="161,86 152,88 149,83 151,76 153,73 161,75 164,81" fill="#e0e0e0"/><polygon points="238,83 239,77 245,72 254,73 258,82 255,86 244,89" fill="#606060"/><polygon points="365,66 353,68 350,61 351,43 361,42 366,53" fill="#555555"/><polygon points="345,85 337,81 335,72 341,65 347,65 353,73 350,81" fill="#6a6a6a"/><polygon points="210,124 216,108 225,107 228,128 219,132" fill="#505050"/><polygon points="184,23 190,21 196,24 197,30 192,34 187,34 184,32" fill="#5a5a5a"/><polygon points="206,60 218,59 229,65 223,69 209,69 201,64" fill="#e0e0e0"/><polygon points="210,39 215,45 209,51 203,50 201,42" fill="#e4e4e4"/><polygon points="319,21 326,25 325,32 320,34 317,28" fill="#dcdcdc"/><polygon points="333,69 337,71 338,76 337,80 332,80 329,76 330,73" fill="#e0e0e0"/><polygon points="364,106 365,113 360,118 354,114 354,107 359,103" fill="#d0d0d0"/><polygon points="353,124 362,123 366,131 357,136 351,132" fill="#d8d8d8"/><polygon points="257,131 265,128 270,131 269,135 260,135" fill="#e8e8e8"/><polygon points="196,9 192,5 195,2 202,0 205,4 205,8 200,10" fill="#e4e4e4"/><polygon points="266,110 265,106 269,103 272,105 273,109 269,111" fill="#e4e4e4"/><polygon points="71,215 70,206 82,200 88,205 91,214 84,219 75,218" fill="#505050"/><polygon points="161,210 151,202 154,192 166,190 174,197 172,208" fill="#5a5a5a"/><polygon points="162,210 170,211 173,220 172,234 162,236 159,226" fill="#555555"/><polygon points="122,162 131,162 136,171 130,175 119,169" fill="#606060"/><polygon points="15,216 13,227 6,232 -0,223 2,212 10,208" fill="#a0a0a0"/><polygon points="53,162 54,173 47,177 39,166 41,157" fill="#d8d8d8"/><polygon points="141,183 147,181 160,184 159,190 146,193 139,190" fill="#e0e0e0"/><polygon points="96,219 106,213 112,215 115,223 107,228 97,224" fill="#d8d8d8"/><polygon points="109,189 106,192 99,190 98,184 104,179 110,183" fill="#e0e0e0"/><polygon points="-1,175 6,171 13,174 13,180 7,183 2,182" fill="#c0c0c0"/><polygon points="22,231 25,224 32,224 39,232 34,235 25,234" fill="#d0d0d0"/><polygon points="53,228 49,230 44,229 43,223 47,220 52,220 54,224" fill="#e0e0e0"/><polygon points="99,238 100,244 95,248 90,246 89,243 91,238 96,236" fill="#e0e0e0"/><polygon points="42,253 45,249 53,247 60,252 57,258 48,260" fill="#d8d8d8"/><polygon points="144,240 152,238 154,243 151,251 143,246" fill="#d0d0d0"/><polygon points="6,167 8,163 14,162 17,166 14,170 9,171" fill="#e4e4e4"/><polygon points="89,173 90,169 95,168 97,171 98,174 93,177 91,176" fill="#e4e4e4"/><polygon points="129,185 124,189 120,186 121,181 125,180 130,182" fill="#e4e4e4"/><polygon points="228,151 228,161 223,166 214,160 215,151 220,149" fill="#5a5a5a"/><polygon points="282,171 280,165 284,157 294,155 298,162 296,169 291,175" fill="#505050"/><polygon points="365,237 365,250 359,253 353,243 359,236" fill="#8a8a8a"/><polygon points="258,243 260,238 269,236 273,239 275,245 269,250 262,249" fill="#555555"/><polygon points="200,162 209,168 209,179 202,189 197,185 196,168" fill="#c8c8c8"/><polygon points="361,178 356,183 345,180 346,173 357,171" fill="#d8d8d8"/><polygon points="335,203 334,198 342,193 345,199 341,206" fill="#d0d0d0"/><polygon points="278,206 271,208 268,198 271,193 279,198" fill="#c8c8c8"/><polygon points="255,193 257,198 254,205 245,202 246,196" fill="#d0d0d0"/><polygon points="296,256 294,252 294,243 300,240 306,242 307,254 304,258" fill="#c0c0c0"/><polygon points="184,233 186,226 190,227 192,233 187,236" fill="#e0e0e0"/><polygon points="254,259 247,259 245,254 251,252 257,251 261,256" fill="#e0e0e0"/><polygon points="265,144 257,142 258,139 265,138 270,141" fill="#e4e4e4"/><polygon points="333,230 337,234 336,236 332,238 329,235 329,232" fill="#e4e4e4"/><polygon points="356,203 363,203 364,212 358,214 354,208" fill="#e0e0e0"/><polygon points="325,230 325,235 320,237 317,234 317,229 322,229" fill="#e0e0e0"/><polygon points="192,226 187,228 185,221 189,215 191,217" fill="#e4e4e4"/></g><polygon points="220,33 226,24 241,18 257,25 258,38 251,55 241,64 231,55" fill="#8e8e8e" stroke="#0a0a0a" stroke-width="0.9"/><polygon points="236,21 247,20 253,24 246,30 242,50 233,47 237,36" fill="#dedede"/><polygon points="244,27 257,26 258,38 251,45 245,38" fill="#525252"/><polygon points="233,45 246,43 254,46 249,58 241,63 233,56" fill="#4e4e4e"/><polygon points="264,32 271,18 281,14 301,14 309,20 317,35 325,45 323,53 309,53 294,46 279,46 269,40" fill="#b6b6c2" stroke="#0a0a0a" stroke-width="0.9"/><path d="M286.0 12.0h4.0v4.0h-4.0zM294.0 12.0h4.0v4.0h-4.0zM274.0 16.0h4.0v4.0h-4.0zM282.0 16.0h4.0v4.0h-4.0zM290.0 16.0h4.0v4.0h-4.0zM298.0 16.0h4.0v4.0h-4.0zM270.0 20.0h4.0v4.0h-4.0zM278.0 20.0h4.0v4.0h-4.0zM302.0 20.0h4.0v4.0h-4.0zM266.0 24.0h4.0v4.0h-4.0zM306.0 24.0h4.0v4.0h-4.0zM270.0 28.0h4.0v4.0h-4.0zM310.0 28.0h4.0v4.0h-4.0zM266.0 32.0h4.0v4.0h-4.0zM306.0 32.0h4.0v4.0h-4.0zM314.0 32.0h4.0v4.0h-4.0zM270.0 36.0h4.0v4.0h-4.0zM278.0 36.0h4.0v4.0h-4.0zM310.0 36.0h4.0v4.0h-4.0zM274.0 40.0h4.0v4.0h-4.0zM282.0 40.0h4.0v4.0h-4.0zM290.0 40.0h4.0v4.0h-4.0zM298.0 40.0h4.0v4.0h-4.0zM314.0 40.0h4.0v4.0h-4.0zM294.0 44.0h4.0v4.0h-4.0zM302.0 44.0h4.0v4.0h-4.0zM310.0 44.0h4.0v4.0h-4.0zM318.0 44.0h4.0v4.0h-4.0zM306.0 48.0h4.0v4.0h-4.0zM314.0 48.0h4.0v4.0h-4.0z" fill="#e8e070" opacity="0.95"/><polygon points="147,130 155,127 165,134 169,142 167,151 156,153 147,149 143,140" fill="#f2f2f6" stroke="#0a0a0a" stroke-width="0.9"/><path d="M148 139.5h17v7.5h-17z M152 135h10v16h-10z" fill="#f0ec80"/><rect x="155" y="141" width="4" height="4" fill="#f4f4f8"/><polygon points="283,70 300,62 308,66 301,90 287,94 281,84" fill="#d8d8d8" stroke="#0a0a0a" stroke-width="0.9"/><g font-family="Liberation Sans" font-size="6.8" fill="#22c022"><text x="282" y="12.5">Test sample 3</text><text x="216" y="119">Test sample 2</text><text x="153" y="135.4">Test sample 1</text></g><path d="M219.5 125.5 L223.5 125.5 M221.5 123.5 L221.5 127.5" stroke="#c0a020" stroke-width="0.7"/><rect x="0" y="255" width="366" height="22" fill="#000" opacity="0.55"/><text x="6" y="265.5" font-family="Liberation Sans" font-weight="bold" font-size="7" fill="#f0f0f0">Test sample</text><text x="6" y="274" font-family="Liberation Sans" font-weight="bold" font-size="7" fill="#f0f0f0" xml:space="preserve">BSE    MAG: 200x    HV: 15 kV    WD: 20 mm</text><path d="M283 270.5 L356 270.5 M283 267.5 L283 273.5 M356 267.5 L356 273.5" stroke="#f0f0f0" stroke-width="1"/><text x="319.5" y="265.5" text-anchor="middle" font-family="Liberation Sans" font-weight="bold" font-size="7" fill="#f0f0f0">200 µm</text></svg>
<div class="t" style="left:51px;top:390px;font-size:6px;color:#a8a8a8" xml:space="preserve">Single &nbsp;&nbsp;&nbsp;&nbsp;&nbsp; 1000 x 750 &nbsp; 1.0 x 1.0 mm</div>
<div class="tb" style="left:418px;top:113px"><svg class="a" style="left:9.5px;top:4px" width="10" height="8" viewBox="0 0 10 8"><path d="M0.5 2.2 L3.2 0 L3.2 1.4 L9.5 1.4 L9.5 3 L3.2 3 L3.2 4.4 Z M9.5 5.8 L6.8 3.6 L6.8 5 L0.5 5 L0.5 6.6 L6.8 6.6 L6.8 8 Z" fill="#2a62b8"/></svg><span>I/O</span></div>
<div class="tb" style="left:418px;top:215px"><svg class="a" style="left:9px;top:3px" width="11" height="9" viewBox="0 0 11 9"><path d="M1 1 L1 8 L10 8" stroke="#555" stroke-width="0.8" fill="none"/><circle cx="4" cy="5" r="1" fill="#e03030"/><circle cx="7" cy="3" r="1" fill="#3060d0"/></svg><span>Positions</span></div>
<div class="tb" style="left:418px;top:244px"><svg class="a" style="left:10px;top:3px" width="9" height="9" viewBox="0 0 9 9"><path d="M1 1 L8 1 L4.5 6 Z" fill="#e05a20"/><path d="M1 8 L8 8" stroke="#888" stroke-width="1"/></svg><span>Beam</span></div>
<div class="tb" style="left:418px;top:274px"><svg class="a" style="left:9px;top:4px" width="11" height="6" viewBox="0 0 11 6"><rect x="0" y="0" width="2.5" height="6" fill="#e03030"/><rect x="2.7" y="0" width="2.5" height="6" fill="#30b040"/><rect x="5.4" y="0" width="2.5" height="6" fill="#3060e0"/><rect x="8.1" y="0" width="2.5" height="6" fill="#f0c020"/></svg><span>Mode</span></div>
<div class="tb" style="left:418px;top:304px"><svg class="a" style="left:8px;top:3px" width="13" height="9" viewBox="0 0 13 9"><path d="M1 8 L3 5 L6 6 L9 3 L12 5 L12 8 Z" fill="#f0d040"/><path d="M1 8 L12 8" stroke="#555" stroke-width="0.8"/></svg><span>Histogram</span></div>
<div class="tb" style="left:418px;top:333px"><svg class="a" style="left:9px;top:2px" width="11" height="11" viewBox="0 0 11 11"><circle cx="6.5" cy="4.5" r="3" fill="#cfe4f8" stroke="#4080c0" stroke-width="1"/><path d="M4.3 6.7 L1 10" stroke="#c09030" stroke-width="1.6"/></svg><span>Zoom</span></div>
<div class="tb" style="left:418px;top:363px"><svg class="a" style="left:9px;top:2px" width="11" height="11" viewBox="0 0 11 11"><circle cx="5.5" cy="7" r="3.6" fill="#f0c030" stroke="#555" stroke-width="0.7"/><path d="M3 1 L3 4.5 M3 1 L6 1" stroke="#333" stroke-width="1"/></svg><span>Options</span></div>
<div class="a" style="left:443px;top:264px;width:0;height:0;border-left:3px solid transparent;border-bottom:3px solid #6a9ad8"></div>
<div class="a" style="left:443px;top:294px;width:0;height:0;border-left:3px solid transparent;border-bottom:3px solid #6a9ad8"></div>
<div class="a" style="left:452px;top:90px;width:2px;height:428px;background:#cbcbcb;border-right:1px solid #f8f8f8"></div>
<div class="a" style="left:57px;top:474px;width:20px;height:15px;border:1px solid #c0c0c0;border-radius:2px;background:linear-gradient(#f8f8f8,#dcdcdc);border:1px solid #6a9ade;background:linear-gradient(#f6f8fa,#e0e4ea)"><svg class="a" style="left:4px;top:2px" width="11" height="10" viewBox="0 0 11 10"><path d="M1 1 L6 1 L4.5 2.5 L9.5 7.5 L8 9 L3 4 L1 6 Z" fill="#f0c040" stroke="#8a6a20" stroke-width="0.6"/></svg></div>
<div class="a" style="left:81px;top:474px;width:20px;height:15px;border:1px solid #c0c0c0;border-radius:2px;background:linear-gradient(#f8f8f8,#dcdcdc);"><div class="a" style="left:8px;top:5.5px;width:3px;height:3px;background:#556"></div></div>
<div class="a" style="left:105px;top:474px;width:20px;height:15px;border:1px solid #c0c0c0;border-radius:2px;background:linear-gradient(#f8f8f8,#dcdcdc);"><div class="a" style="left:4px;top:3px;width:11px;height:8px;background:#8aa0c0;border:1px solid #506080"></div></div>
<div class="a" style="left:129px;top:474px;width:20px;height:15px;border:1px solid #c0c0c0;border-radius:2px;background:linear-gradient(#f8f8f8,#dcdcdc);"><div class="a" style="left:3.5px;top:2.5px;width:12px;height:9px;border-radius:50%;background:#8aa0c0;border:1px solid #506080"></div></div>
<div class="a" style="left:153px;top:474px;width:20px;height:15px;border:1px solid #c0c0c0;border-radius:2px;background:linear-gradient(#f8f8f8,#dcdcdc);"><svg class="a" style="left:3px;top:2px" width="14" height="10" viewBox="0 0 14 10"><path d="M0.5 9.5 L4 2 L8 6 L10 3 L13.5 9.5 Z" fill="#8aa0c0" stroke="#506080" stroke-width="0.7"/></svg></div>
<div class="a" style="left:178px;top:474px;width:20px;height:15px;border:1px solid #c0c0c0;border-radius:2px;background:linear-gradient(#f8f8f8,#dcdcdc);"><svg class="a" style="left:3px;top:3px" width="14" height="8" viewBox="0 0 14 8"><g fill="#506070"><rect x="0" y="0" width="2.5" height="2.5"/><rect x="3.7" y="0" width="2.5" height="2.5"/><rect x="7.4" y="0" width="2.5" height="2.5"/><rect x="11.1" y="0" width="2.5" height="2.5"/><rect x="0" y="4.5" width="2.5" height="2.5"/><rect x="3.7" y="4.5" width="2.5" height="2.5"/><rect x="7.4" y="4.5" width="2.5" height="2.5"/><rect x="11.1" y="4.5" width="2.5" height="2.5"/></g></svg></div>
<div class="a" style="left:204px;top:474.5px;width:7px;height:7px;border-radius:50%;border:1px solid #888;background:#fafafa"><div class="a" style="left:1.5px;top:1.5px;width:3px;height:3px;border-radius:50%;background:#222"></div></div>
<div class="t" style="left:213px;top:474.0px;font-size:7.2px;color:#222">Grid</div>
<div class="a" style="left:204px;top:484.5px;width:7px;height:7px;border-radius:50%;border:1px solid #888;background:#fafafa"></div>
<div class="t" style="left:213px;top:484.0px;font-size:7.2px;color:#222">Random</div>
<div class="a" style="left:204px;top:494.5px;width:7px;height:7px;border-radius:50%;border:1px solid #888;background:#fafafa"></div>
<div class="t" style="left:213px;top:494.0px;font-size:7.2px;color:#222">Both</div>
<div class="a" style="left:205px;top:505px;width:38px;height:12px;border:1px solid #c8c8c8;background:#fbfbfb"></div>
<div class="t" style="left:208px;top:507.5px;font-size:7px;color:#222">100</div>
<div class="btn" style="left:57px;top:496px;width:61px;height:12px;line-height:10px;font-size:7.2px">Select all</div>
<div class="btn" style="left:129px;top:496px;width:44px;height:12px;line-height:10px;font-size:7.2px">Delete</div>
<div class="t" style="left:470.5px;top:101px;font-size:5px;color:#444">&#9654;</div>
<div class="t" style="left:479.5px;top:100px;font-size:7.8px;color:#333">cps/eV</div>
<svg class="a" style="left:450px;top:90px" width="520" height="430" viewBox="0 0 520 430"><rect x="28.600000000000023" y="18" width="474.9" height="383.7" fill="#fdfcfa"/><clipPath id="pc"><rect x="28.600000000000023" y="18" width="474.9" height="383.7"/></clipPath><g clip-path="url(#pc)"><path d="M478.6,491.7 L478.6,491.7 L479.1,491.7 L479.6,491.7 L480.1,491.7 L480.6,491.7 L481.1,491.7 L481.6,491.7 L482.1,491.7 L482.6,491.7 L483.1,491.6 L483.6,491.2 L484.1,489.8 L484.6,487.0 L485.1,484.1 L485.6,483.7 L486.1,486.2 L486.6,488.8 L487.1,489.0 L487.6,485.8 L488.1,478.2 L488.6,465.2 L489.1,448.1 L489.6,431.6 L490.1,422.4 L490.6,424.6 L491.1,436.8 L491.6,451.9 L492.1,461.8 L492.6,463.1 L493.1,461.8 L493.6,466.2 L494.1,475.8 L494.6,484.6 L495.1,488.6 L495.6,490.6 L496.1,491.1 L496.6,489.9 L497.1,489.7 L497.6,489.2 L498.1,490.1 L498.6,489.2 L499.1,489.0 L499.6,490.0 L500.1,488.1 L500.6,488.1 L501.1,486.0 L501.6,487.7 L502.1,487.9 L502.6,486.4 L503.1,487.1 L503.6,486.2 L504.1,487.3 L504.6,486.5 L505.1,485.4 L505.6,485.6 L506.1,485.9 L506.6,487.0 L507.1,485.2 L507.6,485.4 L508.1,484.4 L508.6,484.8 L509.1,483.6 L509.6,484.7 L510.1,484.2 L510.6,483.4 L511.1,485.3 L511.6,484.3 L512.1,484.2 L512.6,480.9 L513.1,483.3 L513.6,482.1 L514.1,482.0 L514.6,482.9 L515.1,484.3 L515.6,480.9 L516.1,482.5 L516.6,480.8 L517.1,483.3 L517.6,481.9 L518.1,479.4 L518.6,478.9 L519.1,482.5 L519.6,482.3 L520.1,480.3 L520.6,479.0 L521.1,479.2 L521.6,479.1 L522.1,481.1 L522.6,478.9 L523.1,478.2 L523.6,480.5 L524.1,482.0 L524.6,481.1 L525.1,479.0 L525.6,482.6 L526.1,480.4 L526.6,481.7 L527.1,480.6 L527.6,480.8 L528.1,480.5 L528.6,478.5 L529.1,480.1 L529.6,478.9 L530.1,481.0 L530.6,481.5 L531.1,480.4 L531.6,484.9 L532.1,481.1 L532.6,480.9 L533.1,482.9 L533.6,480.6 L534.1,482.1 L534.6,484.7 L535.1,481.7 L535.6,482.8 L536.1,482.3 L536.6,481.9 L537.1,480.1 L537.6,481.6 L538.1,481.9 L538.6,481.4 L539.1,484.3 L539.6,480.4 L540.1,483.5 L540.6,481.6 L541.1,483.7 L541.6,483.5 L542.1,482.8 L542.6,479.9 L543.1,481.5 L543.6,483.3 L544.1,482.9 L544.6,484.1 L545.1,482.7 L545.6,483.5 L546.1,481.9 L546.6,484.5 L547.1,483.3 L547.6,484.0 L548.1,483.9 L548.6,482.2 L549.1,483.0 L549.6,482.4 L550.1,481.7 L550.6,481.8 L551.1,485.0 L551.6,482.7 L552.1,485.6 L552.6,483.6 L553.1,481.2 L553.6,483.8 L554.1,484.1 L554.6,483.5 L555.1,483.7 L555.6,483.7 L556.1,484.7 L556.6,482.6 L557.1,482.9 L557.6,484.2 L558.1,483.6 L558.6,483.3 L559.1,482.9 L559.6,483.7 L560.1,483.4 L560.6,484.6 L561.1,485.6 L561.6,484.9 L562.1,483.2 L562.6,483.3 L563.1,484.3 L563.6,485.2 L564.1,484.2 L564.6,482.7 L565.1,483.1 L565.6,485.5 L566.1,484.8 L566.6,486.4 L567.1,486.1 L567.6,484.7 L568.1,484.9 L568.6,483.9 L569.1,483.6 L569.6,484.1 L570.1,483.6 L570.6,485.7 L571.1,486.4 L571.6,484.6 L572.1,482.3 L572.6,484.9 L573.1,486.6 L573.6,485.1 L574.1,483.8 L574.6,486.6 L575.1,484.6 L575.6,486.2 L576.1,484.2 L576.6,484.7 L577.1,485.3 L577.6,483.5 L578.1,486.1 L578.6,486.5 L579.1,483.8 L579.6,486.7 L580.1,483.5 L580.6,485.9 L581.1,487.0 L581.6,486.0 L582.1,485.8 L582.6,485.8 L583.1,486.3 L583.6,485.0 L584.1,488.5 L584.6,486.7 L585.1,486.5 L585.6,484.3 L586.1,488.3 L586.6,486.6 L587.1,487.5 L587.6,487.0 L588.1,485.7 L588.6,486.0 L589.1,485.0 L589.6,487.1 L590.1,486.2 L590.6,485.4 L591.1,485.7 L591.6,486.9 L592.1,485.5 L592.6,487.6 L593.1,484.9 L593.6,486.6 L594.1,486.9 L594.6,486.5 L595.1,486.0 L595.6,485.1 L596.1,487.0 L596.6,487.3 L597.1,486.4 L597.6,487.8 L598.1,488.6 L598.6,486.2 L599.1,487.4 L599.6,486.0 L600.1,488.1 L600.6,489.9 L601.1,486.9 L601.6,487.0 L602.1,485.7 L602.6,486.7 L603.1,487.0 L603.6,486.7 L604.1,487.7 L604.6,487.3 L605.1,488.6 L605.6,486.9 L606.1,488.2 L606.6,487.9 L607.1,486.8 L607.6,486.6 L608.1,488.5 L608.6,485.7 L609.1,488.1 L609.6,486.8 L610.1,486.7 L610.6,487.4 L611.1,487.5 L611.6,486.0 L612.1,486.9 L612.6,487.3 L613.1,489.3 L613.6,488.1 L614.1,485.7 L614.6,484.9 L615.1,482.0 L615.6,473.6 L616.1,458.1 L616.6,431.6 L617.1,393.4 L617.6,341.3 L618.1,282.4 L618.6,220.1 L619.1,172.4 L619.6,146.2 L620.1,147.9 L620.6,181.5 L621.1,234.6 L621.6,296.3 L622.1,355.6 L622.6,402.7 L623.1,438.3 L623.6,461.8 L624.1,475.6 L624.6,481.8 L625.1,486.1 L625.6,487.1 L626.1,487.7 L626.6,488.1 L627.1,486.8 L627.6,486.5 L628.1,486.5 L628.6,488.3 L629.1,483.5 L629.6,481.6 L630.1,478.3 L630.6,472.0 L631.1,463.7 L631.6,455.8 L632.1,448.8 L632.6,444.2 L633.1,442.3 L633.6,443.3 L634.1,449.0 L634.6,456.7 L635.1,464.4 L635.6,471.5 L636.1,477.2 L636.6,480.2 L637.1,486.2 L637.6,486.5 L638.1,488.0 L638.6,488.1 L639.1,487.5 L639.6,487.7 L640.1,488.9 L640.6,489.3 L641.1,489.9 L641.6,488.9 L642.1,487.9 L642.6,489.1 L643.1,488.3 L643.6,488.4 L644.1,488.6 L644.6,488.1 L645.1,489.1 L645.6,489.6 L646.1,489.9 L646.6,488.3 L647.1,489.3 L647.6,489.3 L648.1,488.4 L648.6,489.7 L649.1,487.7 L649.6,488.6 L650.1,489.5 L650.6,489.6 L651.1,488.3 L651.6,490.1 L652.1,489.7 L652.6,489.2 L653.1,489.0 L653.6,489.2 L654.1,488.9 L654.6,489.5 L655.1,489.3 L655.6,488.3 L656.1,488.8 L656.6,489.6 L657.1,488.0 L657.6,490.8 L658.1,489.3 L658.6,488.8 L659.1,488.6 L659.6,489.3 L660.1,489.7 L660.6,489.0 L661.1,489.6 L661.6,489.1 L662.1,491.5 L662.6,489.2 L663.1,490.0 L663.6,488.8 L664.1,488.9 L664.6,489.0 L665.1,489.8 L665.6,489.2 L666.1,489.8 L666.6,489.4 L667.1,489.6 L667.6,490.2 L668.1,488.1 L668.6,489.1 L669.1,491.1 L669.6,489.0 L670.1,490.6 L670.6,489.8 L671.1,490.1 L671.6,490.0 L672.1,489.5 L672.6,489.9 L673.1,490.7 L673.6,489.7 L674.1,489.4 L674.6,488.5 L675.1,490.0 L675.6,490.6 L676.1,490.0 L676.6,489.3 L677.1,490.4 L677.6,490.3 L678.1,489.4 L678.6,489.8 L679.1,489.6 L679.6,490.2 L680.1,490.4 L680.6,490.1 L681.1,489.9 L681.6,490.1 L682.1,489.6 L682.6,489.5 L683.1,489.5 L683.6,489.6 L684.1,490.5 L684.6,490.7 L685.1,489.4 L685.6,489.9 L686.1,489.9 L686.6,490.7 L687.1,490.1 L687.6,490.4 L688.1,490.5 L688.6,490.4 L689.1,491.0 L689.6,489.9 L690.1,489.2 L690.6,490.5 L691.1,490.0 L691.6,490.8 L692.1,489.6 L692.6,488.8 L693.1,490.9 L693.6,490.2 L694.1,489.1 L694.6,489.8 L695.1,490.0 L695.6,491.4 L696.1,490.2 L696.6,489.5 L697.1,489.2 L697.6,489.7 L698.1,490.5 L698.6,490.6 L699.1,491.3 L699.6,490.8 L700.1,489.4 L700.6,490.2 L701.1,491.0 L701.6,489.3 L702.1,491.3 L702.6,489.4 L703.1,490.4 L703.6,490.0 L704.1,489.8 L704.6,490.1 L705.1,489.4 L705.6,490.2 L706.1,490.5 L706.6,490.7 L707.1,491.2 L707.6,490.7 L708.1,489.7 L708.6,489.8 L709.1,489.4 L709.6,488.6 L710.1,489.9 L710.6,490.0 L711.1,491.1 L711.6,490.5 L712.1,489.0 L712.6,490.0 L713.1,490.4 L713.6,490.2 L714.1,491.5 L714.6,490.9 L715.1,491.2 L715.6,491.7 L716.1,489.9 L716.6,489.8 L717.1,490.5 L717.6,490.2 L718.1,491.0 L718.6,490.1 L719.1,489.9 L719.6,489.5 L720.1,489.5 L720.6,490.1 L721.1,490.5 L721.6,490.9 L722.1,490.8 L722.6,490.1 L723.1,490.1 L723.6,490.4 L724.1,489.5 L724.6,490.1 L725.1,490.5 L725.6,490.6 L726.1,490.4 L726.6,491.1 L727.1,491.1 L727.6,490.3 L728.1,490.9 L728.6,490.7 L729.1,489.8 L729.6,490.6 L730.1,489.8 L730.6,490.5 L731.1,489.6 L731.6,490.3 L732.1,491.6 L732.6,489.8 L733.1,490.7 L733.6,491.7 L734.1,490.5 L734.6,490.5 L735.1,491.3 L735.6,490.9 L736.1,490.3 L736.6,489.8 L737.1,489.9 L737.6,489.9 L738.1,490.0 L738.6,491.7 L739.1,491.0 L739.6,490.5 L740.1,491.7 L740.6,490.2 L741.1,490.1 L741.6,491.1 L742.1,490.9 L742.6,491.2 L743.1,490.7 L743.6,490.7 L744.1,490.7 L744.6,491.2 L745.1,490.4 L745.6,490.9 L746.1,490.1 L746.6,490.5 L747.1,491.5 L747.6,491.5 L748.1,490.6 L748.6,491.0 L749.1,490.4 L749.6,490.2 L750.1,490.7 L750.6,491.6 L751.1,491.4 L751.6,490.4 L752.1,491.3 L752.6,490.1 L753.1,490.8 L753.6,490.4 L754.1,491.2 L754.6,490.8 L755.1,491.7 L755.6,490.9 L756.1,490.4 L756.6,491.2 L757.1,491.2 L757.6,490.8 L758.1,490.7 L758.6,491.2 L759.1,490.4 L759.6,491.7 L760.1,490.2 L760.6,491.5 L761.1,491.2 L761.6,490.1 L762.1,491.3 L762.6,491.7 L763.1,490.8 L763.6,491.3 L764.1,491.4 L764.6,491.2 L765.1,491.2 L765.6,491.3 L766.1,491.4 L766.6,489.9 L767.1,491.2 L767.6,490.3 L768.1,491.6 L768.6,490.5 L769.1,491.5 L769.6,491.1 L770.1,490.5 L770.6,491.1 L771.1,491.7 L771.6,491.1 L772.1,490.9 L772.6,490.5 L773.1,491.4 L773.6,491.0 L774.1,490.8 L774.6,491.7 L775.1,490.9 L775.6,491.3 L776.1,490.6 L776.6,490.9 L777.1,491.0 L777.6,491.7 L778.1,490.9 L778.6,491.1 L779.1,491.4 L779.6,491.2 L780.1,491.6 L780.6,490.8 L781.1,490.6 L781.6,490.6 L782.1,491.2 L782.6,490.0 L783.1,490.5 L783.6,491.4 L784.1,491.0 L784.6,491.7 L785.1,491.0 L785.6,490.6 L786.1,490.3 L786.6,491.1 L787.1,491.7 L787.6,491.0 L788.1,490.2 L788.6,490.9 L789.1,490.3 L789.6,490.5 L790.1,490.1 L790.6,490.6 L791.1,491.3 L791.6,490.7 L792.1,489.7 L792.6,491.2 L793.1,491.7 L793.6,489.9 L794.1,490.8 L794.6,491.3 L795.1,491.3 L795.6,491.7 L796.1,490.6 L796.6,490.9 L797.1,491.3 L797.6,491.2 L798.1,491.2 L798.6,490.4 L799.1,491.1 L799.6,490.3 L800.1,491.4 L800.6,491.3 L801.1,491.2 L801.6,491.3 L802.1,491.0 L802.6,490.5 L803.1,490.4 L803.6,491.5 L804.1,490.4 L804.6,491.0 L805.1,490.2 L805.6,491.1 L806.1,491.4 L806.6,490.6 L807.1,490.7 L807.6,491.2 L808.1,491.0 L808.6,491.0 L809.1,490.9 L809.6,491.7 L810.1,491.6 L810.6,491.0 L811.1,490.9 L811.6,491.3 L812.1,491.7 L812.6,490.4 L813.1,491.2 L813.6,491.6 L814.1,490.2 L814.6,490.5 L815.1,490.5 L815.6,490.6 L816.1,490.8 L816.6,491.5 L817.1,491.0 L817.6,490.9 L818.1,490.7 L818.6,490.8 L819.1,491.5 L819.6,491.4 L820.1,491.2 L820.6,491.2 L821.1,491.5 L821.6,491.7 L822.1,491.7 L822.6,490.9 L823.1,491.1 L823.6,490.8 L824.1,491.7 L824.6,491.3 L825.1,490.6 L825.6,491.7 L826.1,491.6 L826.6,491.7 L827.1,490.5 L827.6,491.1 L828.1,491.4 L828.6,491.0 L829.1,491.1 L829.6,490.6 L830.1,490.5 L830.6,490.6 L831.1,490.9 L831.6,490.7 L832.1,490.7 L832.6,490.5 L833.1,491.7 L833.6,490.9 L834.1,491.1 L834.6,491.0 L835.1,491.2 L835.6,491.1 L836.1,490.9 L836.6,491.0 L837.1,491.0 L837.6,491.6 L838.1,491.7 L838.6,491.5 L839.1,491.7 L839.6,491.4 L840.1,491.5 L840.6,491.7 L841.1,491.7 L841.6,491.3 L842.1,491.4 L842.6,490.1 L843.1,490.7 L843.6,491.5 L844.1,491.4 L844.6,491.6 L845.1,491.5 L845.6,491.3 L846.1,491.1 L846.6,491.4 L847.1,490.7 L847.6,490.8 L848.1,490.2 L848.6,491.7 L849.1,490.8 L849.6,491.3 L850.1,491.7 L850.6,491.3 L851.1,491.7 L851.6,491.1 L852.1,489.8 L852.6,490.5 L853.1,490.3 L853.6,490.6 L854.1,491.7 L854.6,490.9 L855.1,491.1 L855.6,490.9 L856.1,491.6 L856.6,491.7 L857.1,490.2 L857.6,490.6 L858.1,491.0 L858.6,491.4 L859.1,491.1 L859.6,491.7 L860.1,490.7 L860.6,491.1 L861.1,491.2 L861.6,491.4 L862.1,491.2 L862.6,491.1 L863.1,491.3 L863.6,490.7 L864.1,491.1 L864.6,491.2 L865.1,491.6 L865.6,490.6 L866.1,490.6 L866.6,490.8 L867.1,491.7 L867.6,491.3 L868.1,490.7 L868.6,491.1 L869.1,490.6 L869.6,491.4 L870.1,490.8 L870.6,490.9 L871.1,491.7 L871.6,491.4 L872.1,491.3 L872.6,491.5 L873.1,491.6 L873.6,490.4 L874.1,491.2 L874.6,490.8 L875.1,491.7 L875.6,491.7 L876.1,491.4 L876.6,491.0 L877.1,491.5 L877.6,490.9 L878.1,490.8 L878.6,491.4 L879.1,491.2 L879.6,491.5 L880.1,490.7 L880.6,490.4 L881.1,491.0 L881.6,491.4 L882.1,491.5 L882.6,491.3 L883.1,491.3 L883.6,491.7 L884.1,491.1 L884.6,491.7 L885.1,491.6 L885.6,491.2 L886.1,491.0 L886.6,491.7 L887.1,491.4 L887.6,490.8 L888.1,491.2 L888.6,491.7 L889.1,491.5 L889.6,490.9 L890.1,491.7 L890.6,491.3 L891.1,491.7 L891.6,491.1 L892.1,491.7 L892.6,491.4 L893.1,491.3 L893.6,491.7 L894.1,491.7 L894.6,491.5 L895.1,491.7 L895.6,491.6 L896.1,491.7 L896.6,491.2 L897.1,491.7 L897.6,491.7 L898.1,491.4 L898.6,491.2 L899.1,491.7 L899.6,491.5 L900.1,491.5 L900.6,491.7 L901.1,491.7 L901.6,491.5 L902.1,491.7 L902.6,491.7 L903.1,491.4 L903.6,491.5 L904.1,491.6 L904.6,491.7 L905.1,491.7 L905.6,491.4 L906.1,491.5 L906.6,491.7 L907.1,491.7 L907.6,491.5 L908.1,491.6 L908.6,491.4 L909.1,491.7 L909.6,491.4 L910.1,491.1 L910.6,491.3 L911.1,491.6 L911.6,491.4 L912.1,491.7 L912.6,491.7 L913.1,491.0 L913.6,491.7 L914.1,491.7 L914.6,491.4 L915.1,491.7 L915.6,491.7 L916.1,491.7 L916.6,491.1 L917.1,491.7 L917.6,491.7 L918.1,491.7 L918.6,491.4 L919.1,491.6 L919.6,491.5 L920.1,491.2 L920.6,491.6 L921.1,491.7 L921.6,491.7 L922.1,491.6 L922.6,491.3 L923.1,491.7 L923.6,491.7 L924.1,491.7 L924.6,491.4 L925.1,491.7 L925.6,491.6 L926.1,491.4 L926.6,491.7 L927.1,491.7 L927.6,491.5 L928.1,491.5 L928.6,491.3 L929.1,491.7 L929.6,491.3 L930.1,491.7 L930.6,491.7 L931.1,491.7 L931.6,491.7 L932.1,491.7 L932.6,491.3 L933.1,491.7 L933.6,491.7 L934.1,491.4 L934.6,491.7 L935.1,491.4 L935.6,491.7 L936.1,491.7 L936.6,491.7 L937.1,491.7 L937.6,491.4 L938.1,491.3 L938.6,491.2 L939.1,491.7 L939.6,491.7 L940.1,491.7 L940.6,491.7 L941.1,491.3 L941.6,491.3 L942.1,491.7 L942.6,491.1 L943.1,491.7 L943.6,491.5 L944.1,491.7 L944.6,491.7 L945.1,491.5 L945.6,491.7 L946.1,491.3 L946.6,491.7 L947.1,491.6 L947.6,491.7 L948.1,491.6 L948.6,491.7 L949.1,491.4 L949.6,491.5 L950.1,491.6 L950.6,491.7 L951.1,491.1 L951.6,491.7 L952.1,491.7 L952.6,491.4 L953.1,491.7 L953.5,491.7 Z" fill="#ff1a1a" transform="translate(-450,-90)"/><path d="M478.6,491.7 L478.6,491.7 L479.1,491.7 L479.6,491.7 L480.1,491.7 L480.6,491.7 L481.1,491.7 L481.6,491.7 L482.1,491.7 L482.6,491.7 L483.1,491.4 L483.6,489.8 L484.1,484.5 L484.6,473.9 L485.1,463.1 L485.6,462.0 L486.1,471.7 L486.6,483.0 L487.1,489.2 L487.6,491.3 L488.1,491.6 L488.6,491.7 L489.1,491.7 L489.6,491.7 L490.1,491.5 L490.6,489.9 L491.1,479.7 L491.6,443.2 L492.1,349.0 L492.6,205.6 L493.1,101.1 L493.6,122.8 L494.1,253.7 L494.6,386.6 L495.1,459.7 L495.6,484.5 L496.1,489.7 L496.6,490.3 L497.1,490.6 L497.6,489.6 L498.1,490.2 L498.6,491.7 L499.1,488.6 L499.6,489.7 L500.1,489.8 L500.6,488.9 L501.1,488.8 L501.6,488.8 L502.1,489.4 L502.6,488.4 L503.1,489.7 L503.6,487.1 L504.1,489.3 L504.6,488.2 L505.1,487.9 L505.6,487.6 L506.1,487.8 L506.6,486.3 L507.1,486.6 L507.6,471.4 L508.1,441.1 L508.6,388.1 L509.1,326.4 L509.6,297.9 L510.1,317.8 L510.6,376.4 L511.1,430.6 L511.6,467.5 L512.1,482.2 L512.6,482.4 L513.1,485.0 L513.6,485.7 L514.1,485.3 L514.6,486.6 L515.1,485.3 L515.6,482.6 L516.1,484.6 L516.6,481.7 L517.1,484.5 L517.6,483.1 L518.1,485.0 L518.6,482.1 L519.1,483.2 L519.6,485.1 L520.1,486.6 L520.6,484.4 L521.1,479.7 L521.6,469.4 L522.1,441.9 L522.6,397.6 L523.1,348.1 L523.6,314.5 L524.1,316.3 L524.6,355.8 L525.1,405.5 L525.6,448.0 L526.1,469.4 L526.6,481.5 L527.1,485.6 L527.6,484.8 L528.1,484.1 L528.6,477.0 L529.1,450.4 L529.6,380.7 L530.1,240.8 L530.6,101.1 L531.1,101.1 L531.6,101.1 L532.1,101.1 L532.6,101.1 L533.1,101.1 L533.6,242.8 L534.1,383.8 L534.6,451.9 L535.1,477.2 L535.6,484.7 L536.1,485.5 L536.6,484.1 L537.1,485.3 L537.6,485.5 L538.1,485.9 L538.6,487.0 L539.1,485.9 L539.6,484.4 L540.1,487.9 L540.6,485.8 L541.1,485.7 L541.6,486.5 L542.1,486.0 L542.6,485.4 L543.1,484.6 L543.6,485.6 L544.1,485.3 L544.6,486.6 L545.1,486.2 L545.6,486.9 L546.1,486.8 L546.6,487.6 L547.1,486.5 L547.6,485.8 L548.1,487.4 L548.6,487.0 L549.1,486.7 L549.6,487.3 L550.1,486.4 L550.6,487.1 L551.1,488.5 L551.6,488.4 L552.1,486.8 L552.6,486.9 L553.1,486.5 L553.6,487.3 L554.1,487.4 L554.6,489.1 L555.1,486.4 L555.6,488.6 L556.1,486.8 L556.6,488.8 L557.1,488.4 L557.6,487.7 L558.1,488.3 L558.6,488.5 L559.1,487.1 L559.6,487.3 L560.1,487.6 L560.6,488.3 L561.1,488.8 L561.6,488.5 L562.1,488.6 L562.6,488.1 L563.1,487.5 L563.6,488.3 L564.1,488.9 L564.6,488.8 L565.1,487.1 L565.6,488.1 L566.1,488.1 L566.6,488.1 L567.1,487.9 L567.6,488.3 L568.1,487.4 L568.6,487.7 L569.1,490.9 L569.6,488.6 L570.1,486.0 L570.6,489.6 L571.1,488.5 L571.6,487.7 L572.1,488.6 L572.6,487.5 L573.1,489.7 L573.6,489.7 L574.1,488.9 L574.6,489.3 L575.1,489.6 L575.6,488.3 L576.1,488.6 L576.6,488.8 L577.1,489.2 L577.6,488.6 L578.1,489.0 L578.6,489.5 L579.1,488.5 L579.6,488.7 L580.1,488.9 L580.6,488.4 L581.1,489.9 L581.6,489.1 L582.1,489.5 L582.6,488.0 L583.1,488.7 L583.6,487.5 L584.1,487.9 L584.6,489.4 L585.1,490.0 L585.6,488.8 L586.1,489.4 L586.6,489.4 L587.1,490.1 L587.6,488.8 L588.1,489.1 L588.6,489.0 L589.1,489.1 L589.6,490.0 L590.1,491.0 L590.6,489.6 L591.1,489.9 L591.6,489.8 L592.1,488.7 L592.6,489.5 L593.1,488.4 L593.6,489.3 L594.1,489.0 L594.6,489.1 L595.1,488.9 L595.6,490.5 L596.1,488.8 L596.6,489.5 L597.1,490.3 L597.6,489.2 L598.1,489.4 L598.6,488.7 L599.1,489.1 L599.6,489.4 L600.1,490.8 L600.6,488.5 L601.1,488.7 L601.6,489.2 L602.1,489.4 L602.6,488.9 L603.1,490.4 L603.6,489.3 L604.1,489.8 L604.6,490.5 L605.1,489.6 L605.6,489.6 L606.1,488.7 L606.6,489.2 L607.1,491.0 L607.6,491.2 L608.1,490.0 L608.6,490.1 L609.1,490.6 L609.6,490.9 L610.1,490.1 L610.6,490.7 L611.1,490.4 L611.6,489.4 L612.1,489.8 L612.6,490.5 L613.1,490.8 L613.6,490.2 L614.1,488.9 L614.6,490.4 L615.1,488.9 L615.6,490.6 L616.1,490.2 L616.6,489.7 L617.1,490.6 L617.6,490.1 L618.1,491.0 L618.6,489.7 L619.1,489.4 L619.6,490.6 L620.1,490.1 L620.6,490.5 L621.1,491.6 L621.6,488.5 L622.1,489.8 L622.6,489.7 L623.1,490.0 L623.6,490.2 L624.1,488.8 L624.6,491.4 L625.1,490.5 L625.6,490.6 L626.1,490.4 L626.6,489.9 L627.1,490.8 L627.6,491.2 L628.1,491.0 L628.6,490.1 L629.1,489.8 L629.6,489.9 L630.1,489.4 L630.6,490.7 L631.1,489.8 L631.6,490.0 L632.1,490.5 L632.6,490.9 L633.1,489.9 L633.6,490.9 L634.1,490.6 L634.6,491.0 L635.1,489.4 L635.6,490.5 L636.1,490.8 L636.6,490.6 L637.1,490.6 L637.6,490.5 L638.1,491.5 L638.6,491.2 L639.1,490.2 L639.6,489.9 L640.1,491.1 L640.6,490.5 L641.1,490.9 L641.6,491.7 L642.1,490.8 L642.6,491.2 L643.1,490.1 L643.6,490.7 L644.1,490.6 L644.6,491.5 L645.1,490.5 L645.6,491.7 L646.1,490.5 L646.6,489.8 L647.1,491.3 L647.6,490.2 L648.1,489.9 L648.6,490.8 L649.1,490.0 L649.6,490.6 L650.1,491.0 L650.6,491.7 L651.1,491.3 L651.6,491.5 L652.1,489.4 L652.6,490.6 L653.1,490.8 L653.6,491.5 L654.1,489.8 L654.6,491.4 L655.1,489.9 L655.6,490.1 L656.1,490.7 L656.6,491.1 L657.1,490.8 L657.6,491.5 L658.1,490.4 L658.6,489.9 L659.1,490.3 L659.6,490.2 L660.1,491.2 L660.6,490.6 L661.1,491.4 L661.6,491.1 L662.1,490.4 L662.6,489.5 L663.1,490.8 L663.6,490.8 L664.1,491.7 L664.6,490.7 L665.1,491.3 L665.6,491.6 L666.1,491.6 L666.6,490.8 L667.1,491.1 L667.6,490.5 L668.1,491.0 L668.6,490.9 L669.1,490.1 L669.6,490.5 L670.1,490.5 L670.6,490.1 L671.1,490.8 L671.6,491.4 L672.1,491.3 L672.6,491.7 L673.1,490.7 L673.6,491.1 L674.1,490.7 L674.6,490.5 L675.1,491.4 L675.6,490.8 L676.1,490.3 L676.6,490.9 L677.1,490.5 L677.6,491.1 L678.1,491.4 L678.6,491.1 L679.1,491.7 L679.6,490.6 L680.1,491.2 L680.6,490.3 L681.1,491.6 L681.6,490.9 L682.1,490.8 L682.6,491.1 L683.1,490.8 L683.6,491.4 L684.1,491.5 L684.6,491.7 L685.1,491.3 L685.6,491.4 L686.1,490.9 L686.6,491.2 L687.1,491.4 L687.6,491.4 L688.1,491.7 L688.6,491.2 L689.1,490.8 L689.6,491.7 L690.1,491.2 L690.6,490.7 L691.1,491.4 L691.6,491.0 L692.1,491.3 L692.6,489.8 L693.1,490.4 L693.6,490.5 L694.1,491.4 L694.6,490.7 L695.1,491.1 L695.6,490.9 L696.1,491.4 L696.6,491.0 L697.1,491.5 L697.6,490.9 L698.1,490.2 L698.6,491.7 L699.1,491.7 L699.6,490.8 L700.1,490.7 L700.6,491.3 L701.1,490.8 L701.6,490.9 L702.1,490.8 L702.6,490.4 L703.1,491.4 L703.6,490.8 L704.1,491.0 L704.6,491.5 L705.1,490.9 L705.6,491.7 L706.1,491.7 L706.6,490.6 L707.1,491.7 L707.6,490.3 L708.1,490.6 L708.6,491.4 L709.1,491.6 L709.6,491.7 L710.1,491.2 L710.6,491.7 L711.1,490.4 L711.6,491.7 L712.1,491.1 L712.6,491.7 L713.1,491.3 L713.6,490.5 L714.1,491.4 L714.6,491.6 L715.1,491.4 L715.6,491.0 L716.1,490.7 L716.6,491.3 L717.1,491.7 L717.6,491.0 L718.1,490.7 L718.6,490.1 L719.1,491.1 L719.6,491.1 L720.1,491.4 L720.6,490.8 L721.1,490.4 L721.6,491.7 L722.1,491.2 L722.6,491.7 L723.1,491.5 L723.6,491.3 L724.1,491.0 L724.6,491.6 L725.1,491.3 L725.6,490.6 L726.1,491.0 L726.6,490.9 L727.1,491.0 L727.6,491.3 L728.1,491.0 L728.6,491.0 L729.1,491.2 L729.6,490.7 L730.1,491.2 L730.6,490.8 L731.1,491.2 L731.6,490.9 L732.1,491.5 L732.6,491.5 L733.1,491.7 L733.6,490.7 L734.1,491.0 L734.6,491.1 L735.1,490.9 L735.6,491.6 L736.1,491.2 L736.6,491.5 L737.1,491.7 L737.6,491.4 L738.1,491.6 L738.6,490.6 L739.1,491.6 L739.6,491.5 L740.1,490.8 L740.6,491.3 L741.1,491.7 L741.6,491.1 L742.1,491.6 L742.6,490.5 L743.1,491.7 L743.6,491.6 L744.1,491.7 L744.6,491.6 L745.1,490.4 L745.6,491.3 L746.1,491.7 L746.6,491.1 L747.1,491.4 L747.6,491.3 L748.1,490.1 L748.6,490.4 L749.1,490.5 L749.6,490.5 L750.1,491.7 L750.6,491.7 L751.1,490.9 L751.6,491.1 L752.1,491.3 L752.6,491.3 L753.1,491.0 L753.6,491.0 L754.1,491.2 L754.6,491.1 L755.1,491.4 L755.6,491.4 L756.1,490.7 L756.6,491.4 L757.1,490.4 L757.6,491.0 L758.1,491.3 L758.6,490.8 L759.1,491.5 L759.6,491.4 L760.1,491.4 L760.6,491.3 L761.1,491.0 L761.6,490.4 L762.1,491.1 L762.6,491.7 L763.1,491.7 L763.6,491.7 L764.1,491.0 L764.6,490.9 L765.1,491.2 L765.6,491.1 L766.1,491.1 L766.6,491.1 L767.1,491.0 L767.6,491.2 L768.1,491.7 L768.6,490.9 L769.1,490.7 L769.6,491.7 L770.1,491.4 L770.6,491.7 L771.1,491.1 L771.6,491.4 L772.1,490.7 L772.6,490.8 L773.1,491.5 L773.6,491.5 L774.1,491.6 L774.6,491.1 L775.1,491.7 L775.6,491.1 L776.1,491.7 L776.6,490.9 L777.1,491.1 L777.6,491.7 L778.1,491.7 L778.6,491.3 L779.1,491.2 L779.6,491.7 L780.1,491.2 L780.6,490.7 L781.1,491.5 L781.6,491.7 L782.1,490.8 L782.6,491.2 L783.1,491.2 L783.6,491.1 L784.1,491.7 L784.6,491.6 L785.1,491.7 L785.6,491.7 L786.1,491.5 L786.6,491.7 L787.1,490.6 L787.6,491.1 L788.1,491.0 L788.6,491.7 L789.1,491.4 L789.6,491.4 L790.1,491.3 L790.6,491.1 L791.1,491.7 L791.6,491.7 L792.1,490.9 L792.6,490.4 L793.1,490.4 L793.6,491.5 L794.1,491.7 L794.6,491.3 L795.1,491.1 L795.6,490.6 L796.1,491.4 L796.6,491.7 L797.1,490.9 L797.6,491.7 L798.1,491.7 L798.6,491.1 L799.1,491.4 L799.6,491.7 L800.1,491.5 L800.6,491.5 L801.1,491.4 L801.6,491.7 L802.1,491.1 L802.6,491.5 L803.1,491.6 L803.6,490.9 L804.1,491.7 L804.6,491.0 L805.1,491.1 L805.6,491.5 L806.1,491.3 L806.6,491.7 L807.1,491.2 L807.6,491.7 L808.1,491.7 L808.6,491.2 L809.1,491.7 L809.6,491.3 L810.1,491.2 L810.6,490.9 L811.1,491.2 L811.6,490.9 L812.1,491.7 L812.6,491.5 L813.1,491.1 L813.6,490.9 L814.1,491.2 L814.6,491.6 L815.1,491.7 L815.6,491.7 L816.1,490.9 L816.6,491.7 L817.1,491.5 L817.6,491.1 L818.1,491.2 L818.6,491.7 L819.1,490.5 L819.6,491.3 L820.1,491.2 L820.6,491.0 L821.1,491.5 L821.6,491.1 L822.1,491.4 L822.6,491.7 L823.1,491.7 L823.6,491.2 L824.1,491.3 L824.6,491.4 L825.1,491.6 L825.6,491.5 L826.1,491.0 L826.6,490.9 L827.1,491.5 L827.6,491.3 L828.1,491.7 L828.6,491.7 L829.1,491.7 L829.6,491.7 L830.1,491.1 L830.6,491.7 L831.1,491.2 L831.6,491.1 L832.1,490.4 L832.6,491.6 L833.1,491.2 L833.6,490.7 L834.1,491.0 L834.6,491.7 L835.1,491.5 L835.6,491.7 L836.1,491.3 L836.6,491.1 L837.1,490.8 L837.6,491.1 L838.1,491.0 L838.6,490.9 L839.1,491.7 L839.6,491.1 L840.1,491.0 L840.6,491.4 L841.1,491.7 L841.6,491.3 L842.1,491.3 L842.6,491.1 L843.1,491.7 L843.6,491.5 L844.1,490.5 L844.6,490.8 L845.1,491.4 L845.6,491.5 L846.1,491.5 L846.6,491.7 L847.1,491.6 L847.6,491.4 L848.1,491.7 L848.6,491.4 L849.1,491.3 L849.6,491.7 L850.1,491.6 L850.6,491.7 L851.1,491.4 L851.6,491.3 L852.1,491.6 L852.6,491.3 L853.1,491.1 L853.6,491.1 L854.1,491.7 L854.6,491.5 L855.1,491.7 L855.6,491.7 L856.1,491.0 L856.6,491.1 L857.1,490.9 L857.6,491.1 L858.1,491.6 L858.6,491.3 L859.1,491.6 L859.6,490.8 L860.1,491.7 L860.6,491.2 L861.1,491.6 L861.6,491.1 L862.1,490.9 L862.6,491.6 L863.1,490.8 L863.6,490.9 L864.1,491.7 L864.6,490.6 L865.1,491.7 L865.6,491.7 L866.1,491.0 L866.6,491.7 L867.1,491.3 L867.6,491.4 L868.1,491.7 L868.6,490.7 L869.1,490.8 L869.6,491.3 L870.1,490.7 L870.6,491.4 L871.1,491.3 L871.6,491.5 L872.1,491.7 L872.6,491.5 L873.1,491.7 L873.6,491.2 L874.1,491.3 L874.6,491.6 L875.1,490.9 L875.6,491.2 L876.1,490.6 L876.6,491.5 L877.1,491.5 L877.6,491.7 L878.1,491.3 L878.6,491.4 L879.1,491.4 L879.6,490.7 L880.1,491.1 L880.6,491.6 L881.1,491.2 L881.6,491.5 L882.1,491.5 L882.6,491.5 L883.1,491.4 L883.6,491.1 L884.1,491.0 L884.6,491.4 L885.1,491.7 L885.6,491.4 L886.1,491.5 L886.6,491.5 L887.1,491.7 L887.6,491.4 L888.1,491.7 L888.6,490.9 L889.1,491.1 L889.6,491.1 L890.1,491.7 L890.6,491.3 L891.1,490.9 L891.6,491.5 L892.1,491.7 L892.6,491.4 L893.1,491.7 L893.6,491.0 L894.1,491.2 L894.6,491.7 L895.1,491.1 L895.6,490.9 L896.1,491.1 L896.6,491.1 L897.1,490.8 L897.6,491.3 L898.1,490.8 L898.6,491.5 L899.1,491.7 L899.6,491.5 L900.1,491.7 L900.6,491.2 L901.1,491.7 L901.6,491.2 L902.1,491.3 L902.6,490.7 L903.1,490.7 L903.6,491.6 L904.1,491.5 L904.6,491.5 L905.1,491.6 L905.6,490.6 L906.1,490.9 L906.6,491.5 L907.1,491.7 L907.6,491.6 L908.1,491.4 L908.6,490.7 L909.1,491.7 L909.6,490.8 L910.1,491.7 L910.6,491.2 L911.1,491.7 L911.6,491.6 L912.1,491.7 L912.6,491.1 L913.1,491.4 L913.6,491.7 L914.1,491.7 L914.6,491.4 L915.1,491.4 L915.6,491.7 L916.1,491.2 L916.6,491.4 L917.1,491.7 L917.6,491.7 L918.1,491.7 L918.6,491.1 L919.1,491.0 L919.6,491.5 L920.1,491.7 L920.6,491.7 L921.1,491.5 L921.6,491.7 L922.1,491.3 L922.6,491.7 L923.1,491.0 L923.6,490.9 L924.1,491.6 L924.6,491.7 L925.1,491.7 L925.6,491.4 L926.1,491.2 L926.6,491.7 L927.1,490.9 L927.6,491.7 L928.1,491.7 L928.6,491.1 L929.1,491.2 L929.6,491.7 L930.1,491.7 L930.6,491.7 L931.1,491.5 L931.6,491.3 L932.1,491.6 L932.6,491.3 L933.1,491.0 L933.6,491.5 L934.1,491.7 L934.6,491.7 L935.1,491.1 L935.6,490.7 L936.1,491.5 L936.6,491.2 L937.1,491.7 L937.6,491.6 L938.1,491.0 L938.6,491.6 L939.1,491.3 L939.6,491.3 L940.1,490.9 L940.6,491.3 L941.1,491.4 L941.6,491.5 L942.1,491.6 L942.6,491.0 L943.1,490.5 L943.6,491.7 L944.1,491.0 L944.6,491.7 L945.1,491.6 L945.6,491.5 L946.1,491.6 L946.6,491.5 L947.1,491.6 L947.6,490.7 L948.1,491.7 L948.6,491.7 L949.1,491.7 L949.6,491.3 L950.1,491.7 L950.6,491.4 L951.1,491.3 L951.6,490.6 L952.1,491.1 L952.6,491.4 L953.1,491.4 L953.5,491.7 Z" fill="#1ee01e" transform="translate(-450,-90)"/><path d="M478.6,491.7 L478.6,490.6 L479.1,490.0 L479.6,491.2 L480.1,490.1 L480.6,490.8 L481.1,490.8 L481.6,489.6 L482.1,490.6 L482.6,490.7 L483.1,490.0 L483.6,488.5 L484.1,484.7 L484.6,475.5 L485.1,467.4 L485.6,466.1 L486.1,474.2 L486.6,484.2 L487.1,489.5 L487.6,491.2 L488.1,490.8 L488.6,490.8 L489.1,490.9 L489.6,490.5 L490.1,490.9 L490.6,487.1 L491.1,469.7 L491.6,402.5 L492.1,235.1 L492.6,101.1 L493.1,101.1 L493.6,101.1 L494.1,101.1 L494.6,302.7 L495.1,431.6 L495.6,479.0 L496.1,486.4 L496.6,487.8 L497.1,487.1 L497.6,483.0 L498.1,476.9 L498.6,470.4 L499.1,469.7 L499.6,474.0 L500.1,480.3 L500.6,485.3 L501.1,486.5 L501.6,487.7 L502.1,485.9 L502.6,488.7 L503.1,487.8 L503.6,487.5 L504.1,488.6 L504.6,484.3 L505.1,488.6 L505.6,486.3 L506.1,486.4 L506.6,483.9 L507.1,487.6 L507.6,483.8 L508.1,484.8 L508.6,482.6 L509.1,481.4 L509.6,479.0 L510.1,481.4 L510.6,481.6 L511.1,482.5 L511.6,481.5 L512.1,486.5 L512.6,480.1 L513.1,472.8 L513.6,446.4 L514.1,366.3 L514.6,194.1 L515.1,101.1 L515.6,101.1 L516.1,101.1 L516.6,101.1 L517.1,101.1 L517.6,101.1 L518.1,129.6 L518.6,328.5 L519.1,433.0 L519.6,472.7 L520.1,479.4 L520.6,482.1 L521.1,482.0 L521.6,482.9 L522.1,482.9 L522.6,482.4 L523.1,481.7 L523.6,483.5 L524.1,483.5 L524.6,480.7 L525.1,482.6 L525.6,484.5 L526.1,480.5 L526.6,482.5 L527.1,484.3 L527.6,485.0 L528.1,482.8 L528.6,482.2 L529.1,475.5 L529.6,457.1 L530.1,417.3 L530.6,354.1 L531.1,286.7 L531.6,240.6 L532.1,238.7 L532.6,287.6 L533.1,356.2 L533.6,416.8 L534.1,457.0 L534.6,475.4 L535.1,482.2 L535.6,485.5 L536.1,484.0 L536.6,483.4 L537.1,484.8 L537.6,485.3 L538.1,485.4 L538.6,486.1 L539.1,486.2 L539.6,485.8 L540.1,486.3 L540.6,485.9 L541.1,487.2 L541.6,485.2 L542.1,485.6 L542.6,486.9 L543.1,488.2 L543.6,485.8 L544.1,484.7 L544.6,486.7 L545.1,486.5 L545.6,486.6 L546.1,485.4 L546.6,487.1 L547.1,485.2 L547.6,486.5 L548.1,485.3 L548.6,486.3 L549.1,486.6 L549.6,487.9 L550.1,487.2 L550.6,486.8 L551.1,485.9 L551.6,486.4 L552.1,487.4 L552.6,486.3 L553.1,485.8 L553.6,487.0 L554.1,487.3 L554.6,487.3 L555.1,486.2 L555.6,486.5 L556.1,487.9 L556.6,486.7 L557.1,487.6 L557.6,487.9 L558.1,486.0 L558.6,486.5 L559.1,488.0 L559.6,487.3 L560.1,486.9 L560.6,488.0 L561.1,487.6 L561.6,486.9 L562.1,489.2 L562.6,487.3 L563.1,486.9 L563.6,487.2 L564.1,488.9 L564.6,487.4 L565.1,488.5 L565.6,487.3 L566.1,487.3 L566.6,487.7 L567.1,488.6 L567.6,488.5 L568.1,487.2 L568.6,488.8 L569.1,487.6 L569.6,487.6 L570.1,488.3 L570.6,486.0 L571.1,488.1 L571.6,486.3 L572.1,490.0 L572.6,490.2 L573.1,487.4 L573.6,487.8 L574.1,488.6 L574.6,488.4 L575.1,490.0 L575.6,489.0 L576.1,489.3 L576.6,488.7 L577.1,487.8 L577.6,488.5 L578.1,488.3 L578.6,489.2 L579.1,489.0 L579.6,488.6 L580.1,488.9 L580.6,487.7 L581.1,489.4 L581.6,487.2 L582.1,489.6 L582.6,488.0 L583.1,489.5 L583.6,487.5 L584.1,488.8 L584.6,488.6 L585.1,488.3 L585.6,489.5 L586.1,489.8 L586.6,490.6 L587.1,488.1 L587.6,489.6 L588.1,489.5 L588.6,489.1 L589.1,487.4 L589.6,490.1 L590.1,488.2 L590.6,487.8 L591.1,485.6 L591.6,485.1 L592.1,481.2 L592.6,477.2 L593.1,474.1 L593.6,472.8 L594.1,474.9 L594.6,476.1 L595.1,479.1 L595.6,483.2 L596.1,485.9 L596.6,486.3 L597.1,488.0 L597.6,489.0 L598.1,488.3 L598.6,490.1 L599.1,489.1 L599.6,489.5 L600.1,489.5 L600.6,489.0 L601.1,489.0 L601.6,488.7 L602.1,488.4 L602.6,486.8 L603.1,488.1 L603.6,486.9 L604.1,487.2 L604.6,488.1 L605.1,487.6 L605.6,489.2 L606.1,488.1 L606.6,489.8 L607.1,489.8 L607.6,489.4 L608.1,489.2 L608.6,489.2 L609.1,489.2 L609.6,490.0 L610.1,490.5 L610.6,489.5 L611.1,489.7 L611.6,490.5 L612.1,489.2 L612.6,489.8 L613.1,490.6 L613.6,489.6 L614.1,490.9 L614.6,490.6 L615.1,489.7 L615.6,491.0 L616.1,490.0 L616.6,490.9 L617.1,489.5 L617.6,490.5 L618.1,489.9 L618.6,491.1 L619.1,490.3 L619.6,489.5 L620.1,489.8 L620.6,491.3 L621.1,489.5 L621.6,489.6 L622.1,490.4 L622.6,489.2 L623.1,490.9 L623.6,490.2 L624.1,489.5 L624.6,489.4 L625.1,489.4 L625.6,490.9 L626.1,491.4 L626.6,490.0 L627.1,491.2 L627.6,490.3 L628.1,491.1 L628.6,489.6 L629.1,489.8 L629.6,490.0 L630.1,490.3 L630.6,490.3 L631.1,490.5 L631.6,490.1 L632.1,490.2 L632.6,490.1 L633.1,490.6 L633.6,489.2 L634.1,490.2 L634.6,489.5 L635.1,489.6 L635.6,490.9 L636.1,491.4 L636.6,489.7 L637.1,490.7 L637.6,490.4 L638.1,490.6 L638.6,490.4 L639.1,491.2 L639.6,490.5 L640.1,490.8 L640.6,490.5 L641.1,491.7 L641.6,490.0 L642.1,490.3 L642.6,491.5 L643.1,491.0 L643.6,490.5 L644.1,490.2 L644.6,490.5 L645.1,489.7 L645.6,490.5 L646.1,491.1 L646.6,491.0 L647.1,490.1 L647.6,490.9 L648.1,490.1 L648.6,490.0 L649.1,490.3 L649.6,490.0 L650.1,490.7 L650.6,490.6 L651.1,491.0 L651.6,491.0 L652.1,491.5 L652.6,491.0 L653.1,491.3 L653.6,491.5 L654.1,490.6 L654.6,490.4 L655.1,490.9 L655.6,489.9 L656.1,490.1 L656.6,490.1 L657.1,491.0 L657.6,491.5 L658.1,490.4 L658.6,490.5 L659.1,490.3 L659.6,490.5 L660.1,490.0 L660.6,490.9 L661.1,490.4 L661.6,491.2 L662.1,491.7 L662.6,491.0 L663.1,489.9 L663.6,491.7 L664.1,490.2 L664.6,491.1 L665.1,491.0 L665.6,490.7 L666.1,490.7 L666.6,491.3 L667.1,490.7 L667.6,490.5 L668.1,490.3 L668.6,491.2 L669.1,490.0 L669.6,489.8 L670.1,489.5 L670.6,491.5 L671.1,490.7 L671.6,491.7 L672.1,490.6 L672.6,490.5 L673.1,491.4 L673.6,491.5 L674.1,490.4 L674.6,490.0 L675.1,490.3 L675.6,489.4 L676.1,489.2 L676.6,487.5 L677.1,485.5 L677.6,483.7 L678.1,481.2 L678.6,481.0 L679.1,480.0 L679.6,478.4 L680.1,479.0 L680.6,479.3 L681.1,480.4 L681.6,482.1 L682.1,483.4 L682.6,485.2 L683.1,488.2 L683.6,488.6 L684.1,488.4 L684.6,490.3 L685.1,489.9 L685.6,490.7 L686.1,491.0 L686.6,490.0 L687.1,490.4 L687.6,491.0 L688.1,490.5 L688.6,491.6 L689.1,491.3 L689.6,490.5 L690.1,490.9 L690.6,491.5 L691.1,490.7 L691.6,490.8 L692.1,490.3 L692.6,490.5 L693.1,491.1 L693.6,491.2 L694.1,491.0 L694.6,491.0 L695.1,490.1 L695.6,490.0 L696.1,490.0 L696.6,490.4 L697.1,490.6 L697.6,489.8 L698.1,490.1 L698.6,489.6 L699.1,490.1 L699.6,489.4 L700.1,488.3 L700.6,489.5 L701.1,489.7 L701.6,489.2 L702.1,488.4 L702.6,488.8 L703.1,490.0 L703.6,490.3 L704.1,490.4 L704.6,491.0 L705.1,490.7 L705.6,491.0 L706.1,491.6 L706.6,491.2 L707.1,491.1 L707.6,491.4 L708.1,491.6 L708.6,490.6 L709.1,490.1 L709.6,491.2 L710.1,491.2 L710.6,490.8 L711.1,491.1 L711.6,491.4 L712.1,490.3 L712.6,491.5 L713.1,491.4 L713.6,491.4 L714.1,491.5 L714.6,491.2 L715.1,490.8 L715.6,490.3 L716.1,490.7 L716.6,491.0 L717.1,491.7 L717.6,491.1 L718.1,491.5 L718.6,491.1 L719.1,490.6 L719.6,491.0 L720.1,491.2 L720.6,491.4 L721.1,491.1 L721.6,491.0 L722.1,491.5 L722.6,491.3 L723.1,490.6 L723.6,491.7 L724.1,491.3 L724.6,491.6 L725.1,490.3 L725.6,490.8 L726.1,490.8 L726.6,490.9 L727.1,490.9 L727.6,490.9 L728.1,491.7 L728.6,490.9 L729.1,490.8 L729.6,491.7 L730.1,490.7 L730.6,490.8 L731.1,491.7 L731.6,491.3 L732.1,491.2 L732.6,491.3 L733.1,490.9 L733.6,491.7 L734.1,491.2 L734.6,491.0 L735.1,490.7 L735.6,491.1 L736.1,491.2 L736.6,490.8 L737.1,491.7 L737.6,490.6 L738.1,491.2 L738.6,491.7 L739.1,491.3 L739.6,491.7 L740.1,491.7 L740.6,491.3 L741.1,491.5 L741.6,490.7 L742.1,491.5 L742.6,491.7 L743.1,491.6 L743.6,490.3 L744.1,491.1 L744.6,491.4 L745.1,491.6 L745.6,491.6 L746.1,491.2 L746.6,490.9 L747.1,490.6 L747.6,490.6 L748.1,491.0 L748.6,491.4 L749.1,491.5 L749.6,491.7 L750.1,491.6 L750.6,490.9 L751.1,491.3 L751.6,490.9 L752.1,491.7 L752.6,490.7 L753.1,491.0 L753.6,491.1 L754.1,490.9 L754.6,491.7 L755.1,491.4 L755.6,491.5 L756.1,490.3 L756.6,491.2 L757.1,491.4 L757.6,490.7 L758.1,491.6 L758.6,490.5 L759.1,491.5 L759.6,491.2 L760.1,491.6 L760.6,490.7 L761.1,491.7 L761.6,490.8 L762.1,491.5 L762.6,491.1 L763.1,491.7 L763.6,491.0 L764.1,491.0 L764.6,490.9 L765.1,491.0 L765.6,490.8 L766.1,490.7 L766.6,491.3 L767.1,491.7 L767.6,491.7 L768.1,490.8 L768.6,491.3 L769.1,490.6 L769.6,491.1 L770.1,491.6 L770.6,490.7 L771.1,490.2 L771.6,491.2 L772.1,491.6 L772.6,491.5 L773.1,490.7 L773.6,491.4 L774.1,491.3 L774.6,490.8 L775.1,491.1 L775.6,491.1 L776.1,491.4 L776.6,491.4 L777.1,491.1 L777.6,491.1 L778.1,490.9 L778.6,491.4 L779.1,491.0 L779.6,490.9 L780.1,491.1 L780.6,490.9 L781.1,490.7 L781.6,491.1 L782.1,491.1 L782.6,491.6 L783.1,491.0 L783.6,491.2 L784.1,491.3 L784.6,491.5 L785.1,490.9 L785.6,490.0 L786.1,491.0 L786.6,491.1 L787.1,490.9 L787.6,491.4 L788.1,491.1 L788.6,491.5 L789.1,491.5 L789.6,491.0 L790.1,491.0 L790.6,491.2 L791.1,491.5 L791.6,491.0 L792.1,491.7 L792.6,490.8 L793.1,491.3 L793.6,491.2 L794.1,490.8 L794.6,490.9 L795.1,491.7 L795.6,491.3 L796.1,491.0 L796.6,491.7 L797.1,491.7 L797.6,491.2 L798.1,491.2 L798.6,491.0 L799.1,491.1 L799.6,491.1 L800.1,491.0 L800.6,490.5 L801.1,490.9 L801.6,490.9 L802.1,491.3 L802.6,490.6 L803.1,491.2 L803.6,490.8 L804.1,491.7 L804.6,491.0 L805.1,491.2 L805.6,491.4 L806.1,490.6 L806.6,491.0 L807.1,491.2 L807.6,491.4 L808.1,490.3 L808.6,490.8 L809.1,490.9 L809.6,491.5 L810.1,490.6 L810.6,490.9 L811.1,491.3 L811.6,491.2 L812.1,491.7 L812.6,490.9 L813.1,491.7 L813.6,490.8 L814.1,491.4 L814.6,491.5 L815.1,491.0 L815.6,491.1 L816.1,491.7 L816.6,491.2 L817.1,490.9 L817.6,491.3 L818.1,491.7 L818.6,491.3 L819.1,491.6 L819.6,491.4 L820.1,491.1 L820.6,491.2 L821.1,491.3 L821.6,491.7 L822.1,491.0 L822.6,491.3 L823.1,491.4 L823.6,491.1 L824.1,490.3 L824.6,491.7 L825.1,491.7 L825.6,490.8 L826.1,491.5 L826.6,490.6 L827.1,491.6 L827.6,491.4 L828.1,490.8 L828.6,490.8 L829.1,491.0 L829.6,491.0 L830.1,491.2 L830.6,491.4 L831.1,491.3 L831.6,490.6 L832.1,490.8 L832.6,491.2 L833.1,491.0 L833.6,490.8 L834.1,490.6 L834.6,491.2 L835.1,491.2 L835.6,491.0 L836.1,490.0 L836.6,491.1 L837.1,490.6 L837.6,491.7 L838.1,490.8 L838.6,491.7 L839.1,491.7 L839.6,491.5 L840.1,491.2 L840.6,491.1 L841.1,491.0 L841.6,491.1 L842.1,491.4 L842.6,490.0 L843.1,491.0 L843.6,490.9 L844.1,490.2 L844.6,490.7 L845.1,490.9 L845.6,491.0 L846.1,490.3 L846.6,491.7 L847.1,491.6 L847.6,491.1 L848.1,491.7 L848.6,491.5 L849.1,490.7 L849.6,491.4 L850.1,491.1 L850.6,490.9 L851.1,491.7 L851.6,491.1 L852.1,491.5 L852.6,491.7 L853.1,491.3 L853.6,491.2 L854.1,491.4 L854.6,491.5 L855.1,490.7 L855.6,490.7 L856.1,490.9 L856.6,491.2 L857.1,491.7 L857.6,491.6 L858.1,491.7 L858.6,491.1 L859.1,490.8 L859.6,490.8 L860.1,491.2 L860.6,491.4 L861.1,491.1 L861.6,491.1 L862.1,490.9 L862.6,490.5 L863.1,491.5 L863.6,490.2 L864.1,491.7 L864.6,491.7 L865.1,491.7 L865.6,491.6 L866.1,491.3 L866.6,490.2 L867.1,491.5 L867.6,490.7 L868.1,491.3 L868.6,491.1 L869.1,491.6 L869.6,490.1 L870.1,491.2 L870.6,491.5 L871.1,490.1 L871.6,491.1 L872.1,491.0 L872.6,491.2 L873.1,491.6 L873.6,491.7 L874.1,491.3 L874.6,490.4 L875.1,491.0 L875.6,491.3 L876.1,490.7 L876.6,491.6 L877.1,490.6 L877.6,491.2 L878.1,491.6 L878.6,490.9 L879.1,490.9 L879.6,491.3 L880.1,491.1 L880.6,490.7 L881.1,490.5 L881.6,491.6 L882.1,491.7 L882.6,490.2 L883.1,491.3 L883.6,491.4 L884.1,491.0 L884.6,491.4 L885.1,490.7 L885.6,491.7 L886.1,491.3 L886.6,491.7 L887.1,490.5 L887.6,491.3 L888.1,490.7 L888.6,490.5 L889.1,491.7 L889.6,491.3 L890.1,490.9 L890.6,491.2 L891.1,491.2 L891.6,490.8 L892.1,490.8 L892.6,491.5 L893.1,491.2 L893.6,490.9 L894.1,491.1 L894.6,491.1 L895.1,491.7 L895.6,490.4 L896.1,491.3 L896.6,491.1 L897.1,491.2 L897.6,491.2 L898.1,491.1 L898.6,491.6 L899.1,491.0 L899.6,490.6 L900.1,491.0 L900.6,490.9 L901.1,491.0 L901.6,491.2 L902.1,490.4 L902.6,491.5 L903.1,491.0 L903.6,490.7 L904.1,491.0 L904.6,491.7 L905.1,491.7 L905.6,490.5 L906.1,491.6 L906.6,491.2 L907.1,490.9 L907.6,491.1 L908.1,491.7 L908.6,491.7 L909.1,491.2 L909.6,491.5 L910.1,491.3 L910.6,491.1 L911.1,491.1 L911.6,491.7 L912.1,491.7 L912.6,490.8 L913.1,491.5 L913.6,491.7 L914.1,491.7 L914.6,490.9 L915.1,491.7 L915.6,491.7 L916.1,490.9 L916.6,491.0 L917.1,490.9 L917.6,491.7 L918.1,491.7 L918.6,491.6 L919.1,491.3 L919.6,491.5 L920.1,490.8 L920.6,491.0 L921.1,491.7 L921.6,490.9 L922.1,491.3 L922.6,491.4 L923.1,490.7 L923.6,491.7 L924.1,490.7 L924.6,490.7 L925.1,491.7 L925.6,491.3 L926.1,491.3 L926.6,491.7 L927.1,491.4 L927.6,491.6 L928.1,491.2 L928.6,491.4 L929.1,491.7 L929.6,490.6 L930.1,490.8 L930.6,491.6 L931.1,490.8 L931.6,490.3 L932.1,491.7 L932.6,491.4 L933.1,491.4 L933.6,490.9 L934.1,491.3 L934.6,491.7 L935.1,490.6 L935.6,491.3 L936.1,490.8 L936.6,490.1 L937.1,491.5 L937.6,491.4 L938.1,490.8 L938.6,491.2 L939.1,490.9 L939.6,491.2 L940.1,489.9 L940.6,490.9 L941.1,491.0 L941.6,491.1 L942.1,491.0 L942.6,491.7 L943.1,491.3 L943.6,490.8 L944.1,491.7 L944.6,491.2 L945.1,491.2 L945.6,491.4 L946.1,490.0 L946.6,490.9 L947.1,491.0 L947.6,491.5 L948.1,491.1 L948.6,491.3 L949.1,491.2 L949.6,491.1 L950.1,490.0 L950.6,490.6 L951.1,490.4 L951.6,490.6 L952.1,489.9 L952.6,491.5 L953.1,491.7 L953.5,491.7 Z" fill="#1a1aff" transform="translate(-450,-90)"/><path d="M29.1 248.0 L29.1 401.7" stroke="#a8e060" stroke-width="1.2"/><path d="M35.4 247.8 L35.4 401.7" stroke="#f09030" stroke-width="1"/><path d="M37.4 261.6 L37.4 401.7" stroke="#3030e0" stroke-width="1"/><path d="M41.0 222.6 L41.0 401.7" stroke="#9a3ee8" stroke-width="1"/><path d="M43.3 235.3 L43.3 401.7" stroke="#40f090" stroke-width="1"/><path d="M49.0 210.4 L49.0 401.7" stroke="#40f0f8" stroke-width="1"/><path d="M59.7 247.8 L59.7 401.7" stroke="#40f090" stroke-width="1"/><path d="M66.4 235.3 L66.4 401.7" stroke="#9040e0" stroke-width="1"/><path d="M73.8 222.6 L73.8 401.7" stroke="#e8358a" stroke-width="1"/><path d="M73.6 210.4 L73.6 401.7" stroke="#3d8ee8" stroke-width="1"/><path d="M81.8 247.8 L81.8 401.7" stroke="#84f040" stroke-width="1"/><path d="M143.8 248.4 L143.8 401.7" stroke="#3a3ae0" stroke-width="1"/><path d="M153.9 380.0 L153.9 401.7" stroke="#5a5ae0" stroke-width="1"/><path d="M169.8 248.4 L169.8 401.7" stroke="#a050e0" stroke-width="1"/><path d="M183.1 380.0 L183.1 401.7" stroke="#a050e0" stroke-width="1"/><path d="M229.8 248.4 L229.8 401.7" stroke="#40f0f8" stroke-width="1"/><path d="M250.8 380.0 L250.8 401.7" stroke="#40f0f8" stroke-width="1"/><path d="M405.1 248.4 L405.1 401.7" stroke="#3d8ee8" stroke-width="1"/><path d="M448.6 378.0 L448.6 401.7" stroke="#3d8ee8" stroke-width="1"/><rect x="404.1" y="322.5" width="2" height="79.2" fill="#3d8ee8"/><rect x="448.0" y="378.1" width="1.4" height="23.6" fill="#3d8ee8"/><rect x="453.6" y="397.6" width="2.5" height="4.1" fill="#7ab0f0"/></g><path d="M25.6 401.7 L28.6 401.7 M27.1 391.4 L28.6 391.4 M27.1 381.1 L28.6 381.1 M27.1 370.9 L28.6 370.9 M27.1 360.6 L28.6 360.6 M25.6 350.3 L28.6 350.3 M27.1 340.0 L28.6 340.0 M27.1 329.7 L28.6 329.7 M27.1 319.5 L28.6 319.5 M27.1 309.2 L28.6 309.2 M25.6 298.9 L28.6 298.9 M27.1 288.6 L28.6 288.6 M27.1 278.3 L28.6 278.3 M27.1 268.1 L28.6 268.1 M27.1 257.8 L28.6 257.8 M25.6 247.5 L28.6 247.5 M27.1 237.2 L28.6 237.2 M27.1 226.9 L28.6 226.9 M27.1 216.7 L28.6 216.7 M27.1 206.4 L28.6 206.4 M25.6 196.1 L28.6 196.1 M27.1 185.8 L28.6 185.8 M27.1 175.5 L28.6 175.5 M27.1 165.3 L28.6 165.3 M27.1 155.0 L28.6 155.0 M25.6 144.7 L28.6 144.7 M27.1 134.4 L28.6 134.4 M27.1 124.1 L28.6 124.1 M27.1 113.9 L28.6 113.9 M27.1 103.6 L28.6 103.6 M25.6 93.3 L28.6 93.3 M27.1 83.0 L28.6 83.0 M27.1 72.7 L28.6 72.7 M27.1 62.5 L28.6 62.5 M27.1 52.2 L28.6 52.2 M25.6 41.9 L28.6 41.9 M27.1 31.6 L28.6 31.6 M27.1 21.3 L28.6 21.3 M42.5 401.7 L42.5 403.2 M58.4 401.7 L58.4 403.2 M74.2 401.7 L74.2 403.2 M90.1 401.7 L90.1 404.7 M106.0 401.7 L106.0 403.2 M121.9 401.7 L121.9 403.2 M137.7 401.7 L137.7 403.2 M153.6 401.7 L153.6 404.7 M169.5 401.7 L169.5 403.2 M185.4 401.7 L185.4 403.2 M201.2 401.7 L201.2 403.2 M217.1 401.7 L217.1 404.7 M233.0 401.7 L233.0 403.2 M248.9 401.7 L248.9 403.2 M264.7 401.7 L264.7 403.2 M280.6 401.7 L280.6 404.7 M296.5 401.7 L296.5 403.2 M312.4 401.7 L312.4 403.2 M328.2 401.7 L328.2 403.2 M344.1 401.7 L344.1 404.7 M360.0 401.7 L360.0 403.2 M375.9 401.7 L375.9 403.2 M391.7 401.7 L391.7 403.2 M407.6 401.7 L407.6 404.7 M423.5 401.7 L423.5 403.2 M439.4 401.7 L439.4 403.2 M455.2 401.7 L455.2 403.2 M471.1 401.7 L471.1 404.7 M487.0 401.7 L487.0 403.2 M502.9 401.7 L502.9 403.2" stroke="#999" stroke-width="0.7"/><path d="M28.600000000000023 18 L28.600000000000023 401.7 L503.5 401.7 L503.5 18" stroke="#b8b8b8" stroke-width="0.8" fill="none"/><text x="23.5" y="404.2" text-anchor="end" font-family="Liberation Sans" font-weight="bold" font-size="6.8" fill="#2a2a2a">0</text><text x="23.5" y="352.8" text-anchor="end" font-family="Liberation Sans" font-weight="bold" font-size="6.8" fill="#2a2a2a">50</text><text x="23.5" y="301.4" text-anchor="end" font-family="Liberation Sans" font-weight="bold" font-size="6.8" fill="#2a2a2a">100</text><text x="23.5" y="250.0" text-anchor="end" font-family="Liberation Sans" font-weight="bold" font-size="6.8" fill="#2a2a2a">150</text><text x="23.5" y="198.6" text-anchor="end" font-family="Liberation Sans" font-weight="bold" font-size="6.8" fill="#2a2a2a">200</text><text x="23.5" y="147.2" text-anchor="end" font-family="Liberation Sans" font-weight="bold" font-size="6.8" fill="#2a2a2a">250</text><text x="23.5" y="95.8" text-anchor="end" font-family="Liberation Sans" font-weight="bold" font-size="6.8" fill="#2a2a2a">300</text><text x="23.5" y="44.4" text-anchor="end" font-family="Liberation Sans" font-weight="bold" font-size="6.8" fill="#2a2a2a">350</text><text x="90.1" y="413.5" text-anchor="middle" font-family="Liberation Sans" font-weight="bold" font-size="6.8" fill="#2a2a2a">2</text><text x="153.6" y="413.5" text-anchor="middle" font-family="Liberation Sans" font-weight="bold" font-size="6.8" fill="#2a2a2a">4</text><text x="217.1" y="413.5" text-anchor="middle" font-family="Liberation Sans" font-weight="bold" font-size="6.8" fill="#2a2a2a">6</text><text x="280.6" y="413.5" text-anchor="middle" font-family="Liberation Sans" font-weight="bold" font-size="6.8" fill="#2a2a2a">8</text><text x="344.1" y="413.5" text-anchor="middle" font-family="Liberation Sans" font-weight="bold" font-size="6.8" fill="#2a2a2a">10</text><text x="407.6" y="413.5" text-anchor="middle" font-family="Liberation Sans" font-weight="bold" font-size="6.8" fill="#2a2a2a">12</text><text x="471.1" y="413.5" text-anchor="middle" font-family="Liberation Sans" font-weight="bold" font-size="6.8" fill="#2a2a2a">14</text><text x="244.5" y="422.5" font-family="Liberation Sans" font-size="7.2" fill="#333">Energy [keV]</text><path d="M238 417.5 L240.5 419.5 L238 421.5 Z" fill="#444"/><rect x="42.3" y="196.3" width="20.0" height="14.1" fill="#40f0f8"/><text x="52.3" y="207.4" text-anchor="middle" font-family="Liberation Sans" font-size="10.5" fill="#222">Fe</text><rect x="68.6" y="196.3" width="18.2" height="14.1" fill="#3d8ee8"/><text x="77.7" y="207.4" text-anchor="middle" font-family="Liberation Sans" font-size="10.5" fill="#222">Br</text><rect x="33.8" y="209.0" width="16.4" height="13.6" fill="#9a3ee8"/><text x="42.0" y="219.6" text-anchor="middle" font-family="Liberation Sans" font-size="10.5" fill="#fff">Ti</text><rect x="68.4" y="209.0" width="17.3" height="13.6" fill="#e8358a"/><text x="77.0" y="219.6" text-anchor="middle" font-family="Liberation Sans" font-size="10.5" fill="#222">Al</text><rect x="38.4" y="222.2" width="15.5" height="13.1" fill="#40f090"/><text x="46.1" y="232.3" text-anchor="middle" font-family="Liberation Sans" font-size="10.5" fill="#222">O</text><rect x="58.8" y="222.2" width="23.0" height="13.1" fill="#9040e0"/><text x="70.3" y="232.3" text-anchor="middle" font-family="Liberation Sans" font-size="10.5" fill="#fff">Mg</text><rect x="30.8" y="234.7" width="14.8" height="13.1" fill="#f09030"/><text x="38.2" y="244.8" text-anchor="middle" font-family="Liberation Sans" font-size="10.5" fill="#222">C</text><rect x="53.1" y="234.7" width="21.0" height="13.1" fill="#40f090"/><text x="63.6" y="244.8" text-anchor="middle" font-family="Liberation Sans" font-size="10.5" fill="#222">Na</text><rect x="76.5" y="234.7" width="17.3" height="13.1" fill="#84f040"/><text x="85.1" y="244.8" text-anchor="middle" font-family="Liberation Sans" font-size="10.5" fill="#222">Si</text><rect x="30.2" y="247.8" width="20.9" height="13.8" fill="#3a3ae0"/><text x="40.6" y="258.6" text-anchor="middle" font-family="Liberation Sans" font-size="10.5" fill="#fff">Ca</text><rect x="137.2" y="234.6" width="21.8" height="13.8" fill="#3a3ae0"/><text x="148.1" y="245.4" text-anchor="middle" font-family="Liberation Sans" font-size="10.5" fill="#fff">Ca</text><rect x="164.5" y="234.6" width="17.1" height="13.8" fill="#a050e0"/><text x="173.0" y="245.4" text-anchor="middle" font-family="Liberation Sans" font-size="10.5" fill="#fff">Ti</text><rect x="223.7" y="234.6" width="20.3" height="13.8" fill="#40f0f8"/><text x="233.9" y="245.4" text-anchor="middle" font-family="Liberation Sans" font-size="10.5" fill="#222">Fe</text><rect x="399.0" y="234.6" width="20.5" height="13.8" fill="#3d8ee8"/><text x="409.2" y="245.4" text-anchor="middle" font-family="Liberation Sans" font-size="10.5" fill="#222">Br</text><rect x="24" y="20" width="34.5" height="9.8" fill="#f6f3e2" stroke="#b0aa90" stroke-width="0.6"/><text x="27.5" y="27.599999999999994" font-family="Liberation Sans" font-size="6.6" fill="#222">-0.170 keV</text><rect x="428" y="18" width="80" height="38" fill="#fff"/><path d="M428.5 18 L428.5 56.5 L508 56.5" fill="none" stroke="#5a5a5a" stroke-width="1"/><path d="M432.5 23.5 L449 23.5" stroke="#ff5a5a" stroke-width="0.9"/><text x="453" y="26.3" font-family="Liberation Sans" font-size="8" fill="#222">Test sample 1</text><path d="M432.5 35.5 L449 35.5" stroke="#5aee5a" stroke-width="0.9"/><text x="453" y="38.3" font-family="Liberation Sans" font-size="8" fill="#222">Test sample 2</text><path d="M432.5 47.5 L449 47.5" stroke="#5a5aff" stroke-width="0.9"/><text x="453" y="50.3" font-family="Liberation Sans" font-size="8" fill="#222">Test sample 3</text><rect x="503.5" y="10" width="12" height="60" fill="#e9e9e9"/></svg>
<div class="tb" style="left:964px;top:97px;height:23px"><svg class="a" style="left:9.5px;top:4px" width="10" height="8" viewBox="0 0 10 8"><path d="M0.5 2.2 L3.2 0 L3.2 1.4 L9.5 1.4 L9.5 3 L3.2 3 L3.2 4.4 Z M9.5 5.8 L6.8 3.6 L6.8 5 L0.5 5 L0.5 6.6 L6.8 6.6 L6.8 8 Z" fill="#2a62b8"/></svg><span>I/O</span></div>
<div class="tb" style="left:964px;top:127px;height:23px"><svg class="a" style="left:9px;top:3px" width="11" height="8" viewBox="0 0 11 8"><path d="M1 2 L2 7 L9 7 L10 2 Z" fill="#f0b040"/><path d="M1 2 Q5.5 4.5 10 2 L9.5 5 Q5.5 6 1.5 5 Z" fill="#f8e080"/><path d="M0.8 1 L2 7.3 L9 7.3 L10.2 1" fill="none" stroke="#555" stroke-width="0.9"/></svg><span>Elements</span></div>
<div class="tb" style="left:964px;top:340px;height:23px"><svg class="a" style="left:9px;top:2px" width="12" height="11" viewBox="0 0 12 11"><path d="M1 10 L4 1 L7 10" stroke="#d03030" stroke-width="1.2" fill="none"/><circle cx="8" cy="6" r="2.5" fill="#cfe4f8" stroke="#4080c0" stroke-width="0.9"/></svg><span>Search</span></div>
<div class="tb" style="left:964px;top:369px;height:23px"><div class="a" style="left:11px;top:3px;width:6px;height:9px;background:repeating-linear-gradient(#888 0 1px,#ddd 1px 2px);border:1px solid #999"></div><span>Math</span></div>
<div class="tb" style="left:964px;top:399px;height:23px"><svg class="a" style="left:9px;top:2px" width="11" height="11" viewBox="0 0 11 11"><circle cx="6.5" cy="4.5" r="3" fill="#cfe4f8" stroke="#4080c0" stroke-width="1"/><path d="M4.3 6.7 L1 10" stroke="#c09030" stroke-width="1.6"/></svg><span>Zoom</span></div>
<div class="tb" style="left:964px;top:428px;height:23px"><div class="t" style="left:10px;top:2px;font-size:9px;font-weight:bold;color:#30a040">A</div><span>Scale</span></div>
<div class="tb" style="left:964px;top:458px;height:23px"><svg class="a" style="left:9px;top:2px" width="11" height="11" viewBox="0 0 11 11"><circle cx="5.5" cy="7" r="3.6" fill="#f0c030" stroke="#555" stroke-width="0.7"/><path d="M3 1 L3 4.5 M3 1 L6 1" stroke="#333" stroke-width="1"/></svg><span>Options</span></div>
<div class="tb" style="left:964px;top:487px;height:23px"><div class="t" style="left:10px;top:1px;font-size:10px;font-weight:bold;color:#e02020">&#x2715;</div><span>Delete</span></div>
<div class="hl" style="left:46px;top:521px;width:950px"></div>
<div class="a" style="left:67.5px;top:528px;width:7px;height:7px;border:1px solid #666;background:#fafafa"></div>
<div class="t" style="left:68px;top:526.5px;font-size:7.5px;color:#222">&#x2714;</div>
<div class="t" style="left:77px;top:528px;font-size:7.2px;color:#222">All</div>
<div class="t" style="left:172px;top:528px;font-size:7.2px;color:#222"><span style="font-size:5px;color:#555">&#9654;</span>&nbsp; cps/eV</div>
<div class="t" style="left:233px;top:528px;font-size:7.2px;color:#222"><span style="font-size:5px;color:#555">&#9654;</span>&nbsp; Results [Mass-%(norm.)] &nbsp;<span style="font-size:5px;color:#555">&#9654;</span>&nbsp; Sort: Element</div>
<div class="a" style="left:64px;top:537.5px;width:931px;height:33px;background:#a4b2b9"></div>
<div class="a" style="left:64px;top:538px;width:931px;height:10.2px;background:#718894"></div>
<div class="t" style="left:70px;top:540px;font-size:6.5px;color:#c0b080">&#x2713;</div>
<div class="t" style="left:79px;top:540px;font-size:7px;font-weight:bold;color:#f4f4f4">EDS</div>
<div class="t" style="left:108px;top:540px;font-size:7.2px;color:#f0f0f0">Test sample 1</div>
<div class="a" style="left:155px;top:540.5px;width:16px;height:4.5px;background:#ff1010"></div>
<div class="t" style="left:174px;top:540.5px;font-size:5px;color:#c0b080">&#9662;</div>
<div class="t" style="left:196px;top:540px;font-size:7.2px;color:#f0f0f0">0.00</div>
<div class="t" style="left:237px;top:540px;font-size:7.2px;color:#f4f4f4">C 3.51</div>
<div class="t" style="left:264px;top:540px;font-size:7.2px;color:#f4f4f4">O 38.14</div>
<div class="t" style="left:294.5px;top:540px;font-size:7.2px;color:#f4f4f4">Ti 58.34</div>
<div class="a" style="left:64px;top:549px;width:931px;height:10.2px;background:#718894"></div>
<div class="t" style="left:70px;top:551px;font-size:6.5px;color:#c0b080">&#x2713;</div>
<div class="t" style="left:79px;top:551px;font-size:7px;font-weight:bold;color:#f4f4f4">EDS</div>
<div class="t" style="left:108px;top:551px;font-size:7.2px;color:#f0f0f0">Test sample 2</div>
<div class="a" style="left:155px;top:551.5px;width:16px;height:4.5px;background:#10e010"></div>
<div class="t" style="left:174px;top:551.5px;font-size:5px;color:#c0b080">&#9662;</div>
<div class="t" style="left:196px;top:551px;font-size:7.2px;color:#f0f0f0">0.08</div>
<div class="t" style="left:237px;top:551px;font-size:7.2px;color:#f4f4f4">C 7.89</div>
<div class="t" style="left:264px;top:551px;font-size:7.2px;color:#f4f4f4">O 43.86</div>
<div class="t" style="left:294.5px;top:551px;font-size:7.2px;color:#f4f4f4">Na 6.94</div>
<div class="t" style="left:330.5px;top:551px;font-size:7.2px;color:#f4f4f4">Mg 0.01</div>
<div class="t" style="left:362.5px;top:551px;font-size:7.2px;color:#f4f4f4">Al 4.69</div>
<div class="t" style="left:392px;top:551px;font-size:7.2px;color:#f4f4f4">Si 28.72</div>
<div class="t" style="left:422.5px;top:551px;font-size:7.2px;color:#f4f4f4">Br 7.90</div>
<div class="a" style="left:64px;top:560px;width:931px;height:10.2px;background:#718894"></div>
<div class="t" style="left:70px;top:562px;font-size:6.5px;color:#c0b080">&#x2713;</div>
<div class="t" style="left:79px;top:562px;font-size:7px;font-weight:bold;color:#f4f4f4">EDS</div>
<div class="t" style="left:108px;top:562px;font-size:7.2px;color:#f0f0f0">Test sample 3</div>
<div class="a" style="left:155px;top:562.5px;width:16px;height:4.5px;background:#1010ff"></div>
<div class="t" style="left:174px;top:562.5px;font-size:5px;color:#c0b080">&#9662;</div>
<div class="t" style="left:196px;top:562px;font-size:7.2px;color:#f0f0f0">0.08</div>
<div class="t" style="left:237px;top:562px;font-size:7.2px;color:#f4f4f4">C 8.82</div>
<div class="t" style="left:264px;top:562px;font-size:7.2px;color:#f4f4f4">O 42.80</div>
<div class="t" style="left:294.5px;top:562px;font-size:7.2px;color:#f4f4f4">Mg 23.88</div>
<div class="t" style="left:330.5px;top:562px;font-size:7.2px;color:#f4f4f4">Si 16.85</div>
<div class="t" style="left:362.5px;top:562px;font-size:7.2px;color:#f4f4f4">Ca 1.68</div>
<div class="t" style="left:392px;top:562px;font-size:7.2px;color:#f4f4f4">Ti 0.35</div>
<div class="t" style="left:422.5px;top:562px;font-size:7.2px;color:#f4f4f4">Fe 5.62</div>
</body></html>
